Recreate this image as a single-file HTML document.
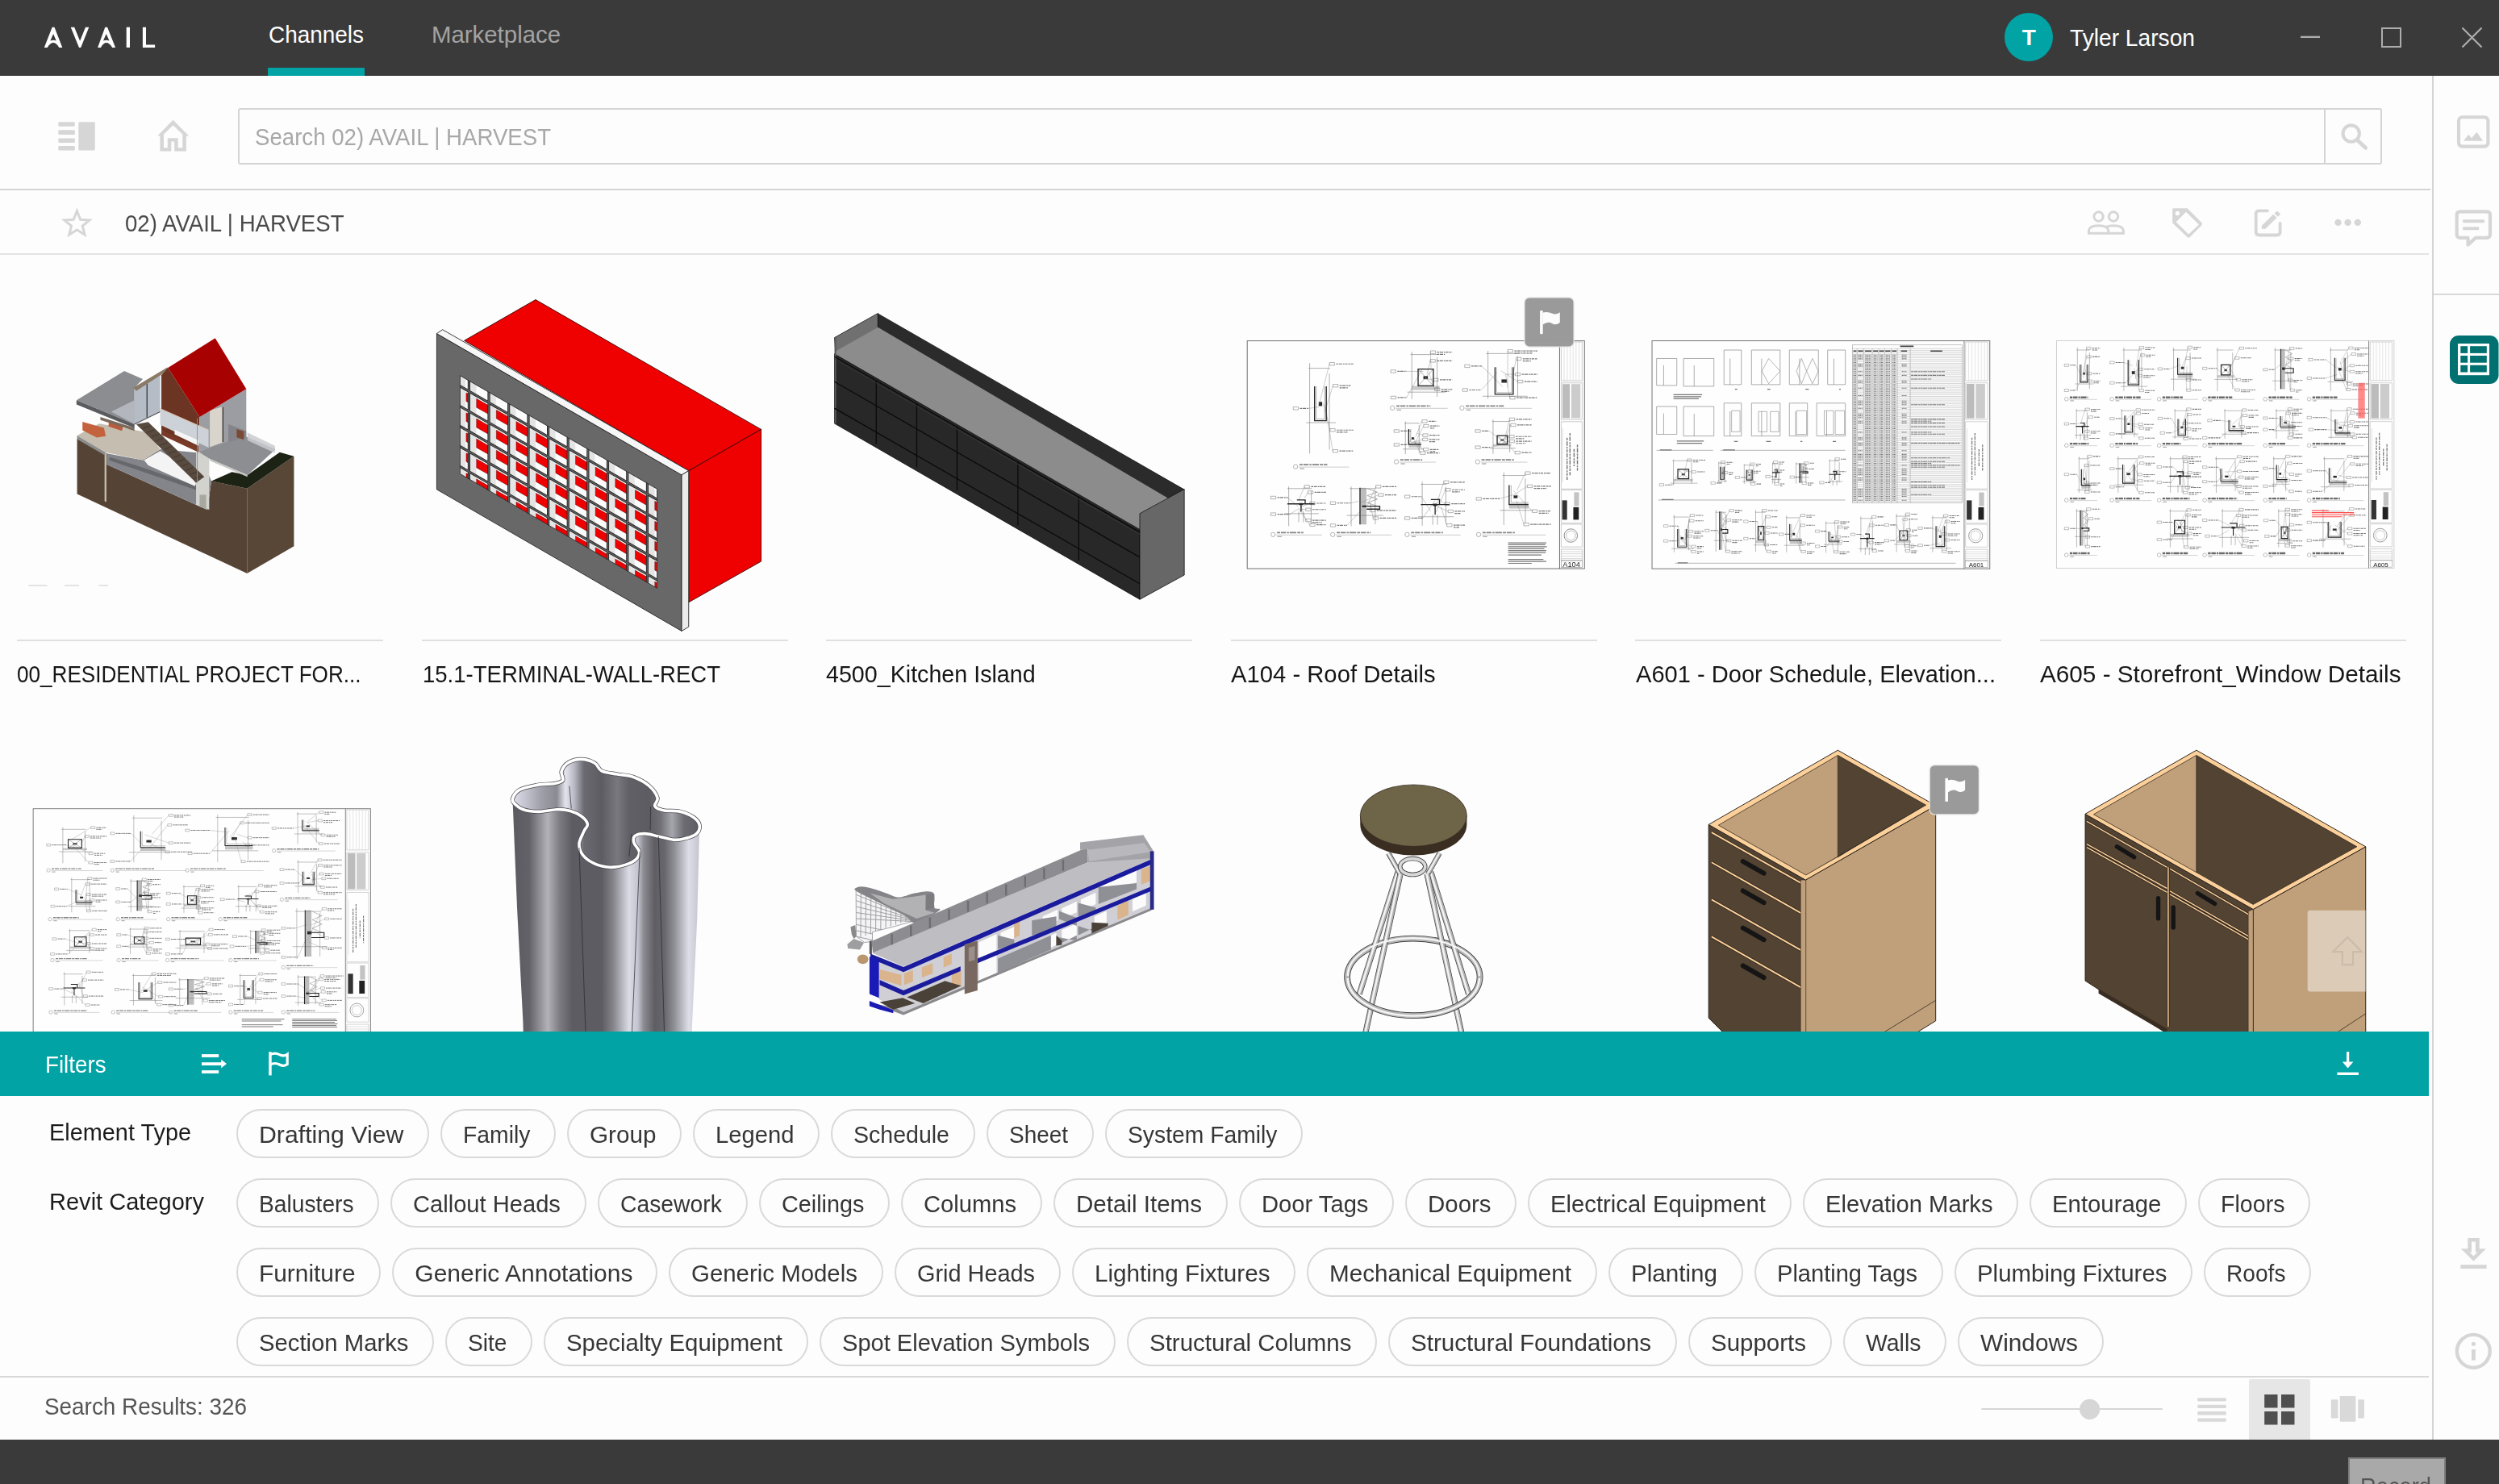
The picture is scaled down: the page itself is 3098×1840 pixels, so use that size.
<!DOCTYPE html>
<html><head><meta charset="utf-8"><title>AVAIL</title>
<style>
html,body{margin:0;padding:0;}
html{width:3098px;height:1840px;overflow:hidden;}
body{width:3098px;height:1840px;position:relative;overflow:hidden;background:#fdfdfd;font-family:"Liberation Sans",sans-serif;}
.a{position:absolute;}
.t{position:absolute;white-space:nowrap;transform-origin:0 0;}
.pill{position:absolute;box-sizing:border-box;height:61px;border:2px solid #d9d9d9;border-radius:31px;background:#fdfdfd;}
svg{position:absolute;overflow:visible;}
</style></head><body><div id="w" style="position:absolute;left:0;top:0;width:3098px;height:1840px;overflow:hidden;opacity:0.999;">

<div class="a" style="left:0;top:0;width:3098px;height:94px;background:#3a3a3a;"></div>
<div class="a" style="left:332px;top:84px;width:120px;height:10px;background:#00a3a5;"></div>
<svg style="left:0;top:0" width="3098" height="94" viewBox="0 0 3098 94"><g fill="#ffffff">
<path fill-rule="evenodd" d="M64.7,33.7 L67.5,33.7 L77.3,58.9 L73.3,58.9 Q66.1,47.0 58.7,58.9 L54.8,58.9 Z M66.1,42.0 L69.7,50.4 Q66.1,49.3 62.4,50.4 Z"/>
<path d="M87.7,33.7 L92.2,33.7 L99.1,50.8 L106.0,33.7 L110.3,33.7 L100.2,58.9 L98.0,58.9 Z"/>
<path fill-rule="evenodd" d="M130.3,33.7 L133.1,33.7 L143.1,58.9 L139.2,58.9 Q131.7,47.0 124.9,58.9 L121.1,58.9 Z M131.7,42.0 L135.5,50.4 Q131.7,49.3 128.0,50.4 Z"/>
<rect x="156.7" y="33.7" width="4.3" height="25.2"/>
<path d="M176.9,33.7 H181 V55.6 H192.1 V58.9 H176.9 Z"/>
</g></svg>

<div class="t" style="left:333.00px;top:27.90px;font-size:30px;line-height:30px;color:#ffffff;transform:scaleX(0.9310);">Channels</div>
<div class="t" style="left:534.50px;top:27.90px;font-size:30px;line-height:30px;color:#a3a3a3;transform:scaleX(0.9793);">Marketplace</div>
<div class="a" style="left:2485px;top:16px;width:60px;height:60px;border-radius:30px;background:#00a3a5;"></div>
<div class="t" style="left:2506.80px;top:33.30px;font-size:28px;line-height:28px;color:#ffffff;font-weight:bold;">T</div>
<div class="t" style="left:2566.00px;top:32.41px;font-size:30px;line-height:30px;color:#ffffff;transform:scaleX(0.9387);">Tyler Larson</div>
<svg style="left:0;top:0" width="3098" height="94" viewBox="0 0 3098 94">
<rect x="2852" y="44.7" width="24" height="2.3" fill="#adadad"/>
<rect x="2953" y="35" width="23" height="23" fill="none" stroke="#adadad" stroke-width="2"/>
<path d="M3052.5,34.5 L3076.5,58.5 M3076.5,34.5 L3052.5,58.5" stroke="#adadad" stroke-width="2.2" fill="none"/>
</svg>

<div class="a" style="left:295px;top:134px;width:2658px;height:70px;box-sizing:border-box;border:2px solid #d4d4d4;border-radius:3px;"></div>
<div class="a" style="left:2881px;top:136px;width:2px;height:66px;background:#d4d4d4;"></div>
<div class="t" style="left:315.50px;top:155.41px;font-size:30px;line-height:30px;color:#a8a8a8;transform:scaleX(0.9210);">Search 02) AVAIL | HARVEST</div>
<div class="a" style="left:0;top:234px;width:3013px;height:2px;background:#d4d4d4;"></div>
<svg style="left:0;top:94px" width="3013" height="140" viewBox="0 94 3013 140"><g fill="#d6d6d6">
<rect x="72.3" y="151.2" width="20.5" height="5.6" rx="1.2"/>
<rect x="72.3" y="161.3" width="20.5" height="5.6" rx="1.2"/>
<rect x="72.3" y="171.4" width="20.5" height="5.6" rx="1.2"/>
<rect x="72.3" y="181" width="20.5" height="5.6" rx="1.2"/>
<rect x="97.3" y="151.2" width="20.5" height="35.4" rx="1.5"/>
<path d="M214.5,148.8 L234.2,168.4 L230.9,168.4 L230.9,187.6 L216.2,187.6 L216.2,175.6 L212.3,175.6 L212.3,187.6 L198.4,187.6 L198.4,168.4 L195.2,168.4 Z M214.5,155.2 L203,166.6 L203,183.2 L207.8,183.2 L207.8,171.2 L220.7,171.2 L220.7,183.2 L226.3,183.2 L226.3,166.6 Z" fill-rule="evenodd"/>
</g>
<circle cx="2914.7" cy="165.6" r="10.2" fill="none" stroke="#d6d6d6" stroke-width="4.1"/>
<path d="M2922.6,174 L2932.6,183.3" stroke="#d6d6d6" stroke-width="4.8" stroke-linecap="round" fill="none"/>
</svg>

<div class="t" style="left:155.30px;top:261.81px;font-size:30px;line-height:30px;color:#4a4a4a;transform:scaleX(0.9199);">02) AVAIL | HARVEST</div>
<div class="a" style="left:0;top:314px;width:3011px;height:2px;background:#e4e4e4;"></div>
<svg style="left:0;top:236px" width="3013" height="78" viewBox="0 236 3013 78">
<path d="M95.4,261.6 L99.7,272.2 L111,272.9 L102.3,280.1 L105.1,291.1 L95.4,285.0 L85.7,291.1 L88.5,280.1 L79.8,272.9 L91.1,272.2 Z" fill="none" stroke="#d6d6d6" stroke-width="3" stroke-linejoin="miter"/>
<g fill="none" stroke="#d6d6d6" stroke-width="3">
<circle cx="2601.6" cy="268.5" r="5.7"/><circle cx="2620" cy="268.5" r="5.7"/>
<path d="M2589.5,289.2 L2589.5,285.5 Q2590.5,279.7 2601.6,279.7 Q2612.7,279.7 2613.7,285.5 L2613.7,289.2 Z"/>
<path d="M2611,281.3 Q2614.5,279.7 2620,279.7 Q2631.5,279.7 2632.4,285.5 L2632.4,289.2 L2613.7,289.2"/>
</g>
<g fill="#d6d6d6">
<path fill-rule="evenodd" d="M2694.6,258.2 L2711.6,258.2 L2729.4,276 Q2730.6,277.7 2729.4,279.2 L2714.8,294 Q2713.2,295.3 2711.6,294 L2693.2,276.4 L2693.2,259.6 Q2693.2,258.2 2694.6,258.2 Z M2710,262.8 L2697.6,275.3 L2713.2,290.6 L2726,278.4 Z M2699.4,261.8 A2.7,2.7 0 1 0 2699.4,267.2 A2.7,2.7 0 1 0 2699.4,261.8 Z"/>
<path d="M2803.9,279.7 L2818.2,265.8 L2822.5,270 L2808.4,283.8 L2803.9,283.8 Z"/>
<path d="M2819.6,264.4 L2823.2,261.4 L2827.2,265.4 L2823.8,268.8 Z"/>
<circle cx="2898.5" cy="275.9" r="4.2"/><circle cx="2910.6" cy="275.9" r="4.2"/><circle cx="2922.8" cy="275.9" r="4.2"/>
</g>
<path d="M2811,261.3 L2800.5,261.3 Q2796.7,261.3 2796.7,265 L2796.7,287.8 Q2796.7,291.5 2800.5,291.5 L2822.8,291.5 Q2826.6,291.5 2826.6,287.8 L2826.6,277" fill="none" stroke="#d6d6d6" stroke-width="3.8" stroke-linecap="round"/>
</svg>

<div class="a" style="left:21px;top:793px;width:454px;height:2px;background:#e0e0e0;"></div>
<div class="t" style="left:20.80px;top:821.40px;font-size:30px;line-height:30px;color:#161616;transform:scaleX(0.8702);">00_RESIDENTIAL PROJECT FOR...</div>
<div class="a" style="left:522.6px;top:793px;width:454px;height:2px;background:#e0e0e0;"></div>
<div class="t" style="left:523.50px;top:821.40px;font-size:30px;line-height:30px;color:#161616;transform:scaleX(0.9173);">15.1-TERMINAL-WALL-RECT</div>
<div class="a" style="left:1024.2px;top:793px;width:454px;height:2px;background:#e0e0e0;"></div>
<div class="t" style="left:1024.00px;top:821.40px;font-size:30px;line-height:30px;color:#161616;transform:scaleX(0.9549);">4500_Kitchen Island</div>
<div class="a" style="left:1525.8px;top:793px;width:454px;height:2px;background:#e0e0e0;"></div>
<div class="t" style="left:1526.40px;top:821.40px;font-size:30px;line-height:30px;color:#161616;transform:scaleX(0.9745);">A104 - Roof Details</div>
<div class="a" style="left:2027.4px;top:793px;width:454px;height:2px;background:#e0e0e0;"></div>
<div class="t" style="left:2028.20px;top:821.40px;font-size:30px;line-height:30px;color:#161616;transform:scaleX(0.9690);">A601 - Door Schedule, Elevation...</div>
<div class="a" style="left:2529px;top:793px;width:454px;height:2px;background:#e0e0e0;"></div>
<div class="t" style="left:2529.40px;top:821.40px;font-size:30px;line-height:30px;color:#161616;transform:scaleX(0.9903);">A605 - Storefront_Window Details</div>
<svg style="left:0;top:316px" width="3013" height="963" viewBox="0 316 3013 963">
<defs>
<linearGradient id="gb" x1="105" x2="1060" y1="0" y2="0" gradientUnits="userSpaceOnUse">
<stop offset="0.000" stop-color="#5a5a60"/>
<stop offset="0.089" stop-color="#626268"/>
<stop offset="0.188" stop-color="#b2b2b8"/>
<stop offset="0.251" stop-color="#7c7c82"/>
<stop offset="0.319" stop-color="#5c5c62"/>
<stop offset="0.476" stop-color="#5c5c62"/>
<stop offset="0.539" stop-color="#85858b"/>
<stop offset="0.623" stop-color="#dcdce6"/>
<stop offset="0.670" stop-color="#c4c4d0"/>
<stop offset="0.702" stop-color="#8a8a90"/>
<stop offset="0.759" stop-color="#5e5e64"/>
<stop offset="0.812" stop-color="#66666c"/>
<stop offset="0.864" stop-color="#8e8e95"/>
<stop offset="0.942" stop-color="#dedee8"/>
<stop offset="1.000" stop-color="#c4c4d0"/>
</linearGradient>
<linearGradient id="gi" x1="105" x2="1060" y1="0" y2="0" gradientUnits="userSpaceOnUse">
<stop offset="0.000" stop-color="#e0e0ea"/>
<stop offset="0.058" stop-color="#c8c8d4"/>
<stop offset="0.152" stop-color="#a0a0aa"/>
<stop offset="0.236" stop-color="#8a8a92"/>
<stop offset="0.283" stop-color="#e4e4ee"/>
<stop offset="0.330" stop-color="#b8b8c4"/>
<stop offset="0.382" stop-color="#6a6a70"/>
<stop offset="0.476" stop-color="#5c5c62"/>
<stop offset="0.560" stop-color="#78787e"/>
<stop offset="0.623" stop-color="#606066"/>
<stop offset="0.728" stop-color="#5c5c62"/>
<stop offset="0.791" stop-color="#707076"/>
<stop offset="0.853" stop-color="#a6a6ae"/>
<stop offset="0.916" stop-color="#6c6c72"/>
<stop offset="1.000" stop-color="#5c5c62"/>
</linearGradient>
<linearGradient id="gt" x1="0" x2="1" y1="0" y2="0"><stop offset="0" stop-color="#6a6a6a"/><stop offset="0.35" stop-color="#f0f0f0"/><stop offset="0.7" stop-color="#c8c8c8"/><stop offset="1" stop-color="#5a5a5a"/></linearGradient>
</defs>
<g transform="translate(80,400) scale(0.14821)">
<polygon points="105,971 105,1434 1527,2098 1527,1389 1228,1325 1194,1567 356,1187 356,1095" fill="#554435"/>
<polygon points="1527,1389 1919,1118 1919,1870 1527,2098" fill="#584637"/>
<polygon points="1228,1325 1527,1389 1919,1118 1800,1085 1530,1275 1400,1250" fill="#1d2314"/>
<polygon points="356,1095 356,1187 1194,1567 1228,1325 1130,1090 800,1060 655,1150" fill="#83858a"/>
<polygon points="380,1125 655,1212 1100,1365 1100,1400 370,1150" fill="#66686c"/>
<polygon points="665,1150 800,1075 1005,1195 1100,1345 1090,1368 700,1195" fill="#f4f4f4"/>
<polygon points="1100,1085 1210,1060 1210,1565 1100,1525" fill="#d2d3cf"/>
<polygon points="1130,1440 1185,1440 1185,1560 1130,1540" fill="#a8a89e"/>
<polygon points="335,1085 350,1090 350,1500 335,1495" fill="#c9c0b4"/>
<polygon points="105,945 290,845 600,900 700,920 800,1060 655,1150 340,1085" fill="#c5bdaf"/>
<polygon points="105,945 340,1085 340,1112 105,975" fill="#8c8c8a"/>
<polygon points="150,830 330,880 345,950 270,962 150,900" fill="#c4623e"/>
<polygon points="370,828 490,870 480,905 368,868" fill="#b85c40"/>
<polygon points="300,790 585,880 585,905 300,815" fill="#7a6a5c"/>
<polygon points="1120,1080 1330,1000 1520,955 1765,1060 1530,1275 1215,1140" fill="#8d8e92"/>
<polygon points="1530,920 1760,1030 1760,1092 1530,985" fill="#c9cbd0" opacity="0.85"/>
<polygon points="1215,1140 1530,1275 1530,1290 1215,1155" fill="#c8c8c4"/>
<polygon points="100,650 500,405 655,472 585,545 585,850" fill="#8b8d91"/>
<polygon points="100,650 585,850 585,882 100,685" fill="#5a5b5e"/>
<polygon points="390,745 585,650 585,848" fill="#b3b7bd"/>
<polygon points="585,545 800,440 800,745 690,795 585,850" fill="#b6bcc6"/>
<line x1="690" y1="500" x2="690" y2="795" stroke="#3a3d42" stroke-width="9"/>
<line x1="585" y1="850" x2="800" y2="745" stroke="#4a4d52" stroke-width="7"/>
<polygon points="575,545 860,375 872,395 600,572" fill="#8a7a68"/>
<polygon points="810,440 865,378 1130,790 1120,1080 810,900" fill="#6c3423"/>
<polygon points="1130,790 1520,555 1520,960 1330,1005 1120,1080" fill="#9c9ca3"/>
<polygon points="1215,735 1330,700 1330,1000 1215,1040" fill="#d9d4cc"/>
<line x1="1325" y1="705" x2="1325" y2="1000" stroke="#2c2c30" stroke-width="9"/>
<polygon points="1370,850 1520,905 1520,960 1370,1000" fill="#84848a"/>
<polygon points="1440,890 1500,910 1500,980 1440,960" fill="#7a4a34"/>
<polygon points="800,720 1205,900 1205,1045 800,855" fill="#cdd2d8"/>
<polygon points="920,895 1120,985 1120,1030 920,935" fill="#f6f6f6"/>
<line x1="800" y1="720" x2="1205" y2="900" stroke="#d8c8b8" stroke-width="8"/>
<polygon points="810,900 1120,1040 1120,1085 810,940" fill="#7a3a28"/>
<polygon points="865,378 1260,130 1520,555 1130,790" fill="#a80000"/>
<polygon points="600,850 700,832 1170,1290 1100,1340" fill="#584a3e"/>
<path d="M656,885 l60,-22 M692,920 l60,-22 M728,955 l60,-22 M764,990 l60,-22 M800,1025 l60,-22 M836,1060 l60,-22 M872,1095 l60,-22 M908,1130 l60,-22 M944,1165 l60,-22 M980,1200 l60,-22 M1016,1235 l60,-22 M1052,1270 l60,-22 M1088,1305 l60,-22" stroke="#3e342c" stroke-width="6" fill="none"/>
<line x1="1110" y1="800" x2="1110" y2="1340" stroke="#8a8f96" stroke-width="6"/>
</g>
<g transform="translate(20,380) scale(0.25613)">
<path d="M60,1350 h90 M235,1350 h70 M400,1350 h45" stroke="#d4d4d4" stroke-width="5" fill="none"/>
</g>
<g transform="translate(522,360) scale(0.28973)">
<polygon points="185,215 490,40 1455,595 1145,772" fill="#f00000" stroke="#300" stroke-width="3"/>
<polygon points="1145,772 1455,595 1455,1160 1145,1335" fill="#f00000" stroke="#300" stroke-width="3"/>
<polygon points="67,185 67,852 1115,1458 1115,790" fill="#686868" stroke="#222" stroke-width="3"/>
<polygon points="67,185 92,168 1145,772 1115,790" fill="#f6f6f6" stroke="#222" stroke-width="3"/>
<polygon points="1115,790 1145,772 1145,1440 1115,1458" fill="#ebebeb" stroke="#222" stroke-width="3"/>
<clipPath id="cg"><polygon points="167,365 167,785 1010,1275 1010,850"/></clipPath>
<polygon points="167,365 167,785 1010,1275 1010,850" fill="#fbfbfb"/>
<g clip-path="url(#cg)">
<path d="M163,321 L190,337 L190,423 L163,407Z M163,407 L190,423 L190,509 L163,493Z M163,493 L190,509 L190,595 L163,579Z M163,579 L190,595 L190,681 L163,665Z M163,665 L190,681 L190,767 L163,751Z M163,751 L190,767 L190,853 L163,837Z M205,346 L236,363 L236,449 L205,432Z M205,432 L236,449 L236,535 L205,518Z M205,518 L236,535 L236,621 L205,604Z M205,604 L236,621 L236,707 L205,690Z M205,690 L236,707 L236,793 L205,776Z M205,776 L236,793 L236,879 L205,862Z M290,395 L320,412 L320,498 L290,481Z M290,481 L320,498 L320,584 L290,567Z M290,567 L320,584 L320,670 L290,653Z M290,653 L320,670 L320,756 L290,739Z M290,739 L320,756 L320,842 L290,825Z M290,825 L320,842 L320,928 L290,911Z M375,443 L405,461 L405,547 L375,529Z M375,529 L405,547 L405,633 L375,615Z M375,615 L405,633 L405,719 L375,701Z M375,701 L405,719 L405,805 L375,787Z M375,787 L405,805 L405,891 L375,873Z M375,873 L405,891 L405,977 L375,959Z M459,492 L490,510 L490,596 L459,578Z M459,578 L490,596 L490,682 L459,664Z M459,664 L490,682 L490,768 L459,750Z M459,750 L490,768 L490,854 L459,836Z M459,836 L490,854 L490,940 L459,922Z M459,922 L490,940 L490,1026 L459,1008Z M544,541 L575,559 L575,645 L544,627Z M544,627 L575,645 L575,731 L544,713Z M544,713 L575,731 L575,817 L544,799Z M544,799 L575,817 L575,903 L544,885Z M544,885 L575,903 L575,989 L544,971Z M544,971 L575,989 L575,1075 L544,1057Z M629,590 L660,607 L660,693 L629,676Z M629,676 L660,693 L660,779 L629,762Z M629,762 L660,779 L660,865 L629,848Z M629,848 L660,865 L660,951 L629,934Z M629,934 L660,951 L660,1037 L629,1020Z M629,1020 L660,1037 L660,1123 L629,1106Z M714,639 L744,656 L744,742 L714,725Z M714,725 L744,742 L744,828 L714,811Z M714,811 L744,828 L744,914 L714,897Z M714,897 L744,914 L744,1000 L714,983Z M714,983 L744,1000 L744,1086 L714,1069Z M714,1069 L744,1086 L744,1172 L714,1155Z M799,687 L829,705 L829,791 L799,773Z M799,773 L829,791 L829,877 L799,859Z M799,859 L829,877 L829,963 L799,945Z M799,945 L829,963 L829,1049 L799,1031Z M799,1031 L829,1049 L829,1135 L799,1117Z M799,1117 L829,1135 L829,1221 L799,1203Z M883,736 L914,754 L914,840 L883,822Z M883,822 L914,840 L914,926 L883,908Z M883,908 L914,926 L914,1012 L883,994Z M883,994 L914,1012 L914,1098 L883,1080Z M883,1080 L914,1098 L914,1184 L883,1166Z M883,1166 L914,1184 L914,1270 L883,1252Z M968,785 L999,803 L999,889 L968,871Z M968,871 L999,889 L999,975 L968,957Z M968,957 L999,975 L999,1061 L968,1043Z M968,1043 L999,1061 L999,1147 L968,1129Z M968,1129 L999,1147 L999,1233 L968,1215Z M968,1215 L999,1233 L999,1319 L968,1301Z" fill="#e4e4e4"/>
<path d="M193,438 L204,444 L204,482 L193,475Z M193,524 L204,530 L204,568 L193,561Z M193,610 L204,616 L204,654 L193,647Z M193,696 L204,702 L204,740 L193,733Z M193,782 L204,788 L204,826 L193,819Z M237,463 L289,493 L289,530 L237,501Z M237,549 L289,579 L289,616 L237,587Z M237,635 L289,665 L289,702 L237,673Z M237,721 L289,751 L289,788 L237,759Z M237,807 L289,837 L289,874 L237,845Z M322,512 L374,542 L374,579 L322,549Z M322,598 L374,628 L374,665 L322,635Z M322,684 L374,714 L374,751 L322,721Z M322,770 L374,800 L374,837 L322,807Z M322,856 L374,886 L374,923 L322,893Z M407,561 L459,591 L459,628 L407,598Z M407,647 L459,677 L459,714 L407,684Z M407,733 L459,763 L459,800 L407,770Z M407,819 L459,849 L459,886 L407,856Z M407,905 L459,935 L459,972 L407,942Z M492,610 L543,639 L543,677 L492,647Z M492,696 L543,725 L543,763 L492,733Z M492,782 L543,811 L543,849 L492,819Z M492,868 L543,897 L543,935 L492,905Z M492,954 L543,983 L543,1021 L492,991Z M576,658 L628,688 L628,726 L576,696Z M576,744 L628,774 L628,812 L576,782Z M576,830 L628,860 L628,898 L576,868Z M576,916 L628,946 L628,984 L576,954Z M576,1002 L628,1032 L628,1070 L576,1040Z M661,707 L713,737 L713,774 L661,745Z M661,793 L713,823 L713,860 L661,831Z M661,879 L713,909 L713,946 L661,917Z M661,965 L713,995 L713,1032 L661,1003Z M661,1051 L713,1081 L713,1118 L661,1089Z M746,756 L798,786 L798,823 L746,793Z M746,842 L798,872 L798,909 L746,879Z M746,928 L798,958 L798,995 L746,965Z M746,1014 L798,1044 L798,1081 L746,1051Z M746,1100 L798,1130 L798,1167 L746,1137Z M831,805 L883,835 L883,872 L831,842Z M831,891 L883,921 L883,958 L831,928Z M831,977 L883,1007 L883,1044 L831,1014Z M831,1063 L883,1093 L883,1130 L831,1100Z M831,1149 L883,1179 L883,1216 L831,1186Z M916,854 L967,883 L967,921 L916,891Z M916,940 L967,969 L967,1007 L916,977Z M916,1026 L967,1055 L967,1093 L916,1063Z M916,1112 L967,1141 L967,1179 L916,1149Z M916,1198 L967,1227 L967,1265 L916,1235Z M1000,902 L1052,932 L1052,970 L1000,940Z M1000,988 L1052,1018 L1052,1056 L1000,1026Z M1000,1074 L1052,1104 L1052,1142 L1000,1112Z M1000,1160 L1052,1190 L1052,1228 L1000,1198Z M1000,1246 L1052,1276 L1052,1314 L1000,1284Z" fill="#f00000" stroke="#400" stroke-width="1.5"/>
<path d="M205,346 L205,862 M290,395 L290,911 M375,443 L375,959 M459,492 L459,1008 M544,541 L544,1057 M629,590 L629,1106 M714,639 L714,1155 M799,687 L799,1203 M883,736 L883,1252 M968,785 L968,1301 M120,383 L1053,920 M120,469 L1053,1006 M120,555 L1053,1092 M120,641 L1053,1178 M120,727 L1053,1264" stroke="#1c1c1c" stroke-width="11" fill="none"/>
<path d="M205,346 L205,862 M290,395 L290,911 M375,443 L375,959 M459,492 L459,1008 M544,541 L544,1057 M629,590 L629,1106 M714,639 L714,1155 M799,687 L799,1203 M883,736 L883,1252 M968,785 L968,1301 M120,383 L1053,920 M120,469 L1053,1006 M120,555 L1053,1092 M120,641 L1053,1178 M120,727 L1053,1264" stroke="#5c5c5c" stroke-width="6" fill="none"/>
</g>
<polygon points="167,365 167,785 1010,1275 1010,850" fill="none" stroke="#222" stroke-width="3"/>
</g>
<g transform="translate(1024,370) scale(0.26283)">
<polygon points="40,185 245,70 245,140 45,252" fill="#707070" stroke="#1a1a1a" stroke-width="3"/>
<polygon points="245,72 1690,902 1612,945 245,138" fill="#2b2b2b" stroke="#111" stroke-width="3"/>
<polygon points="40,262 46,248 245,136 1612,942 1480,1018 1480,1090" fill="#8c8c8c"/>
<polygon points="40,262 40,590 1480,1420 1480,1090" fill="#282828" stroke="#0c0c0c" stroke-width="3"/>
<polygon points="1480,1015 1690,900 1690,1305 1480,1420" fill="#676767" stroke="#111" stroke-width="3"/>
<polygon points="40,185 48,180 48,590 40,590" fill="#5a5a5a"/>
<path d="M237,385 L237,687 M428,495 L428,797 M618,604 L618,906 M905,769 L905,1071 M1192,934 L1192,1236 M40,275 L1480,1103 M40,393 L1480,1221 M40,518 L1480,1346" stroke="#0a0a0a" stroke-width="5" fill="none"/>
<line x1="40" y1="285" x2="1480" y2="1113" stroke="#3c3c3c" stroke-width="3"/>
</g>
<g transform="translate(1536,360) scale(0.24265)">
<rect x="42" y="258" width="1723" height="1164" fill="#fefefe" stroke="#6c6c6c" stroke-width="4"/>
<path d="M1638,258 V1422" stroke="#555" stroke-width="3.5" fill="none"/>
<path d="M1646,264 H1753 V462 H1646Z M1646,473 H1753 V660 H1646Z M1646,671 H1753 V1015 H1646Z M1646,1020 H1753 V1189 H1646Z M1646,1195 H1753 V1311 H1646Z M1646,1323 H1753 V1381 H1646Z" stroke="#aaa" stroke-width="2.5" fill="none"/>
<path d="M1661,264 V462 M1677,264 V462 M1692,264 V462 M1707,264 V462 M1722,264 V462 M1738,264 V462" stroke="#c4c4c4" stroke-width="2" fill="none"/>
<rect x="1652" y="479" width="38" height="174" fill="#8f8f8f" opacity="0.6"/>
<rect x="1698" y="479" width="46" height="174" fill="#9a9a9a" opacity="0.5"/>
<path d="M1653,706 V980" stroke="#bbb" stroke-width="2" fill="none"/>
<path d="M1676,753 V968 M1691,729 V945 M1712,811 V898 M1729,788 V921" stroke="#777" stroke-width="6" stroke-dasharray="14 5 22 6 9 4" fill="none"/>
<rect x="1651" y="1073" width="25" height="99" fill="#333"/>
<rect x="1708" y="1108" width="28" height="64" fill="#222"/>
<rect x="1712" y="1032" width="25" height="70" fill="#aaa" opacity="0.7"/>
<circle cx="1695" cy="1253" r="34" fill="none" stroke="#777" stroke-width="3.5"/>
<circle cx="1695" cy="1253" r="24" fill="none" stroke="#999" stroke-width="2.5"/>
<path d="M1646,1335 H1753 M1646,1346 H1753 M1646,1358 H1753 M1646,1370 H1753" stroke="#b5b5b5" stroke-width="2" fill="none"/>
<rect x="1646" y="1380" width="107" height="36" fill="none" stroke="#888" stroke-width="2.5"/>
<text x="1698" y="1412" font-family="Liberation Sans, sans-serif" font-size="38" fill="#222" text-anchor="middle">A104</text>
<rect x="407" y="570" width="18" height="21" fill="#2a2a2a"/>
<path d="M394,490 V658 H438 V490 M361,372 V834 M462,425 V813 M343,676 H495 M355,398 H465" stroke="#6e6e6e" stroke-width="2.2" fill="none"/>
<path d="M462,376 L409,583 M480,487 L438,622 M357,603 L409,596 M465,714 L431,579 M479,821 L440,585" stroke="#8a8a8a" stroke-width="1.8" fill="none"/>
<path d="M462,369 h26 v14 h-26Z M480,480 h26 v14 h-26Z M277,596 h26 v14 h-26Z M465,707 h26 v14 h-26Z M479,814 h26 v14 h-26Z" stroke="#666" stroke-width="2" fill="none"/>
<path d="M496,376 h88 M514,487 h56 M514,498 h43 M311,603 h46 M499,714 h85 M499,725 h55 M513,821 h69" stroke="#777" stroke-width="5" stroke-dasharray="11 3 17 4 7 3 13 4" fill="none"/>
<path d="M386,490 V666 H446 V490" stroke="#262626" stroke-width="5.5" fill="none"/>
<circle cx="289" cy="901" r="11" fill="none" stroke="#666" stroke-width="2"/>
<path d="M309,891 h142" stroke="#858585" stroke-width="7" stroke-dasharray="16 4 26 5 10 4 34 5" fill="none"/>
<path d="M305,903 H562" stroke="#999" stroke-width="2" fill="none"/>
<path d="M311,911 h22" stroke="#888" stroke-width="4" fill="none"/>
<rect x="883" y="488" width="141" height="21" fill="#c9c9c9"/>
<rect x="942" y="438" width="23" height="16" fill="#2a2a2a"/>
<path d="M915,402 l78,86 M993,402 l-78,86 M883,314 V555 M1012,342 V544 M860,520 H1055 M876,328 H1016" stroke="#6e6e6e" stroke-width="2.2" fill="none"/>
<path d="M978,316 L981,397 M977,360 L960,429 M856,414 L941,414 M992,457 L950,451 M1000,506 L969,418 M856,548 L939,397" stroke="#8a8a8a" stroke-width="1.8" fill="none"/>
<path d="M978,309 h26 v14 h-26Z M977,353 h26 v14 h-26Z M775,407 h26 v14 h-26Z M992,450 h26 v14 h-26Z M1000,499 h26 v14 h-26Z M776,541 h26 v14 h-26Z" stroke="#666" stroke-width="2" fill="none"/>
<path d="M1012,316 h77 M1012,327 h40 M1011,360 h78 M809,414 h47 M1026,457 h63 M1034,506 h55 M1034,517 h39 M810,548 h47" stroke="#777" stroke-width="5" stroke-dasharray="11 3 17 4 7 3 13 4" fill="none"/>
<path d="M915,402 h78 v86 h-78Z" stroke="#262626" stroke-width="5.5" fill="none"/>
<circle cx="784" cy="601" r="11" fill="none" stroke="#666" stroke-width="2"/>
<path d="M804,591 h174" stroke="#858585" stroke-width="7" stroke-dasharray="16 4 26 5 10 4 34 5" fill="none"/>
<path d="M800,603 H1066" stroke="#999" stroke-width="2" fill="none"/>
<path d="M806,611 h22" stroke="#888" stroke-width="4" fill="none"/>
<rect x="1341" y="455" width="28" height="17" fill="#2a2a2a"/>
<path d="M1316,393 V523 H1393 V393 M1272,309 V554 M1424,337 V543 M1244,541 H1474 M1262,323 H1428" stroke="#6e6e6e" stroke-width="2.2" fill="none"/>
<path d="M1373,310 L1373,497 M1416,350 L1398,443 M1240,387 L1348,493 M1411,429 L1358,429 M1424,466 L1338,411 M1238,509 L1318,420 M1384,549 L1362,433" stroke="#8a8a8a" stroke-width="1.8" fill="none"/>
<path d="M1373,303 h26 v14 h-26Z M1416,343 h26 v14 h-26Z M1153,380 h26 v14 h-26Z M1411,422 h26 v14 h-26Z M1424,459 h26 v14 h-26Z M1142,502 h26 v14 h-26Z M1384,542 h26 v14 h-26Z" stroke="#666" stroke-width="2" fill="none"/>
<path d="M1407,310 h117 M1407,321 h91 M1450,350 h74 M1450,361 h41 M1187,387 h53 M1445,429 h79 M1458,466 h66 M1176,509 h62 M1418,549 h106" stroke="#777" stroke-width="5" stroke-dasharray="11 3 17 4 7 3 13 4" fill="none"/>
<path d="M1308,393 V531 H1401 V393" stroke="#262626" stroke-width="5.5" fill="none"/>
<circle cx="1139" cy="601" r="11" fill="none" stroke="#666" stroke-width="2"/>
<path d="M1159,591 h194" stroke="#858585" stroke-width="7" stroke-dasharray="16 4 26 5 10 4 34 5" fill="none"/>
<path d="M1155,603 H1496" stroke="#999" stroke-width="2" fill="none"/>
<path d="M1161,611 h22" stroke="#888" stroke-width="4" fill="none"/>
<rect x="867" y="786" width="64" height="17" fill="#c4c4c4"/>
<rect x="882" y="751" width="13" height="11" fill="#2a2a2a"/>
<path d="M877,709 V776 H931 M850,670 V837 M920,689 V829 M837,811 H943 M846,679 H922" stroke="#6e6e6e" stroke-width="2.2" fill="none"/>
<path d="M935,669 L902,749 M943,693 L895,789 M878,719 L876,721 M939,740 L907,731 M938,762 L883,777 M864,789 L881,755 M942,813 L896,775 M926,831 L891,753" stroke="#8a8a8a" stroke-width="1.8" fill="none"/>
<path d="M935,662 h26 v14 h-26Z M943,686 h26 v14 h-26Z M792,712 h26 v14 h-26Z M939,733 h26 v14 h-26Z M938,755 h26 v14 h-26Z M792,782 h26 v14 h-26Z M942,806 h26 v14 h-26Z M926,824 h26 v14 h-26Z" stroke="#666" stroke-width="2" fill="none"/>
<path d="M969,669 h38 M977,693 h47 M977,704 h21 M826,719 h52 M973,740 h51 M972,762 h52 M972,773 h30 M826,789 h38 M976,813 h46 M976,824 h26 M960,831 h64" stroke="#777" stroke-width="5" stroke-dasharray="11 3 17 4 7 3 13 4" fill="none"/>
<path d="M867,709 V786 H931" stroke="#262626" stroke-width="5.5" fill="none"/>
<circle cx="804" cy="876" r="11" fill="none" stroke="#666" stroke-width="2"/>
<path d="M824,866 h112" stroke="#858585" stroke-width="7" stroke-dasharray="16 4 26 5 10 4 34 5" fill="none"/>
<path d="M820,878 H1006" stroke="#999" stroke-width="2" fill="none"/>
<path d="M826,886 h22" stroke="#888" stroke-width="4" fill="none"/>
<rect x="1298" y="786" width="93" height="11" fill="#c9c9c9"/>
<rect x="1337" y="761" width="15" height="8" fill="#2a2a2a"/>
<path d="M1319,742 l52,44 M1371,742 l-52,44 M1298,660 V836 M1383,680 V828 M1283,807 H1412 M1293,670 H1386" stroke="#6e6e6e" stroke-width="2.2" fill="none"/>
<path d="M1382,659 L1352,784 M1388,688 L1361,762 M1279,719 L1344,769 M1380,747 L1361,765 M1381,771 L1345,779 M1285,802 L1335,789 M1410,829 L1350,760" stroke="#8a8a8a" stroke-width="1.8" fill="none"/>
<path d="M1382,652 h26 v14 h-26Z M1388,681 h26 v14 h-26Z M1207,712 h26 v14 h-26Z M1380,740 h26 v14 h-26Z M1381,764 h26 v14 h-26Z M1207,795 h26 v14 h-26Z M1410,822 h26 v14 h-26Z" stroke="#666" stroke-width="2" fill="none"/>
<path d="M1416,659 h78 M1422,688 h72 M1241,719 h37 M1414,747 h80 M1414,758 h44 M1415,771 h79 M1415,782 h49 M1241,802 h44 M1444,829 h50" stroke="#777" stroke-width="5" stroke-dasharray="11 3 17 4 7 3 13 4" fill="none"/>
<path d="M1319,742 h52 v44 h-52Z" stroke="#262626" stroke-width="5.5" fill="none"/>
<circle cx="1219" cy="876" r="11" fill="none" stroke="#666" stroke-width="2"/>
<path d="M1239,866 h168" stroke="#858585" stroke-width="7" stroke-dasharray="16 4 26 5 10 4 34 5" fill="none"/>
<path d="M1235,878 H1473" stroke="#999" stroke-width="2" fill="none"/>
<path d="M1241,886 h22" stroke="#888" stroke-width="4" fill="none"/>
<rect x="306" y="1087" width="21" height="10" fill="#2a2a2a"/>
<path d="M305,1131 V1185 M329,1131 V1185 M254,1002 V1205 M369,1025 V1196 M233,1141 H407 M247,1013 H372" stroke="#6e6e6e" stroke-width="2.2" fill="none"/>
<path d="M334,1003 L306,1069 M352,1032 L335,1060 M249,1059 L303,1105 M362,1088 L316,1108 M341,1120 L313,1117 M260,1144 L308,1114 M341,1175 L316,1101 M362,1198 L306,1117" stroke="#8a8a8a" stroke-width="1.8" fill="none"/>
<path d="M334,996 h26 v14 h-26Z M352,1025 h26 v14 h-26Z M162,1052 h26 v14 h-26Z M362,1081 h26 v14 h-26Z M341,1113 h26 v14 h-26Z M162,1137 h26 v14 h-26Z M341,1168 h26 v14 h-26Z M362,1191 h26 v14 h-26Z" stroke="#666" stroke-width="2" fill="none"/>
<path d="M368,1003 h76 M386,1032 h58 M196,1059 h53 M396,1088 h48 M375,1120 h69 M196,1144 h64 M375,1175 h69 M375,1186 h49 M396,1198 h48" stroke="#777" stroke-width="5" stroke-dasharray="11 3 17 4 7 3 13 4" fill="none"/>
<path d="M247,1091 H386 M317,1091 V1131 M296,1071 h42 v20" stroke="#262626" stroke-width="5.5" fill="none"/>
<circle cx="174" cy="1248" r="11" fill="none" stroke="#666" stroke-width="2"/>
<path d="M194,1238 h135" stroke="#858585" stroke-width="7" stroke-dasharray="16 4 26 5 10 4 34 5" fill="none"/>
<path d="M190,1250 H423" stroke="#999" stroke-width="2" fill="none"/>
<path d="M196,1258 h22" stroke="#888" stroke-width="4" fill="none"/>
<rect x="618" y="1009" width="33" height="187" fill="#bdbdbd"/>
<rect x="629" y="1099" width="22" height="9" fill="#2a2a2a"/>
<path d="M655,1013 L707,1031 L655,1049 L707,1067 L655,1085 L707,1103 M573,1002 V1205 M696,1025 V1196 M551,1150 H737 M566,1013 H700" stroke="#6e6e6e" stroke-width="2.2" fill="none"/>
<path d="M699,1003 L654,1104 M712,1045 L624,1084 M569,1087 L611,1078 M670,1125 L671,1086 M685,1164 L671,1087 M552,1201 L629,1118" stroke="#8a8a8a" stroke-width="1.8" fill="none"/>
<path d="M699,996 h26 v14 h-26Z M712,1038 h26 v14 h-26Z M467,1080 h26 v14 h-26Z M670,1118 h26 v14 h-26Z M685,1157 h26 v14 h-26Z M467,1194 h26 v14 h-26Z" stroke="#666" stroke-width="2" fill="none"/>
<path d="M733,1003 h71 M746,1045 h58 M501,1087 h68 M704,1125 h100 M719,1164 h85 M501,1201 h51" stroke="#777" stroke-width="5" stroke-dasharray="11 3 17 4 7 3 13 4" fill="none"/>
<path d="M618,1009 V1196 M652,1103 h67 v15 h-67" stroke="#262626" stroke-width="5.5" fill="none"/>
<circle cx="479" cy="1248" r="11" fill="none" stroke="#666" stroke-width="2"/>
<path d="M499,1238 h174" stroke="#858585" stroke-width="7" stroke-dasharray="16 4 26 5 10 4 34 5" fill="none"/>
<path d="M495,1250 H780" stroke="#999" stroke-width="2" fill="none"/>
<path d="M501,1258 h22" stroke="#888" stroke-width="4" fill="none"/>
<rect x="991" y="1090" width="22" height="12" fill="#2a2a2a"/>
<path d="M990,1147 V1198 M1014,1147 V1198 M936,978 V1203 M1057,1004 V1193 M914,1157 H1097 M929,991 H1061" stroke="#6e6e6e" stroke-width="2.2" fill="none"/>
<path d="M1046,980 L1007,1100 M1054,1019 L1007,1134 M932,1054 L979,1129 M1051,1091 L1016,1059 M1068,1129 L1014,1105 M938,1164 L1002,1074 M1062,1200 L1032,1107" stroke="#8a8a8a" stroke-width="1.8" fill="none"/>
<path d="M1046,973 h26 v14 h-26Z M1054,1012 h26 v14 h-26Z M847,1047 h26 v14 h-26Z M1051,1084 h26 v14 h-26Z M1068,1122 h26 v14 h-26Z M847,1157 h26 v14 h-26Z M1062,1193 h26 v14 h-26Z" stroke="#666" stroke-width="2" fill="none"/>
<path d="M1080,980 h74 M1088,1019 h66 M1088,1030 h40 M881,1054 h51 M1085,1091 h69 M1102,1129 h52 M1102,1140 h29 M881,1164 h57 M1096,1200 h58 M1096,1211 h29" stroke="#777" stroke-width="5" stroke-dasharray="11 3 17 4 7 3 13 4" fill="none"/>
<path d="M929,1095 H1075 M1002,1095 V1147 M980,1069 h44 v26" stroke="#262626" stroke-width="5.5" fill="none"/>
<circle cx="859" cy="1248" r="11" fill="none" stroke="#666" stroke-width="2"/>
<path d="M879,1238 h163" stroke="#858585" stroke-width="7" stroke-dasharray="16 4 26 5 10 4 34 5" fill="none"/>
<path d="M875,1250 H1132" stroke="#999" stroke-width="2" fill="none"/>
<path d="M881,1258 h22" stroke="#888" stroke-width="4" fill="none"/>
<rect x="1380" y="1094" width="100" height="21" fill="#c4c4c4"/>
<rect x="1403" y="1048" width="20" height="14" fill="#2a2a2a"/>
<path d="M1390,995 V1084 H1479 M1353,930 V1199 M1463,961 V1187 M1333,1124 H1499 M1346,946 H1466" stroke="#6e6e6e" stroke-width="2.2" fill="none"/>
<path d="M1462,934 L1420,1022 M1473,1001 L1406,1044 M1331,1065 L1404,1044 M1498,1128 L1401,1022 M1455,1196 L1418,1075" stroke="#8a8a8a" stroke-width="1.8" fill="none"/>
<path d="M1462,927 h26 v14 h-26Z M1473,994 h26 v14 h-26Z M1212,1058 h26 v14 h-26Z M1498,1121 h26 v14 h-26Z M1455,1189 h26 v14 h-26Z" stroke="#666" stroke-width="2" fill="none"/>
<path d="M1496,934 h98 M1507,1001 h87 M1507,1012 h65 M1246,1065 h85 M1532,1128 h62 M1532,1139 h49 M1489,1196 h105" stroke="#777" stroke-width="5" stroke-dasharray="11 3 17 4 7 3 13 4" fill="none"/>
<path d="M1380,995 V1094 H1479" stroke="#262626" stroke-width="5.5" fill="none"/>
<circle cx="1224" cy="1248" r="11" fill="none" stroke="#666" stroke-width="2"/>
<path d="M1244,1238 h167" stroke="#858585" stroke-width="7" stroke-dasharray="16 4 26 5 10 4 34 5" fill="none"/>
<path d="M1240,1250 H1567" stroke="#999" stroke-width="2" fill="none"/>
<path d="M1246,1258 h22" stroke="#888" stroke-width="4" fill="none"/>
<path d="M1375,1290 h195 M1375,1300 h190 M1375,1310 h198 M1375,1320 h185 M1375,1330 h195 M1375,1340 h192 M1375,1352 h170 M1375,1375 h180 M1375,1385 h195 M1375,1395 h120" stroke="#7a7a7a" stroke-width="5" fill="none"/>
</g>
<g transform="translate(2038,410) scale(0.20893)">
<rect x="48" y="60" width="2004" height="1353" fill="#fefefe" stroke="#7a7a7a" stroke-width="5"/>
<path d="M1900,60 V1413" stroke="#555" stroke-width="3.5" fill="none"/>
<path d="M1908,67 H2040 V297 H1908Z M1908,310 H2040 V527 H1908Z M1908,540 H2040 V939 H1908Z M1908,946 H2040 V1142 H1908Z M1908,1149 H2040 V1284 H1908Z M1908,1298 H2040 V1366 H1908Z" stroke="#aaa" stroke-width="2.5" fill="none"/>
<path d="M1927,67 V297 M1946,67 V297 M1965,67 V297 M1983,67 V297 M2002,67 V297 M2021,67 V297" stroke="#c4c4c4" stroke-width="2" fill="none"/>
<rect x="1914" y="316" width="46" height="204" fill="#8f8f8f" opacity="0.6"/>
<rect x="1969" y="316" width="55" height="204" fill="#9a9a9a" opacity="0.5"/>
<path d="M1918,581 V899" stroke="#bbb" stroke-width="2" fill="none"/>
<path d="M1946,635 V885 M1964,608 V858 M1988,703 V804 M2009,676 V831" stroke="#777" stroke-width="6" stroke-dasharray="14 5 22 6 9 4" fill="none"/>
<rect x="1915" y="1007" width="30" height="115" fill="#333"/>
<rect x="1984" y="1048" width="33" height="74" fill="#222"/>
<rect x="1988" y="960" width="30" height="81" fill="#aaa" opacity="0.7"/>
<circle cx="1968" cy="1217" r="41" fill="none" stroke="#777" stroke-width="3.5"/>
<circle cx="1968" cy="1217" r="29" fill="none" stroke="#999" stroke-width="2.5"/>
<path d="M1908,1312 H2040 M1908,1325 H2040 M1908,1339 H2040 M1908,1352 H2040" stroke="#b5b5b5" stroke-width="2" fill="none"/>
<rect x="1908" y="1364" width="132" height="42" fill="none" stroke="#888" stroke-width="2.5"/>
<text x="1972" y="1403" font-family="Liberation Sans, sans-serif" font-size="38" fill="#222" text-anchor="middle">A601</text>
<path d="M75,165 H195 V325 H75Z M117,205 V325 M235,165 H415 V330 H235Z M298,206 V330 M475,115 H578 V320 H475Z M511,166 V320 M638,115 H808 V320 H638Z M698,166 V320 M863,115 H1035 V320 H863Z M923,166 V320 M1090,115 H1195 V320 H1090Z M1127,166 V320 M75,450 H195 V615 H75Z M117,491 V615 M235,450 H415 V625 H235Z M298,494 V625 M475,430 H578 V625 H475Z M511,479 V625 M638,430 H808 V625 H638Z M698,479 V625 M863,430 H970 V625 H863Z M900,479 V625 M1025,430 H1195 V625 H1025Z M1084,479 V625" stroke="#7d7d7d" stroke-width="3" fill="none"/>
<path d="M700,240 L740,165 L808,240 L740,315Z M905,240 L935,165 L965,240 L935,315Z M965,240 L1000,165 L1035,240 L1000,315Z M520,475 h50 v125 h-50Z M680,480 h50 v120 h-50Z M750,480 h50 v120 h-50Z M905,475 h60 v140 h-60Z M1070,475 h55 v140 h-55Z M1135,475 h55 v140 h-55Z" stroke="#8a8a8a" stroke-width="3" fill="none"/>
<path d="M75,710 H410 M455,710 H1195 M85,1005 H1195 M185,1380 H1850" stroke="#8a8a8a" stroke-width="3" fill="none"/>
<path d="M540,348 h14 M732,348 h18 M958,348 h20 M1158,348 h10 M535,657 h22 M725,657 h28 M928,657 h12 M1120,657 h20 M175,380 h170 M175,392 h165 M175,404 h150 M195,655 h160 M195,668 h150 M95,708 h70 M470,708 h70 M105,1002 h70 M200,1378 h60" stroke="#777" stroke-width="6" fill="none"/>
<rect x="175" y="880" width="116" height="14" fill="#c9c9c9"/>
<rect x="224" y="848" width="19" height="10" fill="#2a2a2a"/>
<path d="M201,823 l65,56 M266,823 l-65,56 M175,764 V916 M282,781 V909 M156,905 H318 M169,772 H285" stroke="#6e6e6e" stroke-width="2.2" fill="none"/>
<path d="M257,768 L234,877 M283,838 L235,830 M172,915 L214,823" stroke="#8a8a8a" stroke-width="1.8" fill="none"/>
<path d="M257,761 h26 v14 h-26Z M283,831 h26 v14 h-26Z M92,908 h26 v14 h-26Z" stroke="#666" stroke-width="2" fill="none"/>
<path d="M291,768 h73 M291,779 h34 M317,838 h47 M126,915 h46" stroke="#777" stroke-width="5" stroke-dasharray="11 3 17 4 7 3 13 4" fill="none"/>
<path d="M201,823 h65 v56 h-65Z" stroke="#262626" stroke-width="5.5" fill="none"/>
<rect x="461" y="841" width="7" height="9" fill="#2a2a2a"/>
<path d="M461,808 V874 H467 V808 M444,778 V908 M481,792 V902 M437,892 H493 M442,785 H482" stroke="#6e6e6e" stroke-width="2.2" fill="none"/>
<path d="M457,781 L461,867 M471,843 L464,817 M461,904 L462,835" stroke="#8a8a8a" stroke-width="1.8" fill="none"/>
<path d="M457,774 h26 v14 h-26Z M471,836 h26 v14 h-26Z M397,897 h26 v14 h-26Z" stroke="#666" stroke-width="2" fill="none"/>
<path d="M491,781 h38 M491,792 h20 M505,843 h24 M505,854 h19 M431,904 h30" stroke="#777" stroke-width="5" stroke-dasharray="11 3 17 4 7 3 13 4" fill="none"/>
<path d="M453,808 V882 H475 V808" stroke="#262626" stroke-width="5.5" fill="none"/>
<rect x="620" y="853" width="10" height="7" fill="#2a2a2a"/>
<path d="M617,826 V878 H634 V826 M595,792 V909 M650,805 V904 M586,896 H668 M592,798 H651" stroke="#6e6e6e" stroke-width="2.2" fill="none"/>
<path d="M630,792 L620,844 M616,834 L626,850 M603,871 L616,862 M634,910 L627,857" stroke="#8a8a8a" stroke-width="1.8" fill="none"/>
<path d="M630,785 h26 v14 h-26Z M616,827 h26 v14 h-26Z M542,864 h26 v14 h-26Z M634,903 h26 v14 h-26Z" stroke="#666" stroke-width="2" fill="none"/>
<path d="M664,792 h30 M664,803 h18 M650,834 h44 M650,845 h27 M576,871 h27 M668,910 h26" stroke="#777" stroke-width="5" stroke-dasharray="11 3 17 4 7 3 13 4" fill="none"/>
<path d="M609,826 V886 H642 V826" stroke="#262626" stroke-width="5.5" fill="none"/>
<rect x="780" y="839" width="7" height="7" fill="#2a2a2a"/>
<path d="M772,873 V900 M796,873 V900 M763,782 V908 M801,797 V903 M757,883 H813 M761,790 H802" stroke="#6e6e6e" stroke-width="2.2" fill="none"/>
<path d="M768,780 L794,835 M774,828 L778,825 M782,866 L782,821 M774,909 L792,840" stroke="#8a8a8a" stroke-width="1.8" fill="none"/>
<path d="M768,773 h26 v14 h-26Z M774,821 h26 v14 h-26Z M722,859 h26 v14 h-26Z M774,902 h26 v14 h-26Z" stroke="#666" stroke-width="2" fill="none"/>
<path d="M802,780 h32 M802,791 h21 M808,828 h26 M808,839 h12 M756,866 h26 M808,909 h26 M808,920 h16" stroke="#777" stroke-width="5" stroke-dasharray="11 3 17 4 7 3 13 4" fill="none"/>
<path d="M761,842 H807 M784,842 V873 M777,827 h14 v15" stroke="#262626" stroke-width="5.5" fill="none"/>
<rect x="924" y="787" width="16" height="116" fill="#bdbdbd"/>
<rect x="929" y="835" width="11" height="5" fill="#2a2a2a"/>
<path d="M941,790 L966,799 L941,809 L966,818 L941,828 L966,837 M903,782 V908 M961,797 V903 M892,870 H980 M899,790 H963" stroke="#6e6e6e" stroke-width="2.2" fill="none"/>
<path d="M950,786 L942,848 M944,821 L932,836 M932,869 L921,836 M938,905 L928,833" stroke="#8a8a8a" stroke-width="1.8" fill="none"/>
<path d="M950,779 h26 v14 h-26Z M944,814 h26 v14 h-26Z M867,862 h26 v14 h-26Z M938,898 h26 v14 h-26Z" stroke="#666" stroke-width="2" fill="none"/>
<path d="M984,786 h25 M978,821 h31 M901,869 h31 M972,905 h37 M972,916 h21" stroke="#777" stroke-width="5" stroke-dasharray="11 3 17 4 7 3 13 4" fill="none"/>
<path d="M924,787 V903 M940,837 h32 v9 h-32" stroke="#262626" stroke-width="5.5" fill="none"/>
<rect x="1127" y="850" width="10" height="8" fill="#2a2a2a"/>
<path d="M1121,886 V919 M1145,886 V919 M1102,763 V907 M1159,780 V900 M1091,896 H1178 M1098,772 H1160" stroke="#6e6e6e" stroke-width="2.2" fill="none"/>
<path d="M1134,762 L1132,868 M1125,836 L1132,864 M1104,902 L1122,863" stroke="#8a8a8a" stroke-width="1.8" fill="none"/>
<path d="M1134,755 h26 v14 h-26Z M1125,829 h26 v14 h-26Z M1042,895 h26 v14 h-26Z" stroke="#666" stroke-width="2" fill="none"/>
<path d="M1168,762 h31 M1159,836 h40 M1076,902 h28" stroke="#777" stroke-width="5" stroke-dasharray="11 3 17 4 7 3 13 4" fill="none"/>
<path d="M1098,853 H1167 M1133,853 V886 M1122,836 h21 v16" stroke="#262626" stroke-width="5.5" fill="none"/>
<rect x="1237" y="85" width="651" height="937" fill="#fdfdfd" stroke="#8a8a8a" stroke-width="2.5"/>
<path d="M1237,107 H1888 M1237,118 H1888 M1237,129 H1888 M1237,140 H1888 M1237,150 H1888 M1237,161 H1888 M1237,172 H1888 M1237,183 H1888 M1237,194 H1888 M1237,205 H1888 M1237,216 H1888 M1237,227 H1888 M1237,238 H1888 M1237,248 H1888 M1237,259 H1888 M1237,270 H1888 M1237,281 H1888 M1237,292 H1888 M1237,303 H1888 M1237,314 H1888 M1237,325 H1888 M1237,336 H1888 M1237,347 H1888 M1237,358 H1888 M1237,368 H1888 M1237,379 H1888 M1237,390 H1888 M1237,401 H1888 M1237,412 H1888 M1237,423 H1888 M1237,434 H1888 M1237,445 H1888 M1237,456 H1888 M1237,466 H1888 M1237,477 H1888 M1237,488 H1888 M1237,499 H1888 M1237,510 H1888 M1237,521 H1888 M1237,532 H1888 M1237,543 H1888 M1237,554 H1888 M1237,565 H1888 M1237,576 H1888 M1237,586 H1888 M1237,597 H1888 M1237,608 H1888 M1237,619 H1888 M1237,630 H1888 M1237,641 H1888 M1237,652 H1888 M1237,663 H1888 M1237,674 H1888 M1237,684 H1888 M1237,695 H1888 M1237,706 H1888 M1237,717 H1888 M1237,728 H1888 M1237,739 H1888 M1237,750 H1888 M1237,761 H1888 M1237,772 H1888 M1237,783 H1888 M1237,794 H1888 M1237,804 H1888 M1237,815 H1888 M1237,826 H1888 M1237,837 H1888 M1237,848 H1888 M1237,859 H1888 M1237,870 H1888 M1237,881 H1888 M1237,892 H1888 M1237,902 H1888 M1237,913 H1888 M1237,924 H1888 M1237,935 H1888 M1237,946 H1888 M1237,957 H1888 M1237,968 H1888 M1237,979 H1888 M1237,990 H1888 M1237,1001 H1888 M1237,1012 H1888" stroke="#a8a8a8" stroke-width="2.2" fill="none"/>
<path d="M1265,105 V1022 M1305,105 V1022 M1355,105 V1022 M1392,105 V1022 M1428,105 V1022 M1467,105 V1022 M1503,105 V1022 M1580,105 V1022" stroke="#8f8f8f" stroke-width="2.2" fill="none"/>
<path d="M1243,121 h18 M1270,121 h30 M1312,121 h38 M1360,121 h28 M1396,121 h28 M1432,121 h30 M1472,121 h26 M1525,121 h36 M1700,121 h70 M1520,93 h80" stroke="#444" stroke-width="8" fill="none"/>
<path d="M1242,145 h18 M1312,145 h36 M1362,145 h24 M1398,145 h24 M1434,145 h26 M1474,145 h22 M1270,145 h28 M1530,145 h30 M1242,156 h18 M1312,156 h36 M1362,156 h24 M1398,156 h24 M1434,156 h26 M1474,156 h22 M1270,156 h28 M1530,156 h30 M1242,167 h18 M1312,167 h36 M1362,167 h24 M1398,167 h24 M1434,167 h26 M1474,167 h22 M1270,167 h28 M1530,167 h30 M1242,178 h18 M1312,178 h36 M1362,178 h24 M1398,178 h24 M1434,178 h26 M1474,178 h22 M1242,189 h18 M1312,189 h36 M1362,189 h24 M1398,189 h24 M1434,189 h26 M1474,189 h22 M1242,200 h18 M1312,200 h36 M1362,200 h24 M1398,200 h24 M1434,200 h26 M1474,200 h22 M1270,200 h28 M1530,200 h30 M1242,210 h18 M1312,210 h36 M1362,210 h24 M1398,210 h24 M1434,210 h26 M1474,210 h22 M1270,210 h28 M1530,210 h30 M1242,221 h18 M1312,221 h36 M1362,221 h24 M1398,221 h24 M1434,221 h26 M1474,221 h22 M1242,232 h18 M1312,232 h36 M1362,232 h24 M1398,232 h24 M1434,232 h26 M1474,232 h22 M1242,243 h18 M1312,243 h36 M1362,243 h24 M1398,243 h24 M1434,243 h26 M1474,243 h22 M1270,243 h28 M1530,243 h30 M1242,254 h18 M1312,254 h36 M1362,254 h24 M1398,254 h24 M1434,254 h26 M1474,254 h22 M1242,265 h18 M1312,265 h36 M1362,265 h24 M1398,265 h24 M1434,265 h26 M1474,265 h22 M1270,265 h28 M1530,265 h30 M1242,276 h18 M1312,276 h36 M1362,276 h24 M1398,276 h24 M1434,276 h26 M1474,276 h22 M1242,287 h18 M1312,287 h36 M1362,287 h24 M1398,287 h24 M1434,287 h26 M1474,287 h22 M1242,298 h18 M1312,298 h36 M1362,298 h24 M1398,298 h24 M1434,298 h26 M1474,298 h22 M1270,298 h28 M1530,298 h30 M1242,308 h18 M1312,308 h36 M1362,308 h24 M1398,308 h24 M1434,308 h26 M1474,308 h22 M1270,308 h28 M1530,308 h30 M1242,319 h18 M1312,319 h36 M1362,319 h24 M1398,319 h24 M1434,319 h26 M1474,319 h22 M1242,330 h18 M1312,330 h36 M1362,330 h24 M1398,330 h24 M1434,330 h26 M1474,330 h22 M1242,341 h18 M1312,341 h36 M1362,341 h24 M1398,341 h24 M1434,341 h26 M1474,341 h22 M1270,341 h28 M1530,341 h30 M1242,352 h18 M1312,352 h36 M1362,352 h24 M1398,352 h24 M1434,352 h26 M1474,352 h22 M1242,363 h18 M1312,363 h36 M1362,363 h24 M1398,363 h24 M1434,363 h26 M1474,363 h22 M1242,374 h18 M1312,374 h36 M1362,374 h24 M1398,374 h24 M1434,374 h26 M1474,374 h22 M1242,385 h18 M1312,385 h36 M1362,385 h24 M1398,385 h24 M1434,385 h26 M1474,385 h22 M1270,385 h28 M1530,385 h30 M1242,396 h18 M1312,396 h36 M1362,396 h24 M1398,396 h24 M1434,396 h26 M1474,396 h22 M1242,407 h18 M1312,407 h36 M1362,407 h24 M1398,407 h24 M1434,407 h26 M1474,407 h22 M1242,418 h18 M1312,418 h36 M1362,418 h24 M1398,418 h24 M1434,418 h26 M1474,418 h22 M1270,418 h28 M1530,418 h30 M1242,428 h18 M1312,428 h36 M1362,428 h24 M1398,428 h24 M1434,428 h26 M1474,428 h22 M1270,428 h28 M1530,428 h30 M1242,439 h18 M1312,439 h36 M1362,439 h24 M1398,439 h24 M1434,439 h26 M1474,439 h22 M1270,439 h28 M1530,439 h30 M1242,450 h18 M1312,450 h36 M1362,450 h24 M1398,450 h24 M1434,450 h26 M1474,450 h22 M1242,461 h18 M1312,461 h36 M1362,461 h24 M1398,461 h24 M1434,461 h26 M1474,461 h22 M1270,461 h28 M1530,461 h30 M1242,472 h18 M1312,472 h36 M1362,472 h24 M1398,472 h24 M1434,472 h26 M1474,472 h22 M1242,483 h18 M1312,483 h36 M1362,483 h24 M1398,483 h24 M1434,483 h26 M1474,483 h22 M1242,494 h18 M1312,494 h36 M1362,494 h24 M1398,494 h24 M1434,494 h26 M1474,494 h22 M1270,494 h28 M1530,494 h30 M1242,505 h18 M1312,505 h36 M1362,505 h24 M1398,505 h24 M1434,505 h26 M1474,505 h22 M1270,505 h28 M1530,505 h30 M1242,516 h18 M1312,516 h36 M1362,516 h24 M1398,516 h24 M1434,516 h26 M1474,516 h22 M1270,516 h28 M1530,516 h30 M1242,526 h18 M1312,526 h36 M1362,526 h24 M1398,526 h24 M1434,526 h26 M1474,526 h22 M1242,537 h18 M1312,537 h36 M1362,537 h24 M1398,537 h24 M1434,537 h26 M1474,537 h22 M1270,537 h28 M1530,537 h30 M1242,548 h18 M1312,548 h36 M1362,548 h24 M1398,548 h24 M1434,548 h26 M1474,548 h22 M1270,548 h28 M1530,548 h30 M1242,559 h18 M1312,559 h36 M1362,559 h24 M1398,559 h24 M1434,559 h26 M1474,559 h22 M1242,570 h18 M1312,570 h36 M1362,570 h24 M1398,570 h24 M1434,570 h26 M1474,570 h22 M1242,581 h18 M1312,581 h36 M1362,581 h24 M1398,581 h24 M1434,581 h26 M1474,581 h22 M1242,592 h18 M1312,592 h36 M1362,592 h24 M1398,592 h24 M1434,592 h26 M1474,592 h22 M1242,603 h18 M1312,603 h36 M1362,603 h24 M1398,603 h24 M1434,603 h26 M1474,603 h22 M1270,603 h28 M1530,603 h30 M1242,614 h18 M1312,614 h36 M1362,614 h24 M1398,614 h24 M1434,614 h26 M1474,614 h22 M1242,625 h18 M1312,625 h36 M1362,625 h24 M1398,625 h24 M1434,625 h26 M1474,625 h22 M1242,636 h18 M1312,636 h36 M1362,636 h24 M1398,636 h24 M1434,636 h26 M1474,636 h22 M1270,636 h28 M1530,636 h30 M1242,646 h18 M1312,646 h36 M1362,646 h24 M1398,646 h24 M1434,646 h26 M1474,646 h22 M1270,646 h28 M1530,646 h30 M1242,657 h18 M1312,657 h36 M1362,657 h24 M1398,657 h24 M1434,657 h26 M1474,657 h22 M1242,668 h18 M1312,668 h36 M1362,668 h24 M1398,668 h24 M1434,668 h26 M1474,668 h22 M1270,668 h28 M1530,668 h30 M1242,679 h18 M1312,679 h36 M1362,679 h24 M1398,679 h24 M1434,679 h26 M1474,679 h22 M1270,679 h28 M1530,679 h30 M1242,690 h18 M1312,690 h36 M1362,690 h24 M1398,690 h24 M1434,690 h26 M1474,690 h22 M1242,701 h18 M1312,701 h36 M1362,701 h24 M1398,701 h24 M1434,701 h26 M1474,701 h22 M1242,712 h18 M1312,712 h36 M1362,712 h24 M1398,712 h24 M1434,712 h26 M1474,712 h22 M1270,712 h28 M1530,712 h30 M1242,723 h18 M1312,723 h36 M1362,723 h24 M1398,723 h24 M1434,723 h26 M1474,723 h22 M1242,734 h18 M1312,734 h36 M1362,734 h24 M1398,734 h24 M1434,734 h26 M1474,734 h22 M1270,734 h28 M1530,734 h30 M1242,744 h18 M1312,744 h36 M1362,744 h24 M1398,744 h24 M1434,744 h26 M1474,744 h22 M1270,744 h28 M1530,744 h30 M1242,755 h18 M1312,755 h36 M1362,755 h24 M1398,755 h24 M1434,755 h26 M1474,755 h22 M1270,755 h28 M1530,755 h30 M1242,766 h18 M1312,766 h36 M1362,766 h24 M1398,766 h24 M1434,766 h26 M1474,766 h22 M1270,766 h28 M1530,766 h30 M1242,777 h18 M1312,777 h36 M1362,777 h24 M1398,777 h24 M1434,777 h26 M1474,777 h22 M1242,788 h18 M1312,788 h36 M1362,788 h24 M1398,788 h24 M1434,788 h26 M1474,788 h22 M1242,799 h18 M1312,799 h36 M1362,799 h24 M1398,799 h24 M1434,799 h26 M1474,799 h22 M1270,799 h28 M1530,799 h30 M1242,810 h18 M1312,810 h36 M1362,810 h24 M1398,810 h24 M1434,810 h26 M1474,810 h22 M1242,821 h18 M1312,821 h36 M1362,821 h24 M1398,821 h24 M1434,821 h26 M1474,821 h22 M1270,821 h28 M1530,821 h30 M1242,832 h18 M1312,832 h36 M1362,832 h24 M1398,832 h24 M1434,832 h26 M1474,832 h22 M1270,832 h28 M1530,832 h30 M1242,843 h18 M1312,843 h36 M1362,843 h24 M1398,843 h24 M1434,843 h26 M1474,843 h22 M1270,843 h28 M1530,843 h30 M1242,854 h18 M1312,854 h36 M1362,854 h24 M1398,854 h24 M1434,854 h26 M1474,854 h22 M1270,854 h28 M1530,854 h30 M1242,864 h18 M1312,864 h36 M1362,864 h24 M1398,864 h24 M1434,864 h26 M1474,864 h22 M1242,875 h18 M1312,875 h36 M1362,875 h24 M1398,875 h24 M1434,875 h26 M1474,875 h22 M1270,875 h28 M1530,875 h30 M1242,886 h18 M1312,886 h36 M1362,886 h24 M1398,886 h24 M1434,886 h26 M1474,886 h22 M1270,886 h28 M1530,886 h30 M1242,897 h18 M1312,897 h36 M1362,897 h24 M1398,897 h24 M1434,897 h26 M1474,897 h22 M1242,908 h18 M1312,908 h36 M1362,908 h24 M1398,908 h24 M1434,908 h26 M1474,908 h22 M1242,919 h18 M1312,919 h36 M1362,919 h24 M1398,919 h24 M1434,919 h26 M1474,919 h22 M1242,930 h18 M1312,930 h36 M1362,930 h24 M1398,930 h24 M1434,930 h26 M1474,930 h22 M1242,941 h18 M1312,941 h36 M1362,941 h24 M1398,941 h24 M1434,941 h26 M1474,941 h22 M1270,941 h28 M1530,941 h30 M1242,952 h18 M1312,952 h36 M1362,952 h24 M1398,952 h24 M1434,952 h26 M1474,952 h22 M1270,952 h28 M1530,952 h30 M1242,962 h18 M1312,962 h36 M1362,962 h24 M1398,962 h24 M1434,962 h26 M1474,962 h22 M1270,962 h28 M1530,962 h30 M1242,973 h18 M1312,973 h36 M1362,973 h24 M1398,973 h24 M1434,973 h26 M1474,973 h22 M1270,973 h28 M1530,973 h30 M1242,984 h18 M1312,984 h36 M1362,984 h24 M1398,984 h24 M1434,984 h26 M1474,984 h22 M1270,984 h28 M1530,984 h30 M1242,995 h18 M1312,995 h36 M1362,995 h24 M1398,995 h24 M1434,995 h26 M1474,995 h22 M1242,1006 h18 M1312,1006 h36 M1362,1006 h24 M1398,1006 h24 M1434,1006 h26 M1474,1006 h22 M1270,1006 h28 M1530,1006 h30" stroke="#777" stroke-width="5" stroke-dasharray="7 2 9 3" fill="none"/>
<path d="M1585,243 h200 M1585,265 h200 M1585,287 h120 M1585,341 h200 M1585,439 h200 M1585,526 h200 M1585,537 h120 M1585,548 h200 M1585,570 h200 M1585,603 h120 M1585,614 h200 M1585,668 h290 M1585,755 h230 M1585,777 h200 M1585,788 h120 M1585,799 h290 M1585,810 h200 M1585,897 h120 M1585,919 h200 M1585,930 h200 M1585,973 h120" stroke="#777" stroke-width="5" stroke-dasharray="14 3 22 4 9 3" fill="none"/>
<rect x="218" y="1225" width="16" height="13" fill="#2a2a2a"/>
<path d="M208,1177 V1276 H245 V1177 M179,1093 V1315 M266,1118 V1304 M163,1294 H295 M173,1106 H268" stroke="#6e6e6e" stroke-width="2.2" fill="none"/>
<path d="M274,1096 L245,1243 M271,1128 L245,1218 M204,1159 L212,1271 M265,1191 L250,1229 M259,1219 L235,1245 M197,1248 L210,1242 M281,1281 L220,1246 M281,1311 L216,1215" stroke="#8a8a8a" stroke-width="1.8" fill="none"/>
<path d="M274,1089 h26 v14 h-26Z M271,1121 h26 v14 h-26Z M117,1152 h26 v14 h-26Z M265,1184 h26 v14 h-26Z M259,1212 h26 v14 h-26Z M117,1241 h26 v14 h-26Z M281,1274 h26 v14 h-26Z M281,1304 h26 v14 h-26Z" stroke="#666" stroke-width="2" fill="none"/>
<path d="M308,1096 h46 M305,1128 h49 M151,1159 h53 M299,1191 h55 M299,1202 h40 M293,1219 h61 M293,1230 h44 M151,1248 h46 M315,1281 h39 M315,1292 h25 M315,1311 h39 M315,1322 h16" stroke="#777" stroke-width="5" stroke-dasharray="11 3 17 4 7 3 13 4" fill="none"/>
<path d="M200,1177 V1284 H253 V1177" stroke="#262626" stroke-width="5.5" fill="none"/>
<rect x="449" y="1073" width="16" height="228" fill="#bdbdbd"/>
<rect x="454" y="1174" width="11" height="13" fill="#2a2a2a"/>
<path d="M467,1078 L492,1099 L467,1119 L492,1139 L467,1159 L492,1180 M427,1064 V1312 M487,1093 V1301 M416,1246 H506 M424,1078 H488" stroke="#6e6e6e" stroke-width="2.2" fill="none"/>
<path d="M507,1068 L457,1172 M489,1124 L452,1184 M438,1186 L446,1208 M490,1246 L466,1185 M485,1310 L449,1144" stroke="#8a8a8a" stroke-width="1.8" fill="none"/>
<path d="M507,1061 h26 v14 h-26Z M489,1117 h26 v14 h-26Z M362,1179 h26 v14 h-26Z M490,1239 h26 v14 h-26Z M485,1303 h26 v14 h-26Z" stroke="#666" stroke-width="2" fill="none"/>
<path d="M541,1068 h43 M541,1079 h24 M523,1124 h61 M523,1135 h39 M396,1186 h42 M524,1246 h60 M524,1257 h28 M519,1310 h65 M519,1321 h49" stroke="#777" stroke-width="5" stroke-dasharray="11 3 17 4 7 3 13 4" fill="none"/>
<path d="M449,1073 V1301 M465,1180 h32 v22 h-32" stroke="#262626" stroke-width="5.5" fill="none"/>
<rect x="663" y="1242" width="63" height="19" fill="#c9c9c9"/>
<rect x="689" y="1195" width="10" height="15" fill="#2a2a2a"/>
<path d="M677,1161 l35,80 M712,1161 l-35,80 M663,1064 V1312 M720,1093 V1301 M653,1272 H740 M660,1078 H722" stroke="#6e6e6e" stroke-width="2.2" fill="none"/>
<path d="M701,1067 L704,1190 M724,1104 L692,1177 M673,1132 L690,1243 M727,1167 L691,1157 M717,1201 L691,1199 M663,1234 L683,1223 M714,1271 L708,1238 M728,1310 L701,1224" stroke="#8a8a8a" stroke-width="1.8" fill="none"/>
<path d="M701,1060 h26 v14 h-26Z M724,1097 h26 v14 h-26Z M592,1125 h26 v14 h-26Z M727,1160 h26 v14 h-26Z M717,1194 h26 v14 h-26Z M592,1227 h26 v14 h-26Z M714,1264 h26 v14 h-26Z M728,1303 h26 v14 h-26Z" stroke="#666" stroke-width="2" fill="none"/>
<path d="M735,1067 h59 M758,1104 h36 M626,1132 h47 M761,1167 h33 M751,1201 h43 M626,1234 h37 M748,1271 h46 M762,1310 h32 M762,1321 h22" stroke="#777" stroke-width="5" stroke-dasharray="11 3 17 4 7 3 13 4" fill="none"/>
<path d="M677,1161 h35 v80 h-35Z" stroke="#262626" stroke-width="5.5" fill="none"/>
<rect x="865" y="1244" width="72" height="21" fill="#c4c4c4"/>
<rect x="882" y="1200" width="14" height="14" fill="#2a2a2a"/>
<path d="M875,1148 V1234 H937 M846,1098 V1315 M925,1122 V1305 M832,1274 H951 M841,1110 H928" stroke="#6e6e6e" stroke-width="2.2" fill="none"/>
<path d="M930,1096 L882,1199 M929,1155 L900,1239 M874,1208 L876,1226 M933,1261 L905,1213 M933,1311 L909,1249" stroke="#8a8a8a" stroke-width="1.8" fill="none"/>
<path d="M930,1089 h26 v14 h-26Z M929,1148 h26 v14 h-26Z M802,1201 h26 v14 h-26Z M933,1254 h26 v14 h-26Z M933,1304 h26 v14 h-26Z" stroke="#666" stroke-width="2" fill="none"/>
<path d="M964,1096 h50 M964,1107 h34 M963,1155 h51 M836,1208 h38 M967,1261 h47 M967,1272 h19 M967,1311 h47 M967,1322 h32" stroke="#777" stroke-width="5" stroke-dasharray="11 3 17 4 7 3 13 4" fill="none"/>
<path d="M865,1148 V1244 H937" stroke="#262626" stroke-width="5.5" fill="none"/>
<rect x="1097" y="1249" width="64" height="12" fill="#c4c4c4"/>
<rect x="1112" y="1223" width="13" height="8" fill="#2a2a2a"/>
<path d="M1107,1193 V1239 H1161 M1080,1131 V1318 M1150,1152 V1309 M1067,1270 H1174 M1076,1142 H1153" stroke="#6e6e6e" stroke-width="2.2" fill="none"/>
<path d="M1131,1135 L1139,1253 M1152,1165 L1138,1238 M1083,1190 L1103,1208 M1141,1224 L1107,1206 M1151,1252 L1131,1247 M1086,1280 L1113,1232 M1127,1313 L1111,1234" stroke="#8a8a8a" stroke-width="1.8" fill="none"/>
<path d="M1131,1128 h26 v14 h-26Z M1152,1158 h26 v14 h-26Z M1017,1183 h26 v14 h-26Z M1141,1217 h26 v14 h-26Z M1151,1245 h26 v14 h-26Z M1017,1273 h26 v14 h-26Z M1127,1306 h26 v14 h-26Z" stroke="#666" stroke-width="2" fill="none"/>
<path d="M1165,1135 h54 M1165,1146 h37 M1186,1165 h33 M1186,1176 h22 M1051,1190 h32 M1175,1224 h44 M1185,1252 h34 M1051,1280 h35 M1161,1313 h58 M1161,1324 h40" stroke="#777" stroke-width="5" stroke-dasharray="11 3 17 4 7 3 13 4" fill="none"/>
<path d="M1097,1193 V1249 H1161" stroke="#262626" stroke-width="5.5" fill="none"/>
<rect x="1318" y="1228" width="13" height="12" fill="#2a2a2a"/>
<path d="M1313,1285 V1331 M1337,1285 V1331 M1287,1102 V1315 M1356,1127 V1306 M1274,1295 H1379 M1283,1114 H1358" stroke="#6e6e6e" stroke-width="2.2" fill="none"/>
<path d="M1352,1105 L1317,1211 M1339,1155 L1334,1199 M1288,1209 L1323,1241 M1335,1257 L1313,1252 M1355,1307 L1320,1201" stroke="#8a8a8a" stroke-width="1.8" fill="none"/>
<path d="M1352,1098 h26 v14 h-26Z M1339,1148 h26 v14 h-26Z M1227,1202 h26 v14 h-26Z M1335,1250 h26 v14 h-26Z M1355,1300 h26 v14 h-26Z" stroke="#666" stroke-width="2" fill="none"/>
<path d="M1386,1105 h38 M1373,1155 h51 M1261,1209 h27 M1369,1257 h55 M1369,1268 h40 M1389,1307 h35" stroke="#777" stroke-width="5" stroke-dasharray="11 3 17 4 7 3 13 4" fill="none"/>
<path d="M1283,1233 H1367 M1325,1233 V1285 M1312,1207 h25 v26" stroke="#262626" stroke-width="5.5" fill="none"/>
<rect x="1499" y="1244" width="85" height="14" fill="#c9c9c9"/>
<rect x="1534" y="1211" width="14" height="10" fill="#2a2a2a"/>
<path d="M1517,1187 l47,56 M1565,1187 l-47,56 M1499,1088 V1314 M1576,1114 V1304 M1484,1268 H1602 M1494,1101 H1579" stroke="#6e6e6e" stroke-width="2.2" fill="none"/>
<path d="M1552,1089 L1540,1208 M1536,1119 L1543,1239 M1499,1153 L1530,1232 M1556,1183 L1560,1214 M1559,1217 L1550,1210 M1488,1246 L1538,1192 M1548,1277 L1537,1192 M1552,1307 L1541,1245" stroke="#8a8a8a" stroke-width="1.8" fill="none"/>
<path d="M1552,1082 h26 v14 h-26Z M1536,1112 h26 v14 h-26Z M1427,1146 h26 v14 h-26Z M1556,1176 h26 v14 h-26Z M1559,1210 h26 v14 h-26Z M1427,1239 h26 v14 h-26Z M1548,1270 h26 v14 h-26Z M1552,1300 h26 v14 h-26Z" stroke="#666" stroke-width="2" fill="none"/>
<path d="M1586,1089 h38 M1570,1119 h54 M1461,1153 h38 M1590,1183 h34 M1590,1194 h14 M1593,1217 h31 M1461,1246 h27 M1582,1277 h42 M1582,1288 h21 M1586,1307 h38 M1586,1318 h29" stroke="#777" stroke-width="5" stroke-dasharray="11 3 17 4 7 3 13 4" fill="none"/>
<path d="M1517,1187 h47 v56 h-47Z" stroke="#262626" stroke-width="5.5" fill="none"/>
<rect x="1751" y="1214" width="15" height="15" fill="#2a2a2a"/>
<path d="M1741,1159 V1273 H1776 V1159 M1713,1098 V1315 M1796,1122 V1305 M1697,1291 H1824 M1707,1110 H1799" stroke="#6e6e6e" stroke-width="2.2" fill="none"/>
<path d="M1778,1098 L1744,1194 M1787,1132 L1762,1199 M1712,1172 L1755,1195 M1769,1206 L1743,1177 M1787,1242 L1783,1222 M1695,1274 L1757,1259 M1769,1310 L1759,1177" stroke="#8a8a8a" stroke-width="1.8" fill="none"/>
<path d="M1778,1091 h26 v14 h-26Z M1787,1125 h26 v14 h-26Z M1627,1165 h26 v14 h-26Z M1769,1199 h26 v14 h-26Z M1787,1235 h26 v14 h-26Z M1627,1267 h26 v14 h-26Z M1769,1303 h26 v14 h-26Z" stroke="#666" stroke-width="2" fill="none"/>
<path d="M1812,1098 h62 M1812,1109 h30 M1821,1132 h53 M1821,1143 h28 M1661,1172 h51 M1803,1206 h71 M1803,1217 h56 M1821,1242 h53 M1661,1274 h34 M1803,1310 h71 M1803,1321 h30" stroke="#777" stroke-width="5" stroke-dasharray="11 3 17 4 7 3 13 4" fill="none"/>
<path d="M1733,1159 V1281 H1784 V1159" stroke="#262626" stroke-width="5.5" fill="none"/>
</g>
<g transform="translate(2540,410) scale(0.20893)">
<rect x="45" y="60" width="2003" height="1350" fill="#fefefe" stroke="#c9c9c9" stroke-width="4"/>
<path d="M1898,60 V1410" stroke="#555" stroke-width="3.5" fill="none"/>
<path d="M1906,67 H2036 V296 H1906Z M1906,310 H2036 V526 H1906Z M1906,539 H2036 V938 H1906Z M1906,944 H2036 V1140 H1906Z M1906,1147 H2036 V1282 H1906Z M1906,1295 H2036 V1363 H1906Z" stroke="#aaa" stroke-width="2.5" fill="none"/>
<path d="M1925,67 V296 M1943,67 V296 M1962,67 V296 M1980,67 V296 M1999,67 V296 M2017,67 V296" stroke="#c4c4c4" stroke-width="2" fill="none"/>
<rect x="1912" y="316" width="45" height="204" fill="#8f8f8f" opacity="0.6"/>
<rect x="1966" y="316" width="54" height="204" fill="#9a9a9a" opacity="0.5"/>
<path d="M1916,580 V897" stroke="#bbb" stroke-width="2" fill="none"/>
<path d="M1943,634 V884 M1961,607 V856 M1985,701 V802 M2006,674 V830" stroke="#777" stroke-width="6" stroke-dasharray="14 5 22 6 9 4" fill="none"/>
<rect x="1913" y="1005" width="30" height="115" fill="#333"/>
<rect x="1980" y="1046" width="33" height="74" fill="#222"/>
<rect x="1985" y="958" width="30" height="81" fill="#aaa" opacity="0.7"/>
<circle cx="1966" cy="1214" r="40" fill="none" stroke="#777" stroke-width="3.5"/>
<circle cx="1966" cy="1214" r="28" fill="none" stroke="#999" stroke-width="2.5"/>
<path d="M1906,1309 H2036 M1906,1322 H2036 M1906,1336 H2036 M1906,1349 H2036" stroke="#b5b5b5" stroke-width="2" fill="none"/>
<rect x="1906" y="1361" width="130" height="42" fill="none" stroke="#888" stroke-width="2.5"/>
<text x="1969" y="1400" font-family="Liberation Sans, sans-serif" font-size="38" fill="#222" text-anchor="middle">A605</text>
<rect x="202" y="248" width="13" height="13" fill="#2a2a2a"/>
<path d="M194,201 V298 H222 V201 M169,100 V358 M241,130 V346 M156,316 H265 M164,115 H243" stroke="#6e6e6e" stroke-width="2.2" fill="none"/>
<path d="M223,104 L205,279 M224,155 L202,258 M159,205 L194,269 M227,255 L223,249 M231,299 L216,229 M161,354 L192,288" stroke="#8a8a8a" stroke-width="1.8" fill="none"/>
<path d="M223,97 h26 v14 h-26Z M224,148 h26 v14 h-26Z M92,198 h26 v14 h-26Z M227,248 h26 v14 h-26Z M231,292 h26 v14 h-26Z M92,347 h26 v14 h-26Z" stroke="#666" stroke-width="2" fill="none"/>
<path d="M257,104 h47 M257,115 h34 M258,155 h46 M126,205 h33 M261,255 h43 M265,299 h39 M265,310 h31 M126,354 h35" stroke="#777" stroke-width="5" stroke-dasharray="11 3 17 4 7 3 13 4" fill="none"/>
<path d="M186,201 V306 H230 V201" stroke="#262626" stroke-width="5.5" fill="none"/>
<circle cx="104" cy="406" r="11" fill="none" stroke="#666" stroke-width="2"/>
<path d="M124,396 h108" stroke="#6a6a6a" stroke-width="11" stroke-dasharray="16 4 26 5 10 4 34 5" fill="none"/>
<path d="M120,408 H287" stroke="#999" stroke-width="2" fill="none"/>
<path d="M126,416 h22" stroke="#888" stroke-width="4" fill="none"/>
<rect x="492" y="240" width="19" height="18" fill="#2a2a2a"/>
<path d="M478,174 V313 H526 V174 M445,100 V358 M550,130 V346 M426,331 H585 M438,115 H553" stroke="#6e6e6e" stroke-width="2.2" fill="none"/>
<path d="M537,101 L518,212 M543,145 L513,286 M445,189 L497,208 M532,229 L502,250 M527,267 L534,200 M454,310 L500,259 M536,355 L505,224" stroke="#8a8a8a" stroke-width="1.8" fill="none"/>
<path d="M537,94 h26 v14 h-26Z M543,138 h26 v14 h-26Z M362,182 h26 v14 h-26Z M532,222 h26 v14 h-26Z M527,260 h26 v14 h-26Z M362,303 h26 v14 h-26Z M536,348 h26 v14 h-26Z" stroke="#666" stroke-width="2" fill="none"/>
<path d="M571,101 h58 M571,112 h35 M577,145 h52 M577,156 h26 M396,189 h49 M566,229 h63 M561,267 h68 M561,278 h43 M396,310 h58 M570,355 h59 M570,366 h25" stroke="#777" stroke-width="5" stroke-dasharray="11 3 17 4 7 3 13 4" fill="none"/>
<path d="M470,174 V321 H534 V174" stroke="#262626" stroke-width="5.5" fill="none"/>
<circle cx="374" cy="406" r="11" fill="none" stroke="#666" stroke-width="2"/>
<path d="M394,396 h154" stroke="#6a6a6a" stroke-width="11" stroke-dasharray="16 4 26 5 10 4 34 5" fill="none"/>
<path d="M390,408 H609" stroke="#999" stroke-width="2" fill="none"/>
<path d="M396,416 h22" stroke="#888" stroke-width="4" fill="none"/>
<rect x="764" y="259" width="89" height="21" fill="#c4c4c4"/>
<rect x="784" y="214" width="18" height="14" fill="#2a2a2a"/>
<path d="M774,162 V249 H853 M740,100 V358 M838,130 V346 M722,288 H870 M734,115 H841" stroke="#6e6e6e" stroke-width="2.2" fill="none"/>
<path d="M824,99 L797,260 M813,163 L788,218 M719,227 L784,202 M817,292 L819,209 M817,353 L813,260" stroke="#8a8a8a" stroke-width="1.8" fill="none"/>
<path d="M824,92 h26 v14 h-26Z M813,156 h26 v14 h-26Z M647,220 h26 v14 h-26Z M817,285 h26 v14 h-26Z M817,346 h26 v14 h-26Z" stroke="#666" stroke-width="2" fill="none"/>
<path d="M858,99 h46 M858,110 h23 M847,163 h57 M681,227 h37 M851,292 h53 M851,353 h53" stroke="#777" stroke-width="5" stroke-dasharray="11 3 17 4 7 3 13 4" fill="none"/>
<path d="M764,162 V259 H853" stroke="#262626" stroke-width="5.5" fill="none"/>
<circle cx="654" cy="406" r="11" fill="none" stroke="#666" stroke-width="2"/>
<path d="M674,396 h121" stroke="#6a6a6a" stroke-width="11" stroke-dasharray="16 4 26 5 10 4 34 5" fill="none"/>
<path d="M670,408 H884" stroke="#999" stroke-width="2" fill="none"/>
<path d="M676,416 h22" stroke="#888" stroke-width="4" fill="none"/>
<rect x="1000" y="264" width="98" height="15" fill="#c9c9c9"/>
<rect x="1041" y="229" width="16" height="11" fill="#2a2a2a"/>
<path d="M1022,203 l55,60 M1076,203 l-55,60 M1000,100 V358 M1090,130 V346 M983,289 H1120 M994,115 H1093" stroke="#6e6e6e" stroke-width="2.2" fill="none"/>
<path d="M1130,104 L1058,264 M1104,162 L1068,236 M997,224 L1041,267 M1112,291 L1064,201 M1105,352 L1060,265" stroke="#8a8a8a" stroke-width="1.8" fill="none"/>
<path d="M1130,97 h26 v14 h-26Z M1104,155 h26 v14 h-26Z M912,217 h26 v14 h-26Z M1112,284 h26 v14 h-26Z M1105,345 h26 v14 h-26Z" stroke="#666" stroke-width="2" fill="none"/>
<path d="M1164,104 h70 M1138,162 h65 M946,224 h51 M1146,291 h64 M1146,302 h43 M1139,352 h86 M1139,363 h54" stroke="#777" stroke-width="5" stroke-dasharray="11 3 17 4 7 3 13 4" fill="none"/>
<path d="M1022,203 h55 v60 h-55Z" stroke="#262626" stroke-width="5.5" fill="none"/>
<circle cx="924" cy="406" r="11" fill="none" stroke="#666" stroke-width="2"/>
<path d="M944,396 h144" stroke="#6a6a6a" stroke-width="11" stroke-dasharray="16 4 26 5 10 4 34 5" fill="none"/>
<path d="M940,408 H1220" stroke="#999" stroke-width="2" fill="none"/>
<path d="M946,416 h22" stroke="#888" stroke-width="4" fill="none"/>
<rect x="1376" y="109" width="25" height="238" fill="#bdbdbd"/>
<rect x="1384" y="218" width="17" height="15" fill="#2a2a2a"/>
<path d="M1404,115 L1443,137 L1404,158 L1443,180 L1404,202 L1443,224 M1342,100 V358 M1435,130 V346 M1325,298 H1466 M1337,115 H1438" stroke="#6e6e6e" stroke-width="2.2" fill="none"/>
<path d="M1429,105 L1396,252 M1424,165 L1420,202 M1338,231 L1373,201 M1419,294 L1413,238 M1432,353 L1420,251" stroke="#8a8a8a" stroke-width="1.8" fill="none"/>
<path d="M1429,98 h26 v14 h-26Z M1424,158 h26 v14 h-26Z M1272,224 h26 v14 h-26Z M1419,287 h26 v14 h-26Z M1432,346 h26 v14 h-26Z" stroke="#666" stroke-width="2" fill="none"/>
<path d="M1463,105 h41 M1458,165 h46 M1458,176 h33 M1306,231 h32 M1453,294 h51 M1453,305 h22 M1466,353 h38 M1466,364 h16" stroke="#777" stroke-width="5" stroke-dasharray="11 3 17 4 7 3 13 4" fill="none"/>
<path d="M1376,109 V346 M1401,224 h50 v26 h-50" stroke="#262626" stroke-width="5.5" fill="none"/>
<circle cx="1284" cy="406" r="11" fill="none" stroke="#666" stroke-width="2"/>
<path d="M1304,396 h140" stroke="#6a6a6a" stroke-width="11" stroke-dasharray="16 4 26 5 10 4 34 5" fill="none"/>
<path d="M1300,408 H1486" stroke="#999" stroke-width="2" fill="none"/>
<path d="M1306,416 h22" stroke="#888" stroke-width="4" fill="none"/>
<rect x="1718" y="221" width="18" height="16" fill="#2a2a2a"/>
<path d="M1704,162 V286 H1749 V162 M1672,100 V358 M1772,130 V346 M1654,304 H1805 M1666,115 H1775" stroke="#6e6e6e" stroke-width="2.2" fill="none"/>
<path d="M1779,103 L1734,178 M1795,139 L1727,199 M1643,172 L1705,220 M1786,207 L1746,235 M1786,243 L1757,234 M1641,282 L1711,260 M1769,316 L1727,182 M1764,349 L1713,214" stroke="#8a8a8a" stroke-width="1.8" fill="none"/>
<path d="M1779,96 h26 v14 h-26Z M1795,132 h26 v14 h-26Z M1540,165 h26 v14 h-26Z M1786,200 h26 v14 h-26Z M1786,236 h26 v14 h-26Z M1532,275 h26 v14 h-26Z M1769,309 h26 v14 h-26Z M1764,342 h26 v14 h-26Z" stroke="#666" stroke-width="2" fill="none"/>
<path d="M1813,103 h81 M1813,114 h35 M1829,139 h65 M1829,150 h41 M1574,172 h69 M1820,207 h74 M1820,243 h74 M1820,254 h41 M1566,282 h75 M1803,316 h91 M1803,327 h59 M1798,349 h96" stroke="#777" stroke-width="5" stroke-dasharray="11 3 17 4 7 3 13 4" fill="none"/>
<path d="M1696,162 V294 H1757 V162" stroke="#262626" stroke-width="5.5" fill="none"/>
<circle cx="1544" cy="406" r="11" fill="none" stroke="#666" stroke-width="2"/>
<path d="M1564,396 h147" stroke="#6a6a6a" stroke-width="11" stroke-dasharray="16 4 26 5 10 4 34 5" fill="none"/>
<path d="M1560,408 H1868" stroke="#999" stroke-width="2" fill="none"/>
<path d="M1566,416 h22" stroke="#888" stroke-width="4" fill="none"/>
<rect x="193" y="564" width="12" height="10" fill="#2a2a2a"/>
<path d="M187,610 V649 M211,610 V649 M164,465 V641 M227,485 V633 M153,620 H249 M160,475 H229" stroke="#6e6e6e" stroke-width="2.2" fill="none"/>
<path d="M215,467 L191,543 M235,513 L208,584 M160,553 L192,549 M214,597 L195,588 M207,639 L211,541" stroke="#8a8a8a" stroke-width="1.8" fill="none"/>
<path d="M215,460 h26 v14 h-26Z M235,506 h26 v14 h-26Z M92,546 h26 v14 h-26Z M214,590 h26 v14 h-26Z M207,632 h26 v14 h-26Z" stroke="#666" stroke-width="2" fill="none"/>
<path d="M249,467 h55 M249,478 h36 M269,513 h35 M126,553 h34 M248,597 h56 M248,608 h36 M241,639 h63" stroke="#777" stroke-width="5" stroke-dasharray="11 3 17 4 7 3 13 4" fill="none"/>
<path d="M160,568 H237 M199,568 V610 M187,548 h23 v21" stroke="#262626" stroke-width="5.5" fill="none"/>
<circle cx="104" cy="681" r="11" fill="none" stroke="#666" stroke-width="2"/>
<path d="M124,671 h112" stroke="#6a6a6a" stroke-width="11" stroke-dasharray="16 4 26 5 10 4 34 5" fill="none"/>
<path d="M120,683 H287" stroke="#999" stroke-width="2" fill="none"/>
<path d="M126,691 h22" stroke="#888" stroke-width="4" fill="none"/>
<rect x="466" y="548" width="14" height="12" fill="#2a2a2a"/>
<path d="M458,504 V595 H488 V504 M432,465 V641 M507,485 V633 M418,613 H532 M427,475 H509" stroke="#6e6e6e" stroke-width="2.2" fill="none"/>
<path d="M517,470 L461,525 M518,491 L462,560 M434,522 L465,528 M531,556 L482,552 M537,578 L489,559 M454,612 L464,523 M535,638 L484,578" stroke="#8a8a8a" stroke-width="1.8" fill="none"/>
<path d="M517,463 h26 v14 h-26Z M518,484 h26 v14 h-26Z M362,515 h26 v14 h-26Z M531,549 h26 v14 h-26Z M537,571 h26 v14 h-26Z M362,605 h26 v14 h-26Z M535,631 h26 v14 h-26Z" stroke="#666" stroke-width="2" fill="none"/>
<path d="M551,470 h78 M552,491 h45 M396,522 h38 M565,556 h57 M571,578 h47 M571,589 h28 M396,612 h58 M569,638 h60" stroke="#777" stroke-width="5" stroke-dasharray="11 3 17 4 7 3 13 4" fill="none"/>
<path d="M450,504 V603 H496 V504" stroke="#262626" stroke-width="5.5" fill="none"/>
<circle cx="374" cy="681" r="11" fill="none" stroke="#666" stroke-width="2"/>
<path d="M394,671 h133" stroke="#6a6a6a" stroke-width="11" stroke-dasharray="16 4 26 5 10 4 34 5" fill="none"/>
<path d="M390,683 H609" stroke="#999" stroke-width="2" fill="none"/>
<path d="M396,691 h22" stroke="#888" stroke-width="4" fill="none"/>
<rect x="782" y="568" width="14" height="12" fill="#2a2a2a"/>
<path d="M774,524 V613 H803 V524 M748,465 V641 M823,485 V633 M734,631 H848 M743,475 H825" stroke="#6e6e6e" stroke-width="2.2" fill="none"/>
<path d="M817,466 L800,551 M822,498 L783,584 M727,521 L775,605 M795,549 L810,605 M816,583 L799,609 M730,607 L778,581 M799,641 L803,609" stroke="#8a8a8a" stroke-width="1.8" fill="none"/>
<path d="M817,459 h26 v14 h-26Z M822,491 h26 v14 h-26Z M648,514 h26 v14 h-26Z M795,542 h26 v14 h-26Z M816,576 h26 v14 h-26Z M661,600 h26 v14 h-26Z M799,634 h26 v14 h-26Z" stroke="#666" stroke-width="2" fill="none"/>
<path d="M851,466 h53 M856,498 h48 M682,521 h45 M829,549 h75 M850,583 h54 M850,594 h27 M695,607 h34 M833,641 h71" stroke="#777" stroke-width="5" stroke-dasharray="11 3 17 4 7 3 13 4" fill="none"/>
<path d="M766,524 V621 H811 V524" stroke="#262626" stroke-width="5.5" fill="none"/>
<circle cx="654" cy="681" r="11" fill="none" stroke="#666" stroke-width="2"/>
<path d="M674,671 h109" stroke="#6a6a6a" stroke-width="11" stroke-dasharray="16 4 26 5 10 4 34 5" fill="none"/>
<path d="M670,683 H884" stroke="#999" stroke-width="2" fill="none"/>
<path d="M676,691 h22" stroke="#888" stroke-width="4" fill="none"/>
<rect x="1068" y="592" width="90" height="13" fill="#c4c4c4"/>
<rect x="1089" y="564" width="18" height="9" fill="#2a2a2a"/>
<path d="M1078,530 V582 H1158 M1044,465 V641 M1143,485 V633 M1026,614 H1176 M1038,475 H1146" stroke="#6e6e6e" stroke-width="2.2" fill="none"/>
<path d="M1147,471 L1125,575 M1151,503 L1087,557 M1021,533 L1080,541 M1135,570 L1123,544 M1142,606 L1087,582 M1016,636 L1080,584" stroke="#8a8a8a" stroke-width="1.8" fill="none"/>
<path d="M1147,464 h26 v14 h-26Z M1151,496 h26 v14 h-26Z M942,526 h26 v14 h-26Z M1135,563 h26 v14 h-26Z M1142,599 h26 v14 h-26Z M912,629 h26 v14 h-26Z" stroke="#666" stroke-width="2" fill="none"/>
<path d="M1181,471 h63 M1185,503 h59 M1185,514 h32 M976,533 h45 M1169,570 h75 M1169,581 h30 M1176,606 h68 M946,636 h70" stroke="#777" stroke-width="5" stroke-dasharray="11 3 17 4 7 3 13 4" fill="none"/>
<path d="M1068,530 V592 H1158" stroke="#262626" stroke-width="5.5" fill="none"/>
<circle cx="924" cy="681" r="11" fill="none" stroke="#666" stroke-width="2"/>
<path d="M944,671 h201" stroke="#6a6a6a" stroke-width="11" stroke-dasharray="16 4 26 5 10 4 34 5" fill="none"/>
<path d="M940,683 H1220" stroke="#999" stroke-width="2" fill="none"/>
<path d="M946,691 h22" stroke="#888" stroke-width="4" fill="none"/>
<rect x="1374" y="571" width="89" height="14" fill="#c4c4c4"/>
<rect x="1394" y="542" width="18" height="9" fill="#2a2a2a"/>
<path d="M1384,507 V561 H1463 M1350,465 V641 M1448,485 V633 M1332,593 H1481 M1344,475 H1451" stroke="#6e6e6e" stroke-width="2.2" fill="none"/>
<path d="M1418,465 L1432,525 M1407,490 L1399,549 M1355,519 L1391,530 M1402,544 L1412,530 M1423,567 L1395,532 M1343,587 L1380,538 M1428,614 L1425,550 M1418,636 L1428,553" stroke="#8a8a8a" stroke-width="1.8" fill="none"/>
<path d="M1418,458 h26 v14 h-26Z M1407,483 h26 v14 h-26Z M1272,512 h26 v14 h-26Z M1402,537 h26 v14 h-26Z M1423,560 h26 v14 h-26Z M1272,580 h26 v14 h-26Z M1428,607 h26 v14 h-26Z M1418,629 h26 v14 h-26Z" stroke="#666" stroke-width="2" fill="none"/>
<path d="M1452,465 h52 M1452,476 h32 M1441,490 h63 M1441,501 h42 M1306,519 h49 M1436,544 h68 M1457,567 h47 M1306,587 h37 M1462,614 h42 M1452,636 h52" stroke="#777" stroke-width="5" stroke-dasharray="11 3 17 4 7 3 13 4" fill="none"/>
<path d="M1374,507 V571 H1463" stroke="#262626" stroke-width="5.5" fill="none"/>
<circle cx="1284" cy="681" r="11" fill="none" stroke="#666" stroke-width="2"/>
<path d="M1304,671 h98" stroke="#6a6a6a" stroke-width="11" stroke-dasharray="16 4 26 5 10 4 34 5" fill="none"/>
<path d="M1300,683 H1486" stroke="#999" stroke-width="2" fill="none"/>
<path d="M1306,691 h22" stroke="#888" stroke-width="4" fill="none"/>
<rect x="1699" y="607" width="89" height="17" fill="#c4c4c4"/>
<rect x="1720" y="570" width="18" height="12" fill="#2a2a2a"/>
<path d="M1709,527 V597 H1788 M1675,465 V641 M1773,485 V633 M1657,633 H1806 M1669,475 H1776" stroke="#6e6e6e" stroke-width="2.2" fill="none"/>
<path d="M1770,465 L1742,601 M1789,489 L1729,613 M1648,516 L1725,558 M1786,541 L1715,545 M1776,564 L1724,560 M1646,587 L1708,592 M1788,614 L1753,555 M1800,633 L1718,597" stroke="#8a8a8a" stroke-width="1.8" fill="none"/>
<path d="M1770,458 h26 v14 h-26Z M1789,482 h26 v14 h-26Z M1532,509 h26 v14 h-26Z M1786,534 h26 v14 h-26Z M1776,557 h26 v14 h-26Z M1542,580 h26 v14 h-26Z M1788,607 h26 v14 h-26Z M1800,626 h26 v14 h-26Z" stroke="#666" stroke-width="2" fill="none"/>
<path d="M1804,465 h90 M1823,489 h71 M1823,500 h40 M1566,516 h82 M1820,541 h74 M1810,564 h84 M1810,575 h34 M1576,587 h70 M1822,614 h72 M1834,633 h60" stroke="#777" stroke-width="5" stroke-dasharray="11 3 17 4 7 3 13 4" fill="none"/>
<path d="M1699,527 V607 H1788" stroke="#262626" stroke-width="5.5" fill="none"/>
<circle cx="1544" cy="681" r="11" fill="none" stroke="#666" stroke-width="2"/>
<path d="M1564,671 h195" stroke="#6a6a6a" stroke-width="11" stroke-dasharray="16 4 26 5 10 4 34 5" fill="none"/>
<path d="M1560,683 H1868" stroke="#999" stroke-width="2" fill="none"/>
<path d="M1566,691 h22" stroke="#888" stroke-width="4" fill="none"/>
<rect x="193" y="917" width="54" height="20" fill="#c4c4c4"/>
<rect x="205" y="873" width="11" height="14" fill="#2a2a2a"/>
<path d="M203,822 V907 H247 M179,747 V962 M238,772 V952 M168,945 H257 M175,760 H240" stroke="#6e6e6e" stroke-width="2.2" fill="none"/>
<path d="M229,746 L222,914 M211,799 L226,915 M166,853 L204,921 M213,905 L211,887 M214,957 L225,885" stroke="#8a8a8a" stroke-width="1.8" fill="none"/>
<path d="M229,739 h26 v14 h-26Z M211,792 h26 v14 h-26Z M92,846 h26 v14 h-26Z M213,898 h26 v14 h-26Z M214,950 h26 v14 h-26Z" stroke="#666" stroke-width="2" fill="none"/>
<path d="M263,746 h41 M245,799 h59 M126,853 h40 M247,905 h57 M247,916 h42 M248,957 h56" stroke="#777" stroke-width="5" stroke-dasharray="11 3 17 4 7 3 13 4" fill="none"/>
<path d="M193,822 V917 H247" stroke="#262626" stroke-width="5.5" fill="none"/>
<circle cx="104" cy="1006" r="11" fill="none" stroke="#666" stroke-width="2"/>
<path d="M124,996 h94" stroke="#6a6a6a" stroke-width="11" stroke-dasharray="16 4 26 5 10 4 34 5" fill="none"/>
<path d="M120,1008 H287" stroke="#999" stroke-width="2" fill="none"/>
<path d="M126,1016 h22" stroke="#888" stroke-width="4" fill="none"/>
<rect x="462" y="844" width="21" height="13" fill="#2a2a2a"/>
<path d="M446,794 V897 H499 V794 M411,747 V962 M524,772 V952 M390,915 H562 M404,760 H527" stroke="#6e6e6e" stroke-width="2.2" fill="none"/>
<path d="M534,749 L473,837 M539,786 L469,858 M433,819 L448,819 M527,854 L507,806 M530,891 L487,879 M445,927 L463,837 M535,961 L458,836" stroke="#8a8a8a" stroke-width="1.8" fill="none"/>
<path d="M534,742 h26 v14 h-26Z M539,779 h26 v14 h-26Z M362,812 h26 v14 h-26Z M527,847 h26 v14 h-26Z M530,884 h26 v14 h-26Z M362,920 h26 v14 h-26Z M535,954 h26 v14 h-26Z" stroke="#666" stroke-width="2" fill="none"/>
<path d="M568,749 h61 M573,786 h56 M573,797 h36 M396,819 h37 M561,854 h68 M561,865 h39 M564,891 h65 M396,927 h49 M569,961 h60" stroke="#777" stroke-width="5" stroke-dasharray="11 3 17 4 7 3 13 4" fill="none"/>
<path d="M438,794 V905 H507 V794" stroke="#262626" stroke-width="5.5" fill="none"/>
<circle cx="374" cy="1006" r="11" fill="none" stroke="#666" stroke-width="2"/>
<path d="M394,996 h144" stroke="#6a6a6a" stroke-width="11" stroke-dasharray="16 4 26 5 10 4 34 5" fill="none"/>
<path d="M390,1008 H609" stroke="#999" stroke-width="2" fill="none"/>
<path d="M396,1016 h22" stroke="#888" stroke-width="4" fill="none"/>
<rect x="768" y="857" width="19" height="12" fill="#2a2a2a"/>
<path d="M766,915 V961 M790,915 V961 M721,747 V962 M825,772 V952 M702,925 H860 M715,760 H828" stroke="#6e6e6e" stroke-width="2.2" fill="none"/>
<path d="M794,749 L802,850 M799,776 L791,868 M737,809 L766,838 M824,843 L780,851 M815,867 L773,837 M726,901 L765,838 M809,931 L791,823 M797,961 L793,837" stroke="#8a8a8a" stroke-width="1.8" fill="none"/>
<path d="M794,742 h26 v14 h-26Z M799,769 h26 v14 h-26Z M642,802 h26 v14 h-26Z M824,836 h26 v14 h-26Z M815,860 h26 v14 h-26Z M642,894 h26 v14 h-26Z M809,924 h26 v14 h-26Z M797,954 h26 v14 h-26Z" stroke="#666" stroke-width="2" fill="none"/>
<path d="M828,749 h76 M828,760 h36 M833,776 h71 M833,787 h29 M676,809 h61 M858,843 h46 M858,854 h36 M849,867 h55 M676,901 h50 M843,931 h61 M831,961 h73 M831,972 h49" stroke="#777" stroke-width="5" stroke-dasharray="11 3 17 4 7 3 13 4" fill="none"/>
<path d="M715,863 H841 M778,863 V915 M759,837 h38 v26" stroke="#262626" stroke-width="5.5" fill="none"/>
<circle cx="654" cy="1006" r="11" fill="none" stroke="#666" stroke-width="2"/>
<path d="M674,996 h161" stroke="#6a6a6a" stroke-width="11" stroke-dasharray="16 4 26 5 10 4 34 5" fill="none"/>
<path d="M670,1008 H884" stroke="#999" stroke-width="2" fill="none"/>
<path d="M676,1016 h22" stroke="#888" stroke-width="4" fill="none"/>
<rect x="1020" y="894" width="103" height="16" fill="#c4c4c4"/>
<rect x="1044" y="860" width="21" height="11" fill="#2a2a2a"/>
<path d="M1030,819 V884 H1123 M993,747 V962 M1106,772 V952 M972,919 H1144 M986,760 H1109" stroke="#6e6e6e" stroke-width="2.2" fill="none"/>
<path d="M1118,748 L1065,839 M1134,776 L1070,881 M1008,810 L1034,895 M1117,835 L1043,838 M1128,869 L1070,898 M999,896 L1034,854 M1115,924 L1063,888 M1129,960 L1060,840" stroke="#8a8a8a" stroke-width="1.8" fill="none"/>
<path d="M1118,741 h26 v14 h-26Z M1134,769 h26 v14 h-26Z M912,803 h26 v14 h-26Z M1117,828 h26 v14 h-26Z M1128,862 h26 v14 h-26Z M912,889 h26 v14 h-26Z M1115,917 h26 v14 h-26Z M1129,953 h26 v14 h-26Z" stroke="#666" stroke-width="2" fill="none"/>
<path d="M1152,748 h92 M1152,759 h45 M1168,776 h66 M946,810 h62 M1151,835 h93 M1162,869 h82 M1162,880 h56 M946,896 h53 M1149,924 h95 M1149,935 h54 M1163,960 h81 M1163,971 h39" stroke="#777" stroke-width="5" stroke-dasharray="11 3 17 4 7 3 13 4" fill="none"/>
<path d="M1020,819 V894 H1123" stroke="#262626" stroke-width="5.5" fill="none"/>
<circle cx="924" cy="1006" r="11" fill="none" stroke="#666" stroke-width="2"/>
<path d="M944,996 h172" stroke="#6a6a6a" stroke-width="11" stroke-dasharray="16 4 26 5 10 4 34 5" fill="none"/>
<path d="M940,1008 H1220" stroke="#999" stroke-width="2" fill="none"/>
<path d="M946,1016 h22" stroke="#888" stroke-width="4" fill="none"/>
<rect x="1351" y="883" width="64" height="19" fill="#c4c4c4"/>
<rect x="1366" y="843" width="13" height="12" fill="#2a2a2a"/>
<path d="M1361,797 V873 H1415 M1334,747 V962 M1405,772 V952 M1322,911 H1428 M1330,760 H1407" stroke="#6e6e6e" stroke-width="2.2" fill="none"/>
<path d="M1405,746 L1364,834 M1416,787 L1387,879 M1344,817 L1360,851 M1427,852 L1394,825 M1404,888 L1391,884 M1346,923 L1359,869 M1426,954 L1368,886" stroke="#8a8a8a" stroke-width="1.8" fill="none"/>
<path d="M1405,739 h26 v14 h-26Z M1416,780 h26 v14 h-26Z M1272,810 h26 v14 h-26Z M1427,845 h26 v14 h-26Z M1404,881 h26 v14 h-26Z M1272,916 h26 v14 h-26Z M1426,947 h26 v14 h-26Z" stroke="#666" stroke-width="2" fill="none"/>
<path d="M1439,746 h65 M1450,787 h54 M1306,817 h38 M1461,852 h41 M1461,863 h21 M1438,888 h66 M1306,923 h40 M1460,954 h43" stroke="#777" stroke-width="5" stroke-dasharray="11 3 17 4 7 3 13 4" fill="none"/>
<path d="M1351,797 V883 H1415" stroke="#262626" stroke-width="5.5" fill="none"/>
<circle cx="1284" cy="1006" r="11" fill="none" stroke="#666" stroke-width="2"/>
<path d="M1304,996 h107" stroke="#6a6a6a" stroke-width="11" stroke-dasharray="16 4 26 5 10 4 34 5" fill="none"/>
<path d="M1300,1008 H1486" stroke="#999" stroke-width="2" fill="none"/>
<path d="M1306,1016 h22" stroke="#888" stroke-width="4" fill="none"/>
<rect x="1663" y="900" width="105" height="18" fill="#c4c4c4"/>
<rect x="1687" y="861" width="21" height="12" fill="#2a2a2a"/>
<path d="M1673,815 V890 H1768 M1635,747 V962 M1751,772 V952 M1613,927 H1789 M1627,760 H1754" stroke="#6e6e6e" stroke-width="2.2" fill="none"/>
<path d="M1773,746 L1708,854 M1788,791 L1701,898 M1645,832 L1683,890 M1766,871 L1714,857 M1780,917 L1686,883 M1620,954 L1684,903" stroke="#8a8a8a" stroke-width="1.8" fill="none"/>
<path d="M1773,739 h26 v14 h-26Z M1788,784 h26 v14 h-26Z M1532,825 h26 v14 h-26Z M1766,864 h26 v14 h-26Z M1780,910 h26 v14 h-26Z M1532,947 h26 v14 h-26Z" stroke="#666" stroke-width="2" fill="none"/>
<path d="M1807,746 h87 M1807,757 h37 M1822,791 h72 M1822,802 h46 M1566,832 h79 M1800,871 h94 M1814,917 h80 M1566,954 h54" stroke="#777" stroke-width="5" stroke-dasharray="11 3 17 4 7 3 13 4" fill="none"/>
<path d="M1663,815 V900 H1768" stroke="#262626" stroke-width="5.5" fill="none"/>
<circle cx="1544" cy="1006" r="11" fill="none" stroke="#666" stroke-width="2"/>
<path d="M1564,996 h163" stroke="#6a6a6a" stroke-width="11" stroke-dasharray="16 4 26 5 10 4 34 5" fill="none"/>
<path d="M1560,1008 H1868" stroke="#999" stroke-width="2" fill="none"/>
<path d="M1566,1016 h22" stroke="#888" stroke-width="4" fill="none"/>
<rect x="187" y="1066" width="17" height="210" fill="#bdbdbd"/>
<rect x="193" y="1168" width="11" height="10" fill="#2a2a2a"/>
<path d="M206,1071 L232,1091 L206,1111 L232,1132 L206,1152 L232,1172 M165,1058 V1286 M227,1084 V1276 M154,1222 H247 M161,1071 H229" stroke="#6e6e6e" stroke-width="2.2" fill="none"/>
<path d="M223,1059 L217,1147 M236,1116 L216,1162 M163,1174 L192,1176 M216,1224 L215,1180 M216,1281 L206,1194" stroke="#8a8a8a" stroke-width="1.8" fill="none"/>
<path d="M223,1052 h26 v14 h-26Z M236,1109 h26 v14 h-26Z M92,1167 h26 v14 h-26Z M216,1217 h26 v14 h-26Z M216,1274 h26 v14 h-26Z" stroke="#666" stroke-width="2" fill="none"/>
<path d="M257,1059 h47 M270,1116 h34 M126,1174 h37 M250,1224 h54 M250,1281 h54" stroke="#777" stroke-width="5" stroke-dasharray="11 3 17 4 7 3 13 4" fill="none"/>
<path d="M187,1066 V1276 M204,1172 h34 v16 h-34" stroke="#262626" stroke-width="5.5" fill="none"/>
<circle cx="104" cy="1331" r="11" fill="none" stroke="#666" stroke-width="2"/>
<path d="M124,1321 h118" stroke="#6a6a6a" stroke-width="11" stroke-dasharray="16 4 26 5 10 4 34 5" fill="none"/>
<path d="M120,1333 H287" stroke="#999" stroke-width="2" fill="none"/>
<path d="M126,1341 h22" stroke="#888" stroke-width="4" fill="none"/>
<rect x="720" y="1205" width="111" height="19" fill="#c9c9c9"/>
<rect x="766" y="1160" width="19" height="14" fill="#2a2a2a"/>
<path d="M745,1126 l62,79 M807,1126 l-62,79 M720,1058 V1286 M822,1084 V1276 M702,1235 H856 M714,1071 H825" stroke="#6e6e6e" stroke-width="2.2" fill="none"/>
<path d="M818,1064 L779,1151 M813,1094 L798,1211 M736,1137 L775,1187 M798,1168 L763,1119 M822,1204 L786,1184 M730,1240 L760,1156 M802,1284 L779,1132" stroke="#8a8a8a" stroke-width="1.8" fill="none"/>
<path d="M818,1057 h26 v14 h-26Z M813,1087 h26 v14 h-26Z M642,1130 h26 v14 h-26Z M798,1161 h26 v14 h-26Z M822,1197 h26 v14 h-26Z M642,1233 h26 v14 h-26Z M802,1277 h26 v14 h-26Z" stroke="#666" stroke-width="2" fill="none"/>
<path d="M852,1064 h52 M847,1094 h57 M847,1105 h31 M676,1137 h60 M832,1168 h72 M832,1179 h41 M856,1204 h48 M856,1215 h34 M676,1240 h54 M836,1284 h68 M836,1295 h52" stroke="#777" stroke-width="5" stroke-dasharray="11 3 17 4 7 3 13 4" fill="none"/>
<path d="M745,1126 h62 v79 h-62Z" stroke="#262626" stroke-width="5.5" fill="none"/>
<circle cx="654" cy="1331" r="11" fill="none" stroke="#666" stroke-width="2"/>
<path d="M674,1321 h155" stroke="#6a6a6a" stroke-width="11" stroke-dasharray="16 4 26 5 10 4 34 5" fill="none"/>
<path d="M670,1333 H884" stroke="#999" stroke-width="2" fill="none"/>
<path d="M676,1341 h22" stroke="#888" stroke-width="4" fill="none"/>
<rect x="1084" y="1163" width="21" height="12" fill="#2a2a2a"/>
<path d="M1082,1217 V1273 M1106,1217 V1273 M1030,1058 V1286 M1148,1084 V1276 M1009,1227 H1187 M1023,1071 H1152" stroke="#6e6e6e" stroke-width="2.2" fill="none"/>
<path d="M1129,1062 L1109,1176 M1112,1096 L1085,1137 M1009,1125 L1073,1157 M1132,1157 L1120,1189 M1146,1183 L1080,1157 M1005,1219 L1069,1184 M1156,1247 L1127,1207 M1144,1278 L1106,1204" stroke="#8a8a8a" stroke-width="1.8" fill="none"/>
<path d="M1129,1055 h26 v14 h-26Z M1112,1089 h26 v14 h-26Z M912,1118 h26 v14 h-26Z M1132,1150 h26 v14 h-26Z M1146,1176 h26 v14 h-26Z M928,1212 h26 v14 h-26Z M1156,1240 h26 v14 h-26Z M1144,1271 h26 v14 h-26Z" stroke="#666" stroke-width="2" fill="none"/>
<path d="M1163,1062 h81 M1146,1096 h98 M1146,1107 h45 M946,1125 h63 M1166,1157 h78 M1180,1183 h64 M962,1219 h43 M1190,1247 h54 M1190,1258 h23 M1178,1278 h66 M1178,1289 h35" stroke="#777" stroke-width="5" stroke-dasharray="11 3 17 4 7 3 13 4" fill="none"/>
<path d="M1023,1168 H1166 M1094,1168 V1217 M1073,1143 h43 v25" stroke="#262626" stroke-width="5.5" fill="none"/>
<circle cx="924" cy="1331" r="11" fill="none" stroke="#666" stroke-width="2"/>
<path d="M944,1321 h203" stroke="#6a6a6a" stroke-width="11" stroke-dasharray="16 4 26 5 10 4 34 5" fill="none"/>
<path d="M940,1333 H1220" stroke="#999" stroke-width="2" fill="none"/>
<path d="M946,1341 h22" stroke="#888" stroke-width="4" fill="none"/>
<rect x="1363" y="1234" width="70" height="16" fill="#c9c9c9"/>
<rect x="1393" y="1194" width="12" height="12" fill="#2a2a2a"/>
<path d="M1379,1165 l39,68 M1418,1165 l-39,68 M1363,1058 V1286 M1428,1084 V1276 M1352,1261 H1449 M1360,1071 H1430" stroke="#6e6e6e" stroke-width="2.2" fill="none"/>
<path d="M1403,1061 L1391,1178 M1405,1090 L1409,1196 M1346,1126 L1387,1172 M1428,1152 L1394,1212 M1405,1183 L1418,1161 M1348,1220 L1384,1159 M1415,1248 L1389,1231 M1402,1277 L1390,1166" stroke="#8a8a8a" stroke-width="1.8" fill="none"/>
<path d="M1403,1054 h26 v14 h-26Z M1405,1083 h26 v14 h-26Z M1275,1119 h26 v14 h-26Z M1428,1145 h26 v14 h-26Z M1405,1176 h26 v14 h-26Z M1281,1213 h26 v14 h-26Z M1415,1241 h26 v14 h-26Z M1402,1270 h26 v14 h-26Z" stroke="#666" stroke-width="2" fill="none"/>
<path d="M1437,1061 h67 M1437,1072 h49 M1439,1090 h65 M1439,1101 h42 M1309,1126 h38 M1462,1152 h42 M1439,1183 h65 M1315,1220 h33 M1449,1248 h55 M1436,1277 h68 M1436,1288 h28" stroke="#777" stroke-width="5" stroke-dasharray="11 3 17 4 7 3 13 4" fill="none"/>
<path d="M1379,1165 h39 v68 h-39Z" stroke="#262626" stroke-width="5.5" fill="none"/>
<circle cx="1284" cy="1331" r="11" fill="none" stroke="#666" stroke-width="2"/>
<path d="M1304,1321 h100" stroke="#6a6a6a" stroke-width="11" stroke-dasharray="16 4 26 5 10 4 34 5" fill="none"/>
<path d="M1300,1333 H1486" stroke="#999" stroke-width="2" fill="none"/>
<path d="M1306,1341 h22" stroke="#888" stroke-width="4" fill="none"/>
<rect x="1684" y="1175" width="23" height="11" fill="#2a2a2a"/>
<path d="M1665,1134 V1218 H1725 V1134 M1627,1058 V1286 M1752,1084 V1276 M1605,1236 H1793 M1620,1071 H1755" stroke="#6e6e6e" stroke-width="2.2" fill="none"/>
<path d="M1784,1058 L1711,1160 M1787,1095 L1701,1198 M1648,1138 L1673,1187 M1773,1174 L1728,1206 M1773,1204 L1697,1153 M1638,1245 L1676,1155 M1774,1279 L1691,1175" stroke="#8a8a8a" stroke-width="1.8" fill="none"/>
<path d="M1784,1051 h26 v14 h-26Z M1787,1088 h26 v14 h-26Z M1532,1131 h26 v14 h-26Z M1773,1167 h26 v14 h-26Z M1773,1197 h26 v14 h-26Z M1532,1238 h26 v14 h-26Z M1774,1272 h26 v14 h-26Z" stroke="#666" stroke-width="2" fill="none"/>
<path d="M1818,1058 h63 M1821,1095 h63 M1566,1138 h82 M1807,1174 h74 M1807,1185 h40 M1807,1204 h75 M1807,1215 h55 M1566,1245 h72 M1808,1279 h67" stroke="#777" stroke-width="5" stroke-dasharray="11 3 17 4 7 3 13 4" fill="none"/>
<path d="M1657,1134 V1226 H1733 V1134" stroke="#262626" stroke-width="5.5" fill="none"/>
<circle cx="1544" cy="1331" r="11" fill="none" stroke="#666" stroke-width="2"/>
<path d="M1564,1321 h188" stroke="#6a6a6a" stroke-width="11" stroke-dasharray="16 4 26 5 10 4 34 5" fill="none"/>
<path d="M1560,1333 H1868" stroke="#999" stroke-width="2" fill="none"/>
<path d="M1566,1341 h22" stroke="#888" stroke-width="4" fill="none"/>
<rect x="1835" y="310" width="40" height="210" fill="#ff5a5a" opacity="0.7"/>
<path d="M1560,1068 h100 M1560,1080 h250 M1560,1092 h255 M1560,1104 h180" stroke="#ff4a4a" stroke-width="5" fill="none"/>
</g>
<g transform="translate(30,990) scale(0.19544)">
<rect x="57" y="65" width="2140" height="1495" fill="#fefefe" stroke="#7c7c7c" stroke-width="5"/>
<path d="M2038,65 V1560" stroke="#555" stroke-width="3.5" fill="none"/>
<path d="M2046,72 H2185 V327 H2046Z M2046,342 H2185 V581 H2046Z M2046,596 H2185 V1037 H2046Z M2046,1044 H2185 V1261 H2046Z M2046,1268 H2185 V1418 H2046Z M2046,1433 H2185 V1508 H2046Z" stroke="#aaa" stroke-width="2.5" fill="none"/>
<path d="M2066,72 V327 M2086,72 V327 M2106,72 V327 M2125,72 V327 M2145,72 V327 M2165,72 V327" stroke="#c4c4c4" stroke-width="2" fill="none"/>
<rect x="2052" y="348" width="48" height="227" fill="#8f8f8f" opacity="0.6"/>
<rect x="2109" y="348" width="57" height="227" fill="#9a9a9a" opacity="0.5"/>
<path d="M2057,641 V992" stroke="#bbb" stroke-width="2" fill="none"/>
<path d="M2086,700 V977 M2105,670 V947 M2130,775 V887 M2152,745 V917" stroke="#777" stroke-width="6" stroke-dasharray="14 5 22 6 9 4" fill="none"/>
<rect x="2054" y="1112" width="32" height="127" fill="#333"/>
<rect x="2125" y="1156" width="35" height="82" fill="#222"/>
<rect x="2130" y="1059" width="32" height="90" fill="#aaa" opacity="0.7"/>
<circle cx="2110" cy="1343" r="43" fill="none" stroke="#777" stroke-width="3.5"/>
<circle cx="2110" cy="1343" r="30" fill="none" stroke="#999" stroke-width="2.5"/>
<path d="M2046,1448 H2185 M2046,1463 H2185 M2046,1478 H2185 M2046,1493 H2185" stroke="#b5b5b5" stroke-width="2" fill="none"/>
<rect x="2046" y="1506" width="139" height="46" fill="none" stroke="#888" stroke-width="2.5"/>
<rect x="245" y="315" width="154" height="13" fill="#c9c9c9"/>
<rect x="309" y="283" width="26" height="10" fill="#2a2a2a"/>
<path d="M279,260 l86,54 M365,260 l-86,54 M245,183 V411 M386,209 V401 M219,338 H433 M236,196 H390" stroke="#6e6e6e" stroke-width="2.2" fill="none"/>
<path d="M423,185 L301,260 M385,240 L361,292 M266,295 L320,311 M411,349 L308,293 M409,407 L310,299" stroke="#8a8a8a" stroke-width="1.8" fill="none"/>
<path d="M423,178 h26 v14 h-26Z M385,233 h26 v14 h-26Z M142,288 h26 v14 h-26Z M411,342 h26 v14 h-26Z M409,400 h26 v14 h-26Z" stroke="#666" stroke-width="2" fill="none"/>
<path d="M457,185 h64 M457,196 h37 M419,240 h105 M419,251 h68 M176,295 h90 M445,349 h68 M445,360 h50 M443,407 h81 M443,418 h34" stroke="#777" stroke-width="5" stroke-dasharray="11 3 17 4 7 3 13 4" fill="none"/>
<path d="M279,260 h86 v54 h-86Z" stroke="#262626" stroke-width="5.5" fill="none"/>
<circle cx="154" cy="456" r="11" fill="none" stroke="#666" stroke-width="2"/>
<path d="M174,446 h188" stroke="#858585" stroke-width="7" stroke-dasharray="16 4 26 5 10 4 34 5" fill="none"/>
<path d="M170,458 H497" stroke="#999" stroke-width="2" fill="none"/>
<path d="M176,466 h22" stroke="#888" stroke-width="4" fill="none"/>
<rect x="738" y="311" width="159" height="22" fill="#c4c4c4"/>
<rect x="775" y="264" width="32" height="15" fill="#2a2a2a"/>
<path d="M748,208 V301 H896 M695,107 V405 M870,141 V391 M664,341 H928 M685,124 H875" stroke="#6e6e6e" stroke-width="2.2" fill="none"/>
<path d="M917,107 L810,228 M910,168 L794,315 M679,222 L757,301 M917,282 L765,230 M897,339 L785,277 M673,399 L760,308" stroke="#8a8a8a" stroke-width="1.8" fill="none"/>
<path d="M917,100 h26 v14 h-26Z M910,161 h26 v14 h-26Z M547,215 h26 v14 h-26Z M917,275 h26 v14 h-26Z M897,332 h26 v14 h-26Z M547,392 h26 v14 h-26Z" stroke="#666" stroke-width="2" fill="none"/>
<path d="M951,107 h104 M951,118 h60 M944,168 h94 M581,222 h98 M951,282 h108 M931,339 h133 M581,399 h92" stroke="#777" stroke-width="5" stroke-dasharray="11 3 17 4 7 3 13 4" fill="none"/>
<path d="M738,208 V311 H896" stroke="#262626" stroke-width="5.5" fill="none"/>
<circle cx="559" cy="456" r="11" fill="none" stroke="#666" stroke-width="2"/>
<path d="M579,446 h245" stroke="#858585" stroke-width="7" stroke-dasharray="16 4 26 5 10 4 34 5" fill="none"/>
<path d="M575,458 H1029" stroke="#999" stroke-width="2" fill="none"/>
<path d="M581,466 h22" stroke="#888" stroke-width="4" fill="none"/>
<rect x="1274" y="299" width="176" height="25" fill="#c4c4c4"/>
<rect x="1315" y="246" width="35" height="17" fill="#2a2a2a"/>
<path d="M1284,184 V289 H1450 M1227,102 V404 M1420,137 V390 M1192,332 H1485 M1215,120 H1426" stroke="#6e6e6e" stroke-width="2.2" fill="none"/>
<path d="M1417,103 L1305,247 M1370,155 L1323,244 M1176,202 L1287,214 M1418,249 L1352,227 M1404,296 L1387,274 M1177,349 L1301,204 M1377,400 L1334,242" stroke="#8a8a8a" stroke-width="1.8" fill="none"/>
<path d="M1417,96 h26 v14 h-26Z M1370,148 h26 v14 h-26Z M1022,195 h26 v14 h-26Z M1418,242 h26 v14 h-26Z M1404,289 h26 v14 h-26Z M1039,342 h26 v14 h-26Z M1377,393 h26 v14 h-26Z" stroke="#666" stroke-width="2" fill="none"/>
<path d="M1451,103 h103 M1404,155 h150 M1056,202 h120 M1452,249 h102 M1438,296 h116 M1073,349 h105 M1411,400 h143" stroke="#777" stroke-width="5" stroke-dasharray="11 3 17 4 7 3 13 4" fill="none"/>
<path d="M1274,184 V299 H1450" stroke="#262626" stroke-width="5.5" fill="none"/>
<circle cx="1034" cy="456" r="11" fill="none" stroke="#666" stroke-width="2"/>
<path d="M1054,446 h224" stroke="#858585" stroke-width="7" stroke-dasharray="16 4 26 5 10 4 34 5" fill="none"/>
<path d="M1050,458 H1518" stroke="#999" stroke-width="2" fill="none"/>
<path d="M1056,466 h22" stroke="#888" stroke-width="4" fill="none"/>
<rect x="1764" y="201" width="108" height="14" fill="#c4c4c4"/>
<rect x="1789" y="171" width="22" height="10" fill="#2a2a2a"/>
<path d="M1774,135 V191 H1871 M1735,87 V288 M1853,110 V279 M1714,225 H1893 M1728,98 H1857" stroke="#6e6e6e" stroke-width="2.2" fill="none"/>
<path d="M1871,88 L1799,145 M1864,141 L1799,151 M1709,189 L1786,174 M1883,232 L1787,145 M1869,287 L1780,177" stroke="#8a8a8a" stroke-width="1.8" fill="none"/>
<path d="M1871,81 h26 v14 h-26Z M1864,134 h26 v14 h-26Z M1572,182 h26 v14 h-26Z M1883,225 h26 v14 h-26Z M1869,280 h26 v14 h-26Z" stroke="#666" stroke-width="2" fill="none"/>
<path d="M1905,88 h72 M1905,99 h32 M1898,141 h106 M1898,152 h57 M1606,189 h103 M1917,232 h75 M1917,243 h55 M1903,287 h101" stroke="#777" stroke-width="5" stroke-dasharray="11 3 17 4 7 3 13 4" fill="none"/>
<path d="M1764,135 V201 H1871" stroke="#262626" stroke-width="5.5" fill="none"/>
<circle cx="1584" cy="331" r="11" fill="none" stroke="#666" stroke-width="2"/>
<path d="M1604,321 h265" stroke="#858585" stroke-width="7" stroke-dasharray="16 4 26 5 10 4 34 5" fill="none"/>
<path d="M1600,333 H1974" stroke="#999" stroke-width="2" fill="none"/>
<path d="M1606,341 h22" stroke="#888" stroke-width="4" fill="none"/>
<rect x="328" y="659" width="103" height="17" fill="#c4c4c4"/>
<rect x="353" y="623" width="21" height="11" fill="#2a2a2a"/>
<path d="M338,580 V649 H432 M301,503 V722 M415,528 V712 M280,684 H452 M294,515 H418" stroke="#6e6e6e" stroke-width="2.2" fill="none"/>
<path d="M403,507 L387,664 M389,543 L355,629 M275,575 L362,611 M395,609 L397,662 M419,645 L377,658 M270,684 L345,650 M397,713 L384,626" stroke="#8a8a8a" stroke-width="1.8" fill="none"/>
<path d="M403,500 h26 v14 h-26Z M389,536 h26 v14 h-26Z M192,568 h26 v14 h-26Z M395,602 h26 v14 h-26Z M419,638 h26 v14 h-26Z M169,677 h26 v14 h-26Z M397,706 h26 v14 h-26Z" stroke="#666" stroke-width="2" fill="none"/>
<path d="M437,507 h87 M437,518 h42 M423,543 h101 M226,575 h49 M429,609 h95 M429,620 h74 M453,645 h71 M453,656 h34 M203,684 h67 M431,713 h93" stroke="#777" stroke-width="5" stroke-dasharray="11 3 17 4 7 3 13 4" fill="none"/>
<path d="M328,580 V659 H432" stroke="#262626" stroke-width="5.5" fill="none"/>
<circle cx="164" cy="766" r="11" fill="none" stroke="#666" stroke-width="2"/>
<path d="M184,756 h163" stroke="#858585" stroke-width="7" stroke-dasharray="16 4 26 5 10 4 34 5" fill="none"/>
<path d="M180,768 H498" stroke="#999" stroke-width="2" fill="none"/>
<path d="M186,776 h22" stroke="#888" stroke-width="4" fill="none"/>
<rect x="717" y="519" width="30" height="194" fill="#bdbdbd"/>
<rect x="727" y="610" width="20" height="14" fill="#2a2a2a"/>
<path d="M751,524 L798,543 L751,561 L798,579 L751,598 L798,616 M677,512 V723 M788,536 V713 M657,686 H825 M670,524 H791" stroke="#6e6e6e" stroke-width="2.2" fill="none"/>
<path d="M748,514 L725,655 M779,546 L753,602 M656,573 L737,661 M765,603 L762,588 M774,629 L731,608 M680,657 L728,612 M750,689 L744,619 M784,718 L760,585" stroke="#8a8a8a" stroke-width="1.8" fill="none"/>
<path d="M748,507 h26 v14 h-26Z M779,539 h26 v14 h-26Z M582,566 h26 v14 h-26Z M765,596 h26 v14 h-26Z M774,622 h26 v14 h-26Z M582,650 h26 v14 h-26Z M750,682 h26 v14 h-26Z M784,711 h26 v14 h-26Z" stroke="#666" stroke-width="2" fill="none"/>
<path d="M782,514 h82 M782,525 h37 M813,546 h51 M616,573 h40 M799,603 h65 M799,614 h49 M808,629 h56 M616,657 h64 M784,689 h80 M818,718 h46 M818,729 h18" stroke="#777" stroke-width="5" stroke-dasharray="11 3 17 4 7 3 13 4" fill="none"/>
<path d="M717,519 V713 M747,616 h61 v24 h-61" stroke="#262626" stroke-width="5.5" fill="none"/>
<circle cx="594" cy="766" r="11" fill="none" stroke="#666" stroke-width="2"/>
<path d="M614,756 h141" stroke="#858585" stroke-width="7" stroke-dasharray="16 4 26 5 10 4 34 5" fill="none"/>
<path d="M610,768 H843" stroke="#999" stroke-width="2" fill="none"/>
<path d="M616,776 h22" stroke="#888" stroke-width="4" fill="none"/>
<rect x="1013" y="672" width="104" height="13" fill="#c9c9c9"/>
<rect x="1056" y="641" width="17" height="10" fill="#2a2a2a"/>
<path d="M1036,618 l58,54 M1094,618 l-58,54 M1013,550 V726 M1108,570 V718 M996,696 H1140 M1007,560 H1111" stroke="#6e6e6e" stroke-width="2.2" fill="none"/>
<path d="M1118,554 L1084,646 M1090,577 L1071,646 M990,602 L1053,644 M1093,628 L1060,649 M1087,653 L1051,628 M997,670 L1047,671 M1092,695 L1093,627 M1105,725 L1086,623" stroke="#8a8a8a" stroke-width="1.8" fill="none"/>
<path d="M1118,547 h26 v14 h-26Z M1090,570 h26 v14 h-26Z M902,595 h26 v14 h-26Z M1093,621 h26 v14 h-26Z M1087,646 h26 v14 h-26Z M902,663 h26 v14 h-26Z M1092,688 h26 v14 h-26Z M1105,718 h26 v14 h-26Z" stroke="#666" stroke-width="2" fill="none"/>
<path d="M1152,554 h52 M1152,565 h27 M1124,577 h80 M1124,588 h52 M936,602 h54 M1127,628 h77 M1121,653 h83 M1121,664 h48 M936,670 h61 M1126,695 h78 M1126,706 h59 M1139,725 h65" stroke="#777" stroke-width="5" stroke-dasharray="11 3 17 4 7 3 13 4" fill="none"/>
<path d="M1036,618 h58 v54 h-58Z" stroke="#262626" stroke-width="5.5" fill="none"/>
<circle cx="914" cy="766" r="11" fill="none" stroke="#666" stroke-width="2"/>
<path d="M934,756 h148" stroke="#858585" stroke-width="7" stroke-dasharray="16 4 26 5 10 4 34 5" fill="none"/>
<path d="M930,768 H1182" stroke="#999" stroke-width="2" fill="none"/>
<path d="M936,776 h22" stroke="#888" stroke-width="4" fill="none"/>
<rect x="1410" y="633" width="20" height="9" fill="#2a2a2a"/>
<path d="M1408,674 V718 M1432,674 V718 M1360,550 V726 M1470,570 V718 M1340,684 H1506 M1353,560 H1473" stroke="#6e6e6e" stroke-width="2.2" fill="none"/>
<path d="M1487,551 L1416,664 M1463,591 L1404,624 M1333,640 L1400,656 M1476,682 L1427,637 M1496,720 L1414,609" stroke="#8a8a8a" stroke-width="1.8" fill="none"/>
<path d="M1487,544 h26 v14 h-26Z M1463,584 h26 v14 h-26Z M1244,633 h26 v14 h-26Z M1476,675 h26 v14 h-26Z M1496,713 h26 v14 h-26Z" stroke="#666" stroke-width="2" fill="none"/>
<path d="M1521,551 h83 M1521,562 h50 M1497,591 h107 M1278,640 h55 M1510,682 h94 M1510,693 h58 M1530,720 h74 M1530,731 h56" stroke="#777" stroke-width="5" stroke-dasharray="11 3 17 4 7 3 13 4" fill="none"/>
<path d="M1353,637 H1486 M1420,637 V674 M1400,619 h40 v18" stroke="#262626" stroke-width="5.5" fill="none"/>
<circle cx="1244" cy="766" r="11" fill="none" stroke="#666" stroke-width="2"/>
<path d="M1264,756 h155" stroke="#858585" stroke-width="7" stroke-dasharray="16 4 26 5 10 4 34 5" fill="none"/>
<path d="M1260,768 H1578" stroke="#999" stroke-width="2" fill="none"/>
<path d="M1266,776 h22" stroke="#888" stroke-width="4" fill="none"/>
<rect x="1791" y="501" width="21" height="10" fill="#2a2a2a"/>
<path d="M1775,464 V539 H1830 V464 M1738,392 V598 M1855,416 V589 M1717,557 H1894 M1731,404 H1859" stroke="#6e6e6e" stroke-width="2.2" fill="none"/>
<path d="M1863,390 L1816,475 M1866,424 L1834,514 M1715,451 L1789,517 M1874,478 L1810,537 M1887,508 L1818,516 M1745,537 L1775,493 M1879,563 L1822,481 M1864,597 L1831,501" stroke="#8a8a8a" stroke-width="1.8" fill="none"/>
<path d="M1863,383 h26 v14 h-26Z M1866,417 h26 v14 h-26Z M1622,444 h26 v14 h-26Z M1874,471 h26 v14 h-26Z M1887,501 h26 v14 h-26Z M1622,530 h26 v14 h-26Z M1879,556 h26 v14 h-26Z M1864,590 h26 v14 h-26Z" stroke="#666" stroke-width="2" fill="none"/>
<path d="M1897,390 h117 M1900,424 h114 M1900,435 h54 M1656,451 h59 M1908,478 h106 M1908,489 h43 M1921,508 h76 M1656,537 h89 M1913,563 h75 M1898,597 h116 M1898,608 h75" stroke="#777" stroke-width="5" stroke-dasharray="11 3 17 4 7 3 13 4" fill="none"/>
<path d="M1767,464 V547 H1838 V464" stroke="#262626" stroke-width="5.5" fill="none"/>
<circle cx="1634" cy="641" r="11" fill="none" stroke="#666" stroke-width="2"/>
<path d="M1654,631 h161" stroke="#858585" stroke-width="7" stroke-dasharray="16 4 26 5 10 4 34 5" fill="none"/>
<path d="M1650,643 H1987" stroke="#999" stroke-width="2" fill="none"/>
<path d="M1656,651 h22" stroke="#888" stroke-width="4" fill="none"/>
<rect x="289" y="939" width="135" height="14" fill="#c9c9c9"/>
<rect x="345" y="904" width="22" height="11" fill="#2a2a2a"/>
<path d="M319,879 l75,59 M394,879 l-75,59 M289,829 V987 M413,847 V980 M267,964 H454 M282,838 H416" stroke="#6e6e6e" stroke-width="2.2" fill="none"/>
<path d="M431,832 L356,897 M417,865 L347,886 M262,891 L348,920 M395,921 L343,915 M418,952 L385,884 M278,987 L339,928" stroke="#8a8a8a" stroke-width="1.8" fill="none"/>
<path d="M431,825 h26 v14 h-26Z M417,858 h26 v14 h-26Z M179,884 h26 v14 h-26Z M395,914 h26 v14 h-26Z M418,945 h26 v14 h-26Z M167,980 h26 v14 h-26Z" stroke="#666" stroke-width="2" fill="none"/>
<path d="M465,832 h59 M465,843 h24 M451,865 h73 M213,891 h49 M429,921 h95 M452,952 h72 M452,963 h56 M201,987 h77" stroke="#777" stroke-width="5" stroke-dasharray="11 3 17 4 7 3 13 4" fill="none"/>
<path d="M319,879 h75 v59 h-75Z" stroke="#262626" stroke-width="5.5" fill="none"/>
<circle cx="179" cy="1026" r="11" fill="none" stroke="#666" stroke-width="2"/>
<path d="M199,1016 h198" stroke="#858585" stroke-width="7" stroke-dasharray="16 4 26 5 10 4 34 5" fill="none"/>
<path d="M195,1028 H499" stroke="#999" stroke-width="2" fill="none"/>
<path d="M201,1036 h22" stroke="#888" stroke-width="4" fill="none"/>
<rect x="673" y="922" width="114" height="10" fill="#c9c9c9"/>
<rect x="721" y="897" width="19" height="8" fill="#2a2a2a"/>
<path d="M698,879 l63,42 M762,879 l-63,42 M673,820 V987 M777,839 V979 M654,942 H812 M667,829 H781" stroke="#6e6e6e" stroke-width="2.2" fill="none"/>
<path d="M762,823 L737,917 M761,847 L746,910 M658,865 L727,893 M761,887 L743,910 M794,914 L737,902 M660,938 L711,888 M784,956 L760,900 M775,982 L742,908" stroke="#8a8a8a" stroke-width="1.8" fill="none"/>
<path d="M762,816 h26 v14 h-26Z M761,840 h26 v14 h-26Z M587,858 h26 v14 h-26Z M761,880 h26 v14 h-26Z M794,907 h26 v14 h-26Z M587,931 h26 v14 h-26Z M784,949 h26 v14 h-26Z M775,975 h26 v14 h-26Z" stroke="#666" stroke-width="2" fill="none"/>
<path d="M796,823 h78 M795,847 h79 M621,865 h37 M795,887 h79 M828,914 h46 M621,938 h39 M818,956 h56 M818,967 h39 M809,982 h65" stroke="#777" stroke-width="5" stroke-dasharray="11 3 17 4 7 3 13 4" fill="none"/>
<path d="M698,879 h63 v42 h-63Z" stroke="#262626" stroke-width="5.5" fill="none"/>
<circle cx="599" cy="1026" r="11" fill="none" stroke="#666" stroke-width="2"/>
<path d="M619,1016 h119" stroke="#858585" stroke-width="7" stroke-dasharray="16 4 26 5 10 4 34 5" fill="none"/>
<path d="M615,1028 H853" stroke="#999" stroke-width="2" fill="none"/>
<path d="M621,1036 h22" stroke="#888" stroke-width="4" fill="none"/>
<rect x="988" y="929" width="167" height="10" fill="#c9c9c9"/>
<rect x="1057" y="904" width="28" height="8" fill="#2a2a2a"/>
<path d="M1025,886 l93,42 M1118,886 l-93,42 M988,834 V988 M1141,852 V981 M960,949 H1192 M979,843 H1145" stroke="#6e6e6e" stroke-width="2.2" fill="none"/>
<path d="M1172,832 L1095,916 M1168,864 L1052,928 M1025,893 L1037,883 M1151,924 L1059,930 M1165,952 L1114,889 M1004,987 L1039,918" stroke="#8a8a8a" stroke-width="1.8" fill="none"/>
<path d="M1172,825 h26 v14 h-26Z M1168,857 h26 v14 h-26Z M897,886 h26 v14 h-26Z M1151,917 h26 v14 h-26Z M1165,945 h26 v14 h-26Z M897,980 h26 v14 h-26Z" stroke="#666" stroke-width="2" fill="none"/>
<path d="M1206,832 h67 M1202,864 h92 M931,893 h94 M1185,924 h109 M1185,935 h55 M1199,952 h95 M931,987 h73" stroke="#777" stroke-width="5" stroke-dasharray="11 3 17 4 7 3 13 4" fill="none"/>
<path d="M1025,886 h93 v42 h-93Z" stroke="#262626" stroke-width="5.5" fill="none"/>
<circle cx="909" cy="1026" r="11" fill="none" stroke="#666" stroke-width="2"/>
<path d="M929,1016 h178" stroke="#858585" stroke-width="7" stroke-dasharray="16 4 26 5 10 4 34 5" fill="none"/>
<path d="M925,1028 H1266" stroke="#999" stroke-width="2" fill="none"/>
<path d="M931,1036 h22" stroke="#888" stroke-width="4" fill="none"/>
<rect x="1468" y="839" width="24" height="142" fill="#bdbdbd"/>
<rect x="1476" y="912" width="16" height="6" fill="#2a2a2a"/>
<path d="M1495,843 L1532,857 L1495,872 L1532,886 L1495,900 L1532,915 M1436,834 V988 M1524,852 V981 M1421,951 H1553 M1431,843 H1526" stroke="#6e6e6e" stroke-width="2.2" fill="none"/>
<path d="M1505,835 L1482,907 M1520,856 L1499,904 M1412,875 L1466,897 M1504,903 L1496,921 M1494,918 L1501,912 M1409,938 L1476,931 M1529,963 L1486,920 M1498,981 L1491,901" stroke="#8a8a8a" stroke-width="1.8" fill="none"/>
<path d="M1505,828 h26 v14 h-26Z M1520,849 h26 v14 h-26Z M1322,868 h26 v14 h-26Z M1504,896 h26 v14 h-26Z M1494,911 h26 v14 h-26Z M1305,931 h26 v14 h-26Z M1529,956 h26 v14 h-26Z M1498,974 h26 v14 h-26Z" stroke="#666" stroke-width="2" fill="none"/>
<path d="M1539,835 h85 M1539,846 h38 M1554,856 h70 M1554,867 h28 M1356,875 h56 M1538,903 h86 M1538,914 h36 M1528,918 h96 M1528,929 h68 M1339,938 h69 M1563,963 h61 M1532,981 h92" stroke="#777" stroke-width="5" stroke-dasharray="11 3 17 4 7 3 13 4" fill="none"/>
<path d="M1468,839 V981 M1492,915 h48 v11 h-48" stroke="#262626" stroke-width="5.5" fill="none"/>
<circle cx="1309" cy="1026" r="11" fill="none" stroke="#666" stroke-width="2"/>
<path d="M1329,1016 h160" stroke="#858585" stroke-width="7" stroke-dasharray="16 4 26 5 10 4 34 5" fill="none"/>
<path d="M1325,1028 H1600" stroke="#999" stroke-width="2" fill="none"/>
<path d="M1331,1036 h22" stroke="#888" stroke-width="4" fill="none"/>
<rect x="1782" y="709" width="40" height="294" fill="#bdbdbd"/>
<rect x="1796" y="843" width="27" height="19" fill="#2a2a2a"/>
<path d="M1827,717 L1889,744 L1827,770 L1889,797 L1827,824 L1889,851 M1729,698 V1018 M1876,735 V1003 M1702,940 H1924 M1720,717 H1880" stroke="#6e6e6e" stroke-width="2.2" fill="none"/>
<path d="M1890,700 L1797,902 M1907,764 L1814,805 M1719,823 L1797,799 M1905,885 L1836,840 M1891,948 L1802,910 M1736,1007 L1786,897" stroke="#8a8a8a" stroke-width="1.8" fill="none"/>
<path d="M1890,693 h26 v14 h-26Z M1907,757 h26 v14 h-26Z M1632,816 h26 v14 h-26Z M1905,878 h26 v14 h-26Z M1891,941 h26 v14 h-26Z M1632,1000 h26 v14 h-26Z" stroke="#666" stroke-width="2" fill="none"/>
<path d="M1924,700 h90 M1924,711 h42 M1941,764 h73 M1666,823 h53 M1939,885 h75 M1925,948 h89 M1925,959 h38 M1666,1007 h70" stroke="#777" stroke-width="5" stroke-dasharray="11 3 17 4 7 3 13 4" fill="none"/>
<path d="M1782,709 V1003 M1822,851 h80 v32 h-80" stroke="#262626" stroke-width="5.5" fill="none"/>
<circle cx="1644" cy="1071" r="11" fill="none" stroke="#666" stroke-width="2"/>
<path d="M1664,1061 h170" stroke="#858585" stroke-width="7" stroke-dasharray="16 4 26 5 10 4 34 5" fill="none"/>
<path d="M1660,1073 H1987" stroke="#999" stroke-width="2" fill="none"/>
<path d="M1666,1081 h22" stroke="#888" stroke-width="4" fill="none"/>
<rect x="306" y="1198" width="21" height="11" fill="#2a2a2a"/>
<path d="M305,1250 V1299 M329,1250 V1299 M255,1102 V1313 M368,1126 V1303 M234,1260 H406 M248,1114 H372" stroke="#6e6e6e" stroke-width="2.2" fill="none"/>
<path d="M394,1102 L349,1202 M370,1152 L322,1199 M244,1208 L313,1238 M375,1254 L345,1171 M389,1310 L298,1219" stroke="#8a8a8a" stroke-width="1.8" fill="none"/>
<path d="M394,1095 h26 v14 h-26Z M370,1145 h26 v14 h-26Z M157,1201 h26 v14 h-26Z M375,1247 h26 v14 h-26Z M389,1303 h26 v14 h-26Z" stroke="#666" stroke-width="2" fill="none"/>
<path d="M428,1102 h76 M404,1152 h100 M191,1208 h53 M409,1254 h95 M423,1310 h55" stroke="#777" stroke-width="5" stroke-dasharray="11 3 17 4 7 3 13 4" fill="none"/>
<path d="M248,1202 H386 M317,1202 V1250 M296,1179 h41 v24" stroke="#262626" stroke-width="5.5" fill="none"/>
<circle cx="169" cy="1356" r="11" fill="none" stroke="#666" stroke-width="2"/>
<path d="M189,1346 h211" stroke="#858585" stroke-width="7" stroke-dasharray="16 4 26 5 10 4 34 5" fill="none"/>
<path d="M185,1358 H479" stroke="#999" stroke-width="2" fill="none"/>
<path d="M191,1366 h22" stroke="#888" stroke-width="4" fill="none"/>
<rect x="756" y="1214" width="25" height="13" fill="#2a2a2a"/>
<path d="M735,1167 V1264 H802 V1167 M693,1112 V1313 M831,1135 V1304 M668,1282 H877 M685,1123 H835" stroke="#6e6e6e" stroke-width="2.2" fill="none"/>
<path d="M810,1112 L743,1223 M848,1167 L760,1222 M663,1212 L755,1232 M853,1257 L749,1197 M843,1308 L791,1208" stroke="#8a8a8a" stroke-width="1.8" fill="none"/>
<path d="M810,1105 h26 v14 h-26Z M848,1160 h26 v14 h-26Z M575,1205 h26 v14 h-26Z M853,1250 h26 v14 h-26Z M843,1301 h26 v14 h-26Z" stroke="#666" stroke-width="2" fill="none"/>
<path d="M844,1112 h120 M844,1123 h86 M882,1167 h82 M609,1212 h54 M887,1257 h77 M877,1308 h87" stroke="#777" stroke-width="5" stroke-dasharray="11 3 17 4 7 3 13 4" fill="none"/>
<path d="M727,1167 V1272 H810 V1167" stroke="#262626" stroke-width="5.5" fill="none"/>
<circle cx="564" cy="1356" r="11" fill="none" stroke="#666" stroke-width="2"/>
<path d="M584,1346 h200" stroke="#858585" stroke-width="7" stroke-dasharray="16 4 26 5 10 4 34 5" fill="none"/>
<path d="M580,1358 H935" stroke="#999" stroke-width="2" fill="none"/>
<path d="M586,1366 h22" stroke="#888" stroke-width="4" fill="none"/>
<rect x="1038" y="1146" width="39" height="162" fill="#bdbdbd"/>
<rect x="1052" y="1222" width="26" height="8" fill="#2a2a2a"/>
<path d="M1082,1150 L1143,1165 L1082,1180 L1143,1195 L1082,1210 L1143,1225 M986,1140 V1316 M1130,1160 V1308 M960,1267 H1177 M978,1150 H1134" stroke="#6e6e6e" stroke-width="2.2" fill="none"/>
<path d="M1142,1141 L1059,1248 M1158,1176 L1104,1208 M1005,1209 L1031,1207 M1163,1240 L1100,1237 M1137,1282 L1090,1202 M1011,1313 L1052,1217" stroke="#8a8a8a" stroke-width="1.8" fill="none"/>
<path d="M1142,1134 h26 v14 h-26Z M1158,1169 h26 v14 h-26Z M917,1202 h26 v14 h-26Z M1163,1233 h26 v14 h-26Z M1137,1275 h26 v14 h-26Z M917,1306 h26 v14 h-26Z" stroke="#666" stroke-width="2" fill="none"/>
<path d="M1176,1141 h98 M1176,1152 h69 M1192,1176 h66 M1192,1187 h44 M951,1209 h54 M1197,1240 h60 M1171,1282 h103 M1171,1293 h80 M951,1313 h60" stroke="#777" stroke-width="5" stroke-dasharray="11 3 17 4 7 3 13 4" fill="none"/>
<path d="M1038,1146 V1308 M1078,1225 h78 v13 h-78" stroke="#262626" stroke-width="5.5" fill="none"/>
<circle cx="929" cy="1356" r="11" fill="none" stroke="#666" stroke-width="2"/>
<path d="M949,1346 h155" stroke="#858585" stroke-width="7" stroke-dasharray="16 4 26 5 10 4 34 5" fill="none"/>
<path d="M945,1358 H1249" stroke="#999" stroke-width="2" fill="none"/>
<path d="M951,1366 h22" stroke="#888" stroke-width="4" fill="none"/>
<rect x="1414" y="1203" width="18" height="14" fill="#2a2a2a"/>
<path d="M1401,1152 V1258 H1445 V1152 M1370,1112 V1313 M1468,1135 V1304 M1352,1276 H1501 M1364,1123 H1471" stroke="#6e6e6e" stroke-width="2.2" fill="none"/>
<path d="M1488,1113 L1410,1228 M1494,1150 L1428,1221 M1391,1190 L1414,1198 M1484,1231 L1434,1197 M1480,1269 L1438,1248 M1395,1307 L1409,1237" stroke="#8a8a8a" stroke-width="1.8" fill="none"/>
<path d="M1488,1106 h26 v14 h-26Z M1494,1143 h26 v14 h-26Z M1297,1183 h26 v14 h-26Z M1484,1224 h26 v14 h-26Z M1480,1262 h26 v14 h-26Z M1297,1300 h26 v14 h-26Z" stroke="#666" stroke-width="2" fill="none"/>
<path d="M1522,1113 h82 M1528,1150 h72 M1528,1161 h50 M1331,1190 h60 M1518,1231 h83 M1518,1242 h35 M1514,1269 h90 M1331,1307 h64" stroke="#777" stroke-width="5" stroke-dasharray="11 3 17 4 7 3 13 4" fill="none"/>
<path d="M1393,1152 V1266 H1453 V1152" stroke="#262626" stroke-width="5.5" fill="none"/>
<circle cx="1309" cy="1356" r="11" fill="none" stroke="#666" stroke-width="2"/>
<path d="M1329,1346 h186" stroke="#858585" stroke-width="7" stroke-dasharray="16 4 26 5 10 4 34 5" fill="none"/>
<path d="M1325,1358 H1582" stroke="#999" stroke-width="2" fill="none"/>
<path d="M1331,1366 h22" stroke="#888" stroke-width="4" fill="none"/>
<rect x="1778" y="1128" width="30" height="178" fill="#bdbdbd"/>
<rect x="1788" y="1231" width="20" height="12" fill="#2a2a2a"/>
<path d="M1812,1132 L1858,1153 L1812,1174 L1858,1195 L1812,1215 L1858,1236 M1738,1121 V1314 M1848,1143 V1305 M1718,1295 H1885 M1732,1132 H1852" stroke="#6e6e6e" stroke-width="2.2" fill="none"/>
<path d="M1878,1126 L1779,1270 M1870,1148 L1803,1259 M1738,1177 L1788,1209 M1880,1203 L1787,1230 M1884,1227 L1831,1273 M1722,1254 L1786,1267 M1889,1281 L1820,1220 M1873,1308 L1788,1215" stroke="#8a8a8a" stroke-width="1.8" fill="none"/>
<path d="M1878,1119 h26 v14 h-26Z M1870,1141 h26 v14 h-26Z M1632,1170 h26 v14 h-26Z M1880,1196 h26 v14 h-26Z M1884,1220 h26 v14 h-26Z M1632,1247 h26 v14 h-26Z M1889,1274 h26 v14 h-26Z M1873,1301 h26 v14 h-26Z" stroke="#666" stroke-width="2" fill="none"/>
<path d="M1912,1126 h112 M1912,1137 h67 M1904,1148 h100 M1904,1159 h75 M1666,1177 h72 M1914,1203 h98 M1918,1227 h66 M1918,1238 h38 M1666,1254 h56 M1923,1281 h92 M1907,1308 h77 M1907,1319 h44" stroke="#777" stroke-width="5" stroke-dasharray="11 3 17 4 7 3 13 4" fill="none"/>
<path d="M1778,1128 V1305 M1808,1236 h60 v20 h-60" stroke="#262626" stroke-width="5.5" fill="none"/>
<circle cx="1644" cy="1356" r="11" fill="none" stroke="#666" stroke-width="2"/>
<path d="M1664,1346 h180" stroke="#858585" stroke-width="7" stroke-dasharray="16 4 26 5 10 4 34 5" fill="none"/>
<path d="M1660,1358 H1997" stroke="#999" stroke-width="2" fill="none"/>
<path d="M1666,1366 h22" stroke="#888" stroke-width="4" fill="none"/>
<path d="M1380,1400 h270 M1380,1412 h250 M1380,1436 h260 M1380,1448 h200 M1700,1400 h280 M1700,1410 h285 M1700,1420 h270 M1700,1430 h288 M1700,1440 h280 M1700,1450 h285" stroke="#777" stroke-width="5" fill="none"/>
</g>
<g transform="translate(610,920) scale(0.24264)">
<path d="M105,290 C111,282 119,257 140,245 C161,233 200,226 230,220 C260,214 298,216 320,212 C342,208 356,205 362,195 C368,185 350,165 355,150 C360,135 373,115 390,105 C407,95 432,88 455,88 C478,88 508,98 525,108 C542,118 541,138 560,148 C579,158 613,160 640,165 C667,170 693,168 720,178 C747,188 779,204 800,222 C821,240 840,267 845,285 C850,303 826,317 832,328 C838,339 859,346 880,350 C901,354 935,349 960,355 C985,361 1013,373 1030,385 C1047,397 1055,418 1060,425 L1048,900 L1020,1490 L160,1490 L158,1425 L128,850 Z" fill="url(#gb)"/>
<path d="M105,290 C109,278 119,257 140,245 C161,233 200,226 230,220 C260,214 298,216 320,212 C342,208 356,205 362,195 C368,185 350,165 355,150 C360,135 373,115 390,105 C407,95 432,88 455,88 C478,88 508,98 525,108 C542,118 541,138 560,148 C579,158 613,160 640,165 C667,170 693,168 720,178 C747,188 779,204 800,222 C821,240 840,267 845,285 C850,303 826,317 832,328 C838,339 859,346 880,350 C901,354 935,349 960,355 C985,361 1013,373 1030,385 C1047,397 1058,411 1060,425 C1062,439 1057,457 1045,468 C1033,479 1009,487 990,492 C971,497 953,502 930,500 C907,498 875,487 850,482 C825,477 800,468 780,468 C760,468 739,472 730,480 C721,488 721,502 725,515 C729,528 750,546 752,560 C754,574 747,589 735,600 C723,611 702,621 680,628 C658,635 627,641 600,640 C573,639 543,631 520,620 C497,609 474,592 462,575 C450,558 444,540 445,520 C446,500 463,472 470,455 C477,438 490,433 488,420 C486,407 470,389 455,378 C440,367 421,358 400,352 C379,346 357,344 330,345 C303,346 268,356 240,356 C212,356 181,352 160,345 C139,338 124,324 115,315 C106,306 101,302 105,290Z" fill="url(#gi)" stroke="#4a4a50" stroke-width="21"/>
<path d="M105,290 C109,278 119,257 140,245 C161,233 200,226 230,220 C260,214 298,216 320,212 C342,208 356,205 362,195 C368,185 350,165 355,150 C360,135 373,115 390,105 C407,95 432,88 455,88 C478,88 508,98 525,108 C542,118 541,138 560,148 C579,158 613,160 640,165 C667,170 693,168 720,178 C747,188 779,204 800,222 C821,240 840,267 845,285 C850,303 826,317 832,328 C838,339 859,346 880,350 C901,354 935,349 960,355 C985,361 1013,373 1030,385 C1047,397 1058,411 1060,425 C1062,439 1057,457 1045,468 C1033,479 1009,487 990,492 C971,497 953,502 930,500 C907,498 875,487 850,482 C825,477 800,468 780,468 C760,468 739,472 730,480 C721,488 721,502 725,515 C729,528 750,546 752,560 C754,574 747,589 735,600 C723,611 702,621 680,628 C658,635 627,641 600,640 C573,639 543,631 520,620 C497,609 474,592 462,575 C450,558 444,540 445,520 C446,500 463,472 470,455 C477,438 490,433 488,420 C486,407 470,389 455,378 C440,367 421,358 400,352 C379,346 357,344 330,345 C303,346 268,356 240,356 C212,356 181,352 160,345 C139,338 124,324 115,315 C106,306 101,302 105,290Z" fill="none" stroke="#ffffff" stroke-width="15"/>
<path d="M445,540 L478,1484 M755,560 L715,1484 M850,482 L880,1484 M810,330 L808,450 M395,225 L405,340 M700,585 L712,470" stroke="#2a2a30" stroke-width="3" fill="none"/>
</g>
<g transform="translate(1040,1090) scale(0.07411)">
<polygon points="285,160 300,200 700,400 1100,600 1240,640 1240,705 900,800 560,885 560,1040 430,1062 290,960" fill="#f4f4f6"/>
<clipPath id="ct"><polygon points="285,160 300,200 700,400 1100,600 1240,640 1240,705 900,800 560,885 560,1040 430,1062 290,960"/></clipPath>
<path d="M369,210 L363,972 M453,250 L447,944 M537,290 L531,916 M621,330 L615,872 M705,370 L699,844 M789,410 L783,816 M873,450 L867,788 M957,490 L951,760 M1041,530 L1035,732 M1125,570 L1119,704 M1209,610 L1203,676 M288,260 L1240,654 M288,360 L1240,668 M288,460 L1240,682 M288,560 L1240,696 M288,660 L1240,710 M288,760 L860,880 M288,860 L710,950 M288,960 L560,1020" stroke="#9b9b9f" stroke-width="13" fill="none" clip-path="url(#ct)"/>
<polygon points="285,160 300,200 700,400 1100,600 1240,640 1240,705 900,800 560,885 560,1040 430,1062 290,960" fill="none" stroke="#8c8c90" stroke-width="10"/>
<path d="M285,150 C298,137 334,123 380,125 C426,127 490,141 560,160 C630,179 727,216 800,240 C873,264 925,305 1000,305 C1075,305 1170,257 1250,240 C1330,223 1424,206 1480,205 C1536,204 1565,216 1585,235 C1605,254 1598,279 1600,320 C1602,361 1582,448 1597,480 C1612,512 1706,483 1690,510 C1674,537 1572,603 1500,640 C1428,677 1327,735 1260,730 C1193,725 1193,664 1100,610 C1007,556 833,472 700,405 C567,338 369,248 300,205 C231,162 272,163 285,150Z" fill="#858589"/>
<polygon points="520,235 900,335 1250,292 1455,262 1452,520 1600,565 1300,660 1050,545 750,400" fill="#b2b2b5"/>
<polygon points="1455,262 1580,240 1597,480 1452,520" fill="#7c7c80"/>
<polygon points="140,1090 250,1000 420,1062 350,1182 150,1160" fill="#9e9ea0"/>
<polygon points="195,800 275,770 290,960 250,1000 215,930" fill="#8a8a8c"/>
<ellipse cx="400" cy="1340" rx="92" ry="80" fill="#b8966e"/>
<polygon points="510,1040 552,1030 552,1260 510,1250" fill="#58585c"/>
</g>
<g transform="translate(1040,1020) scale(0.16847)">
<polygon points="228,1325 475,1415 2300,645 2300,600 475,1375" fill="#8a8a8c"/>
<polygon points="295,1030 475,1098 2305,298 2305,625 475,1395 295,1300" fill="#cfcfd5"/>
<polygon points="1030,880 1160,820 1160,940 1030,1000" fill="#fbfbfb"/>
<polygon points="1190,810 1290,765 1290,850 1190,900" fill="#fbfbfb"/>
<polygon points="1500,690 1610,640 1610,720 1500,770" fill="#fbfbfb"/>
<polygon points="1640,630 1750,580 1750,660 1640,710" fill="#fbfbfb"/>
<polygon points="1780,565 1890,515 1890,600 1780,650" fill="#fbfbfb"/>
<polygon points="1920,470 2190,350 2190,440 1920,560" fill="#fbfbfb"/>
<polygon points="1030,1020 1160,965 1160,1105 1030,1160" fill="#fbfbfb"/>
<polygon points="1560,830 1600,812 1600,900 1560,920" fill="#fbfbfb"/>
<polygon points="1640,790 1750,742 1750,835 1640,885" fill="#fbfbfb"/>
<polygon points="1880,690 1970,650 1970,740 1880,780" fill="#fbfbfb"/>
<polygon points="2160,560 2260,515 2260,610 2160,655" fill="#fbfbfb"/>
<polygon points="1170,830 1290,860 1290,900 1170,930" fill="#8f8f96"/>
<polygon points="1420,720 1600,690 1600,800 1420,830" fill="#8f8f96"/>
<polygon points="1620,650 1750,700 1750,760 1620,710" fill="#8f8f96"/>
<polygon points="1760,590 1890,625 1890,650 1760,690" fill="#8f8f96"/>
<polygon points="1170,1000 1560,830 1560,935 1170,1105" fill="#8f8f96"/>
<polygon points="1600,840 1750,870 1750,830 1600,905" fill="#8f8f96"/>
<polygon points="1760,760 1880,800 1880,770 1760,830" fill="#8f8f96"/>
<polygon points="1910,475 2190,445 2190,490 1910,600" fill="#8f8f96"/>
<polygon points="1290,740 1330,722 1330,830 1290,850" fill="#d9b48c"/>
<polygon points="610,1065 690,1035 690,1110 610,1140" fill="#d9b48c"/>
<polygon points="770,990 830,965 830,1040 770,1065" fill="#d9b48c"/>
<polygon points="480,1110 545,1085 545,1170 480,1195" fill="#d9b48c"/>
<polygon points="2225,345 2290,320 2290,430 2225,455" fill="#d9b48c"/>
<polygon points="2050,610 2130,575 2130,680 2050,715" fill="#d9b48c"/>
<polygon points="830,1110 900,1085 900,1200 830,1225" fill="#d9b48c"/>
<polygon points="300,1080 460,1120 460,1200 300,1150" fill="#d9b48c"/>
<polygon points="500,1285 780,1165 900,1200 620,1330" fill="#4a4238"/>
<polygon points="300,1320 470,1290 560,1330 400,1375" fill="#4a4238"/>
<polygon points="1600,830 1640,870 1640,900 1600,905" fill="#4a4238"/>
<polygon points="1860,735 1980,740 1980,760 1860,815" fill="#4a4238"/>
<polygon points="240,872 1790,198 1830,195 1832,292 250,962" fill="#8d8d91"/>
<polygon points="245,958 475,1060 2305,265 2290,205 1832,292" fill="#bebec2"/>
<polygon points="1775,145 2240,90 2312,205 2300,262 1832,292 1832,195 1775,200" fill="#a4a4a8"/>
<polygon points="1832,200 2245,150 2295,215 1840,285" fill="#b9b9bd"/>
<path d="M390,898 v-80 M530,837 v-80 M670,777 v-80 M810,716 v-80 M950,656 v-80 M1090,595 v-80 M1230,535 v-80 M1370,474 v-80 M1510,414 v-80 M1650,353 v-80" stroke="#6e6e72" stroke-width="14" fill="none"/>
<polygon points="232,965 475,1062 2308,265 2308,302 475,1100 232,1002" fill="#1b1b9e"/>
<polygon points="300,1158 475,1235 895,1058 895,1092 475,1272 300,1195" fill="#1b1b9e"/>
<polygon points="1020,1000 2305,468 2305,500 1020,1035" fill="#1b1b9e"/>
<polygon points="225,985 295,1015 295,1290 225,1262" fill="#1a1ab4"/>
<polygon points="225,1312 400,1380 400,1402 300,1375 225,1350" fill="#1a1ab4"/>
<polygon points="2290,210 2318,210 2318,640 2290,640" fill="#2a2a8a"/>
<polygon points="925,895 1020,870 1020,1235 925,1262" fill="#78685f"/>
<polygon points="955,920 1000,908 1000,1010 955,1022" fill="#9a8f8a"/>
</g>
<g transform="translate(1640,950) scale(0.22243)">
<path d="M135,1175 A370,215 0 0 1 875,1175" fill="none" stroke="#3c3c3c" stroke-width="35"/>
<path d="M135,1175 A370,215 0 0 1 875,1175" fill="none" stroke="#b8b8b8" stroke-width="27"/>
<line x1="418" y1="590" x2="203" y2="1270" stroke="#3a3a3a" stroke-width="32"/><line x1="418" y1="590" x2="203" y2="1270" stroke="#b2b2b2" stroke-width="26"/><line x1="416" y1="590" x2="201" y2="1270" stroke="#f4f4f4" stroke-width="11"/>
<line x1="602" y1="590" x2="812" y2="1270" stroke="#3a3a3a" stroke-width="32"/><line x1="602" y1="590" x2="812" y2="1270" stroke="#b2b2b2" stroke-width="26"/><line x1="600" y1="590" x2="810" y2="1270" stroke="#f4f4f4" stroke-width="11"/>
<line x1="365" y1="485" x2="430" y2="600" stroke="#3a3a3a" stroke-width="28"/><line x1="365" y1="485" x2="430" y2="600" stroke="#b2b2b2" stroke-width="22"/><line x1="363" y1="485" x2="428" y2="600" stroke="#f4f4f4" stroke-width="9"/>
<line x1="650" y1="485" x2="585" y2="600" stroke="#3a3a3a" stroke-width="28"/><line x1="650" y1="485" x2="585" y2="600" stroke="#b2b2b2" stroke-width="22"/><line x1="648" y1="485" x2="583" y2="600" stroke="#f4f4f4" stroke-width="9"/>
<ellipse cx="500" cy="560" rx="70" ry="45" fill="none" stroke="#3c3c3c" stroke-width="25"/>
<ellipse cx="500" cy="560" rx="70" ry="45" fill="none" stroke="#d8d8d8" stroke-width="17"/>
<line x1="432" y1="600" x2="238" y2="1484" stroke="#3a3a3a" stroke-width="32"/><line x1="432" y1="600" x2="238" y2="1484" stroke="#b2b2b2" stroke-width="26"/><line x1="430" y1="600" x2="236" y2="1484" stroke="#f4f4f4" stroke-width="11"/>
<line x1="580" y1="600" x2="772" y2="1484" stroke="#3a3a3a" stroke-width="32"/><line x1="580" y1="600" x2="772" y2="1484" stroke="#b2b2b2" stroke-width="26"/><line x1="578" y1="600" x2="770" y2="1484" stroke="#f4f4f4" stroke-width="11"/>
<path d="M135,1175 A370,215 0 0 0 875,1175" fill="none" stroke="#3c3c3c" stroke-width="35"/>
<path d="M135,1175 A370,215 0 0 0 875,1175" fill="none" stroke="#b8b8b8" stroke-width="27"/>
<path d="M138,1180 A367,212 0 0 0 872,1180" fill="none" stroke="#f6f6f6" stroke-width="11"/><path d="M138,1170 A367,212 0 0 1 872,1170" fill="none" stroke="#f6f6f6" stroke-width="10"/>
<path d="M208,275 V325 A297,172 0 0 0 802,325 V275Z" fill="#3a2e22"/>
<ellipse cx="505" cy="275" rx="297" ry="172" fill="#6e6448" stroke="#2a2218" stroke-width="3"/>
</g>
<g transform="translate(2100,920) scale(0.24265)">
<polygon points="570,705 1235,325 1235,1425 1130,1490 570,1490" fill="#c0a07a" stroke="#2a2018" stroke-width="4"/>
<polygon points="75,422 570,705 570,1490 155,1490 75,1410" fill="#524333" stroke="#2a2018" stroke-width="4"/>
<polygon points="545,705 572,705 572,1490 545,1490" fill="#c0a07a" stroke="#2a2018" stroke-width="2"/>
<polygon points="75,422 735,42 1235,325 570,705" fill="#fbd09a" stroke="#2a2018" stroke-width="4"/>
<polygon points="125,425 735,68 735,590 572,680" fill="#c0a07a"/>
<polygon points="735,68 1185,322 735,590" fill="#524333"/>
<polygon points="125,425 735,68 1185,322 572,680" fill="none" stroke="#2a2018" stroke-width="3"/>
<line x1="735" y1="68" x2="735" y2="590" stroke="#2a2018" stroke-width="3"/>
<path d="M90,462 L545,720 M90,615 L545,873 M90,805 L545,1063 M90,995 L545,1253" stroke="#2a2018" stroke-width="14" fill="none"/>
<path d="M90,462 L545,720 M90,615 L545,873 M90,805 L545,1063 M90,995 L545,1253" stroke="#fbd09a" stroke-width="8" fill="none"/>
<path d="M250,610 L357,671 M250,760 L357,821 M250,950 L357,1011 M250,1143 L357,1204" stroke="#151515" stroke-width="24" stroke-linecap="round" fill="none"/>
<line x1="960" y1="1490" x2="1235" y2="1320" stroke="#2a2018" stroke-width="3"/>
</g>
<g transform="translate(2570,920) scale(0.24265)">
<polygon points="920,855 1495,535 1495,1490 920,1490" fill="#c0a07a" stroke="#2a2018" stroke-width="4"/>
<polygon points="62,368 920,855 920,1490 480,1490 62,1220" fill="#524333" stroke="#2a2018" stroke-width="4"/>
<polygon points="895,865 920,855 920,1490 895,1490" fill="#c0a07a" stroke="#2a2018" stroke-width="2"/>
<polygon points="62,368 630,42 1495,535 920,855" fill="#fbd09a" stroke="#2a2018" stroke-width="4"/>
<polygon points="105,370 630,68 630,666" fill="#c0a07a"/>
<polygon points="630,68 1450,535 920,830 630,666" fill="#524333"/>
<polygon points="105,370 630,68 1450,535 920,830" fill="none" stroke="#2a2018" stroke-width="3"/>
<line x1="630" y1="68" x2="630" y2="666" stroke="#2a2018" stroke-width="3"/>
<path d="M70,405 L480,640 M70,522 L480,748 M70,538 L480,768 M486,640 L486,1455 M495,648 L895,880 M495,762 L895,992 M495,778 L895,1008" stroke="#2a2018" stroke-width="12" fill="none"/>
<path d="M70,405 L480,640 M70,522 L480,748 M70,538 L480,768 M486,640 L486,1455 M495,648 L895,880 M495,762 L895,992 M495,778 L895,1008" stroke="#fbd09a" stroke-width="6" fill="none"/>
<path d="M224,535 L312,588 M636,773 L724,826 M435,798 V902 M512,845 V948" stroke="#151515" stroke-width="22" stroke-linecap="round" fill="none"/>
<line x1="1340" y1="1490" x2="1495" y2="1388" stroke="#2a2018" stroke-width="3"/>
<polygon points="130,1262 480,1465 480,1490 130,1285" fill="#3a2e22"/>
<path d="M1210,860 H1495 V1275 H1210 Q1198,1275 1198,1263 V872 Q1198,860 1210,860Z" fill="#ffffff" opacity="0.45"/>
<path d="M1402,997 L1475,1072 H1430 V1138 H1376 V1072 H1328 Z" fill="none" stroke="#cbbcaa" stroke-width="9"/>
</g>
<rect x="1889.0" y="367.9" width="63" height="63" rx="7" fill="#e6e6e6" opacity="0.8"/>
<rect x="1890.5" y="369.4" width="60" height="60" rx="5.5" fill="#979797" opacity="0.96"/>
<rect x="1909.1" y="385.0" width="3.6" height="29.2" rx="1.2" fill="#fdfdfd"/>
<path d="M1912.5,387.6 q6.2,-1.8 11.4,1 q5,2.4 9.9,-1.4 v12.7 q-4.9,3.9 -9.9,1.1 q-5.2,-3 -11.4,1.6 Z" fill="#fdfdfd"/>
<rect x="2391.3" y="947.7" width="63" height="63" rx="7" fill="#e6e6e6" opacity="0.8"/>
<rect x="2392.8" y="949.2" width="60" height="60" rx="5.5" fill="#979797" opacity="0.96"/>
<rect x="2411.4" y="964.8000000000001" width="3.6" height="29.2" rx="1.2" fill="#fdfdfd"/>
<path d="M2414.8,967.4000000000001 q6.2,-1.8 11.4,1 q5,2.4 9.9,-1.4 v12.7 q-4.9,3.9 -9.9,1.1 q-5.2,-3 -11.4,1.6 Z" fill="#fdfdfd"/>
</svg>
<div class="a" style="left:0;top:1279px;width:3011px;height:80px;background:#00a3a5;"></div>
<div class="t" style="left:56.20px;top:1305.40px;font-size:30px;line-height:30px;color:#ffffff;transform:scaleX(0.9250);">Filters</div>
<svg style="left:0;top:1279px" width="3011" height="80" viewBox="0 1279 3011 80"><g fill="#ffffff">
<rect x="250" y="1307.1" width="21.2" height="3.8"/>
<rect x="250" y="1317.2" width="25" height="3.8"/>
<path d="M274.2,1313.8 L281,1319.1 L274.2,1324.2 Z"/>
<rect x="250" y="1327.1" width="21.2" height="3.8"/>
<rect x="333.2" y="1304.2" width="3.5" height="29.2"/>
</g>
<path d="M335,1307.6 Q341,1304.6 346.5,1307.6 Q352,1310.4 356.2,1307.2 L356.2,1319.6 Q352,1322.8 346.5,1320 Q341,1317 335,1320" fill="none" stroke="#ffffff" stroke-width="3.2"/>
<g fill="#ffffff">
<rect x="2909" y="1304" width="3.2" height="17"/>
<path d="M2903.8,1316.5 L2917.4,1316.5 L2910.6,1324.6 Z"/>
<rect x="2897.4" y="1329.6" width="26.6" height="3.4"/>
</g>
</svg>

<div class="t" style="left:61.00px;top:1388.81px;font-size:30px;line-height:30px;color:#1c1c1c;transform:scaleX(0.9624);">Element Type</div>
<div class="t" style="left:61.00px;top:1474.61px;font-size:30px;line-height:30px;color:#1c1c1c;transform:scaleX(0.9679);">Revit Category</div>
<div class="pill" style="left:293.0px;top:1375px;width:239.0px;"></div>
<div class="t" style="left:321.30px;top:1391.90px;font-size:30px;line-height:30px;color:#363636;transform:scaleX(1.0084);">Drafting View</div>
<div class="pill" style="left:546.0px;top:1375px;width:143.0px;"></div>
<div class="t" style="left:574.30px;top:1391.90px;font-size:30px;line-height:30px;color:#363636;transform:scaleX(0.9448);">Family</div>
<div class="pill" style="left:703.0px;top:1375px;width:142.0px;"></div>
<div class="t" style="left:731.30px;top:1391.90px;font-size:30px;line-height:30px;color:#363636;transform:scaleX(0.9895);">Group</div>
<div class="pill" style="left:859.0px;top:1375px;width:157.0px;"></div>
<div class="t" style="left:887.30px;top:1391.90px;font-size:30px;line-height:30px;color:#363636;transform:scaleX(0.9738);">Legend</div>
<div class="pill" style="left:1030.0px;top:1375px;width:178.5px;"></div>
<div class="t" style="left:1058.30px;top:1391.90px;font-size:30px;line-height:30px;color:#363636;transform:scaleX(0.9510);">Schedule</div>
<div class="pill" style="left:1223.0px;top:1375px;width:132.5px;"></div>
<div class="t" style="left:1251.30px;top:1391.90px;font-size:30px;line-height:30px;color:#363636;transform:scaleX(0.9314);">Sheet</div>
<div class="pill" style="left:1370.0px;top:1375px;width:245.0px;"></div>
<div class="t" style="left:1398.30px;top:1391.90px;font-size:30px;line-height:30px;color:#363636;transform:scaleX(0.9428);">System Family</div>
<div class="pill" style="left:293.0px;top:1461px;width:177.0px;"></div>
<div class="t" style="left:321.30px;top:1477.90px;font-size:30px;line-height:30px;color:#363636;transform:scaleX(0.9400);">Balusters</div>
<div class="pill" style="left:484.0px;top:1461px;width:242.5px;"></div>
<div class="t" style="left:512.30px;top:1477.90px;font-size:30px;line-height:30px;color:#363636;transform:scaleX(0.9708);">Callout Heads</div>
<div class="pill" style="left:741.0px;top:1461px;width:185.5px;"></div>
<div class="t" style="left:769.30px;top:1477.90px;font-size:30px;line-height:30px;color:#363636;transform:scaleX(0.9438);">Casework</div>
<div class="pill" style="left:940.5px;top:1461px;width:162.0px;"></div>
<div class="t" style="left:968.80px;top:1477.90px;font-size:30px;line-height:30px;color:#363636;transform:scaleX(0.9602);">Ceilings</div>
<div class="pill" style="left:1117.0px;top:1461px;width:174.5px;"></div>
<div class="t" style="left:1145.30px;top:1477.90px;font-size:30px;line-height:30px;color:#363636;transform:scaleX(0.9715);">Columns</div>
<div class="pill" style="left:1306.0px;top:1461px;width:215.5px;"></div>
<div class="t" style="left:1334.30px;top:1477.90px;font-size:30px;line-height:30px;color:#363636;transform:scaleX(0.9850);">Detail Items</div>
<div class="pill" style="left:1536.0px;top:1461px;width:192.0px;"></div>
<div class="t" style="left:1564.30px;top:1477.90px;font-size:30px;line-height:30px;color:#363636;transform:scaleX(0.9725);">Door Tags</div>
<div class="pill" style="left:1742.0px;top:1461px;width:138.0px;"></div>
<div class="t" style="left:1770.30px;top:1477.90px;font-size:30px;line-height:30px;color:#363636;transform:scaleX(0.9812);">Doors</div>
<div class="pill" style="left:1894.0px;top:1461px;width:326.5px;"></div>
<div class="t" style="left:1922.30px;top:1477.90px;font-size:30px;line-height:30px;color:#363636;transform:scaleX(0.9762);">Electrical Equipment</div>
<div class="pill" style="left:2234.5px;top:1461px;width:267.0px;"></div>
<div class="t" style="left:2262.80px;top:1477.90px;font-size:30px;line-height:30px;color:#363636;transform:scaleX(0.9725);">Elevation Marks</div>
<div class="pill" style="left:2515.5px;top:1461px;width:195.0px;"></div>
<div class="t" style="left:2543.80px;top:1477.90px;font-size:30px;line-height:30px;color:#363636;transform:scaleX(0.9783);">Entourage</div>
<div class="pill" style="left:2724.5px;top:1461px;width:139.0px;"></div>
<div class="t" style="left:2752.80px;top:1477.90px;font-size:30px;line-height:30px;color:#363636;transform:scaleX(0.9535);">Floors</div>
<div class="pill" style="left:293.0px;top:1547px;width:179.0px;"></div>
<div class="t" style="left:321.30px;top:1563.90px;font-size:30px;line-height:30px;color:#363636;transform:scaleX(0.9958);">Furniture</div>
<div class="pill" style="left:486.0px;top:1547px;width:329.0px;"></div>
<div class="t" style="left:514.30px;top:1563.90px;font-size:30px;line-height:30px;color:#363636;">Generic Annotations</div>
<div class="pill" style="left:829.0px;top:1547px;width:265.5px;"></div>
<div class="t" style="left:857.30px;top:1563.90px;font-size:30px;line-height:30px;color:#363636;transform:scaleX(0.9804);">Generic Models</div>
<div class="pill" style="left:1109.0px;top:1547px;width:205.5px;"></div>
<div class="t" style="left:1137.30px;top:1563.90px;font-size:30px;line-height:30px;color:#363636;transform:scaleX(0.9621);">Grid Heads</div>
<div class="pill" style="left:1329.0px;top:1547px;width:277.0px;"></div>
<div class="t" style="left:1357.30px;top:1563.90px;font-size:30px;line-height:30px;color:#363636;transform:scaleX(0.9881);">Lighting Fixtures</div>
<div class="pill" style="left:1620.0px;top:1547px;width:359.5px;"></div>
<div class="t" style="left:1648.30px;top:1563.90px;font-size:30px;line-height:30px;color:#363636;transform:scaleX(0.9885);">Mechanical Equipment</div>
<div class="pill" style="left:1994.0px;top:1547px;width:166.5px;"></div>
<div class="t" style="left:2022.30px;top:1563.90px;font-size:30px;line-height:30px;color:#363636;transform:scaleX(0.9873);">Planting</div>
<div class="pill" style="left:2175.0px;top:1547px;width:233.5px;"></div>
<div class="t" style="left:2203.30px;top:1563.90px;font-size:30px;line-height:30px;color:#363636;transform:scaleX(0.9687);">Planting Tags</div>
<div class="pill" style="left:2422.5px;top:1547px;width:295.0px;"></div>
<div class="t" style="left:2450.80px;top:1563.90px;font-size:30px;line-height:30px;color:#363636;transform:scaleX(0.9807);">Plumbing Fixtures</div>
<div class="pill" style="left:2731.5px;top:1547px;width:133.0px;"></div>
<div class="t" style="left:2759.80px;top:1563.90px;font-size:30px;line-height:30px;color:#363636;transform:scaleX(0.9378);">Roofs</div>
<div class="pill" style="left:293.0px;top:1633px;width:245.0px;"></div>
<div class="t" style="left:321.30px;top:1649.90px;font-size:30px;line-height:30px;color:#363636;transform:scaleX(0.9757);">Section Marks</div>
<div class="pill" style="left:552.0px;top:1633px;width:108.0px;"></div>
<div class="t" style="left:580.30px;top:1649.90px;font-size:30px;line-height:30px;color:#363636;transform:scaleX(0.9372);">Site</div>
<div class="pill" style="left:674.0px;top:1633px;width:327.5px;"></div>
<div class="t" style="left:702.30px;top:1649.90px;font-size:30px;line-height:30px;color:#363636;transform:scaleX(0.9799);">Specialty Equipment</div>
<div class="pill" style="left:1016.0px;top:1633px;width:366.5px;"></div>
<div class="t" style="left:1044.30px;top:1649.90px;font-size:30px;line-height:30px;color:#363636;transform:scaleX(0.9688);">Spot Elevation Symbols</div>
<div class="pill" style="left:1397.0px;top:1633px;width:310.0px;"></div>
<div class="t" style="left:1425.30px;top:1649.90px;font-size:30px;line-height:30px;color:#363636;transform:scaleX(0.9819);">Structural Columns</div>
<div class="pill" style="left:1721.0px;top:1633px;width:357.5px;"></div>
<div class="t" style="left:1749.30px;top:1649.90px;font-size:30px;line-height:30px;color:#363636;transform:scaleX(0.9872);">Structural Foundations</div>
<div class="pill" style="left:2093.0px;top:1633px;width:177.5px;"></div>
<div class="t" style="left:2121.30px;top:1649.90px;font-size:30px;line-height:30px;color:#363636;transform:scaleX(0.9823);">Supports</div>
<div class="pill" style="left:2284.5px;top:1633px;width:128.0px;"></div>
<div class="t" style="left:2312.80px;top:1649.90px;font-size:30px;line-height:30px;color:#363636;transform:scaleX(0.9481);">Walls</div>
<div class="pill" style="left:2427.0px;top:1633px;width:180.5px;"></div>
<div class="t" style="left:2455.30px;top:1649.90px;font-size:30px;line-height:30px;color:#363636;transform:scaleX(0.9938);">Windows</div>
<div class="a" style="left:0;top:1706px;width:3011px;height:2px;background:#d8d8d8;"></div>
<div class="t" style="left:55.00px;top:1728.81px;font-size:30px;line-height:30px;color:#555555;transform:scaleX(0.9292);">Search Results: 326</div>
<svg style="left:0;top:1708px" width="3013" height="78" viewBox="0 1708 3013 78">
<path d="M2791,1710 H2861 Q2864,1710 2864,1713 V1786 H2788 V1713 Q2788,1710 2791,1710 Z" fill="#e6e6e6"/>
<rect x="2456.2" y="1746.1" width="224.8" height="1.9" rx="1" fill="#d6d6d6"/>
<circle cx="2590.6" cy="1747.3" r="12.6" fill="#d6d6d6"/>
<g fill="#d9d9d9">
<rect x="2724.3" y="1733.2" width="35.5" height="4.4" rx="1"/>
<rect x="2724.3" y="1741.7" width="35.5" height="4.4" rx="1"/>
<rect x="2724.3" y="1750" width="35.5" height="4.4" rx="1"/>
<rect x="2724.3" y="1758.4" width="35.5" height="4.4" rx="1"/>
<rect x="2900.7" y="1730.9" width="19.7" height="31.8" rx="1"/>
<rect x="2889.8" y="1735.3" width="8.6" height="23.2" rx="1"/>
<rect x="2923.2" y="1735.3" width="7.7" height="23.2" rx="1"/>
</g>
<g fill="#4f4f4f">
<rect x="2807.2" y="1729" width="16.3" height="16.5"/><rect x="2828" y="1729" width="16.5" height="16.5"/>
<rect x="2807.2" y="1750" width="16.3" height="16.5"/><rect x="2828" y="1750" width="16.5" height="16.5"/>
</g>
</svg>

<div class="a" style="left:0;top:1785px;width:3098px;height:55px;background:#3a3a3a;"></div>
<div class="a" style="left:2911px;top:1807px;width:121px;height:40px;box-sizing:border-box;background:#a9a9a9;border:2px solid #7e7e7e;"></div>
<div class="t" style="left:2926.40px;top:1828.20px;font-size:30px;line-height:30px;color:#555555;transform:scaleX(0.9096);">Record</div>
<div class="a" style="left:3015px;top:94px;width:2px;height:1691px;background:#d4d4d4;"></div>
<div class="a" style="left:3017px;top:364px;width:81px;height:2px;background:#d8d8d8;"></div>
<svg style="left:3017px;top:94px" width="81" height="1691" viewBox="3017 94 81 1691">
<rect x="3048" y="145.3" width="36.4" height="36.3" rx="4.5" fill="none" stroke="#d6d6d6" stroke-width="4.1"/>
<path d="M3054,174.8 L3060.2,166.8 L3063.9,171.2 L3070.3,163.8 L3078.2,174.8 Z" fill="#d6d6d6"/>
<path d="M3050,262.3 H3082.7 Q3087,262.3 3087,266.6 V290.6 Q3087,294.9 3082.7,294.9 H3069 L3059.5,303.6 V294.9 H3050 Q3045.7,294.9 3045.7,290.6 V266.6 Q3045.7,262.3 3050,262.3 Z" fill="none" stroke="#d6d6d6" stroke-width="4.2" stroke-linejoin="round"/>
<rect x="3053.2" y="272.3" width="26.6" height="3.9" fill="#d6d6d6"/>
<rect x="3053.2" y="281.3" width="19.9" height="3.9" fill="#d6d6d6"/>
<rect x="3037" y="416" width="60.5" height="60" rx="11" fill="#007070"/>
<rect x="3047" y="426" width="39" height="39.2" fill="#ffffff"/>
<g fill="#007070">
<rect x="3050.3" y="429.2" width="8.8" height="8.7"/><rect x="3062.1" y="429.2" width="20.7" height="8.7"/>
<rect x="3050.3" y="441" width="8.8" height="8.7"/><rect x="3062.1" y="441" width="20.7" height="8.7"/>
<rect x="3050.3" y="452.8" width="8.8" height="8.7"/><rect x="3062.1" y="452.8" width="20.7" height="8.7"/>
</g>
<path fill-rule="evenodd" fill="#d6d6d6" d="M3059.3,1535.1 H3073.7 V1548.2 H3082 L3066.4,1563.8 L3050.8,1548.2 H3059.3 Z M3064,1539.6 V1552.6 H3061.6 L3066.4,1557.4 L3071.2,1552.6 H3068.9 V1539.6 Z"/>
<rect x="3050.4" y="1568.2" width="32.2" height="4.8" fill="#d6d6d6"/>
<circle cx="3066.3" cy="1675.3" r="20.4" fill="none" stroke="#d6d6d6" stroke-width="4.4"/>
<rect x="3064" y="1673.2" width="4.9" height="13.4" fill="#d6d6d6"/>
<rect x="3064" y="1664" width="4.9" height="4.8" rx="1.5" fill="#d6d6d6"/>
</svg>

</div></body></html>
